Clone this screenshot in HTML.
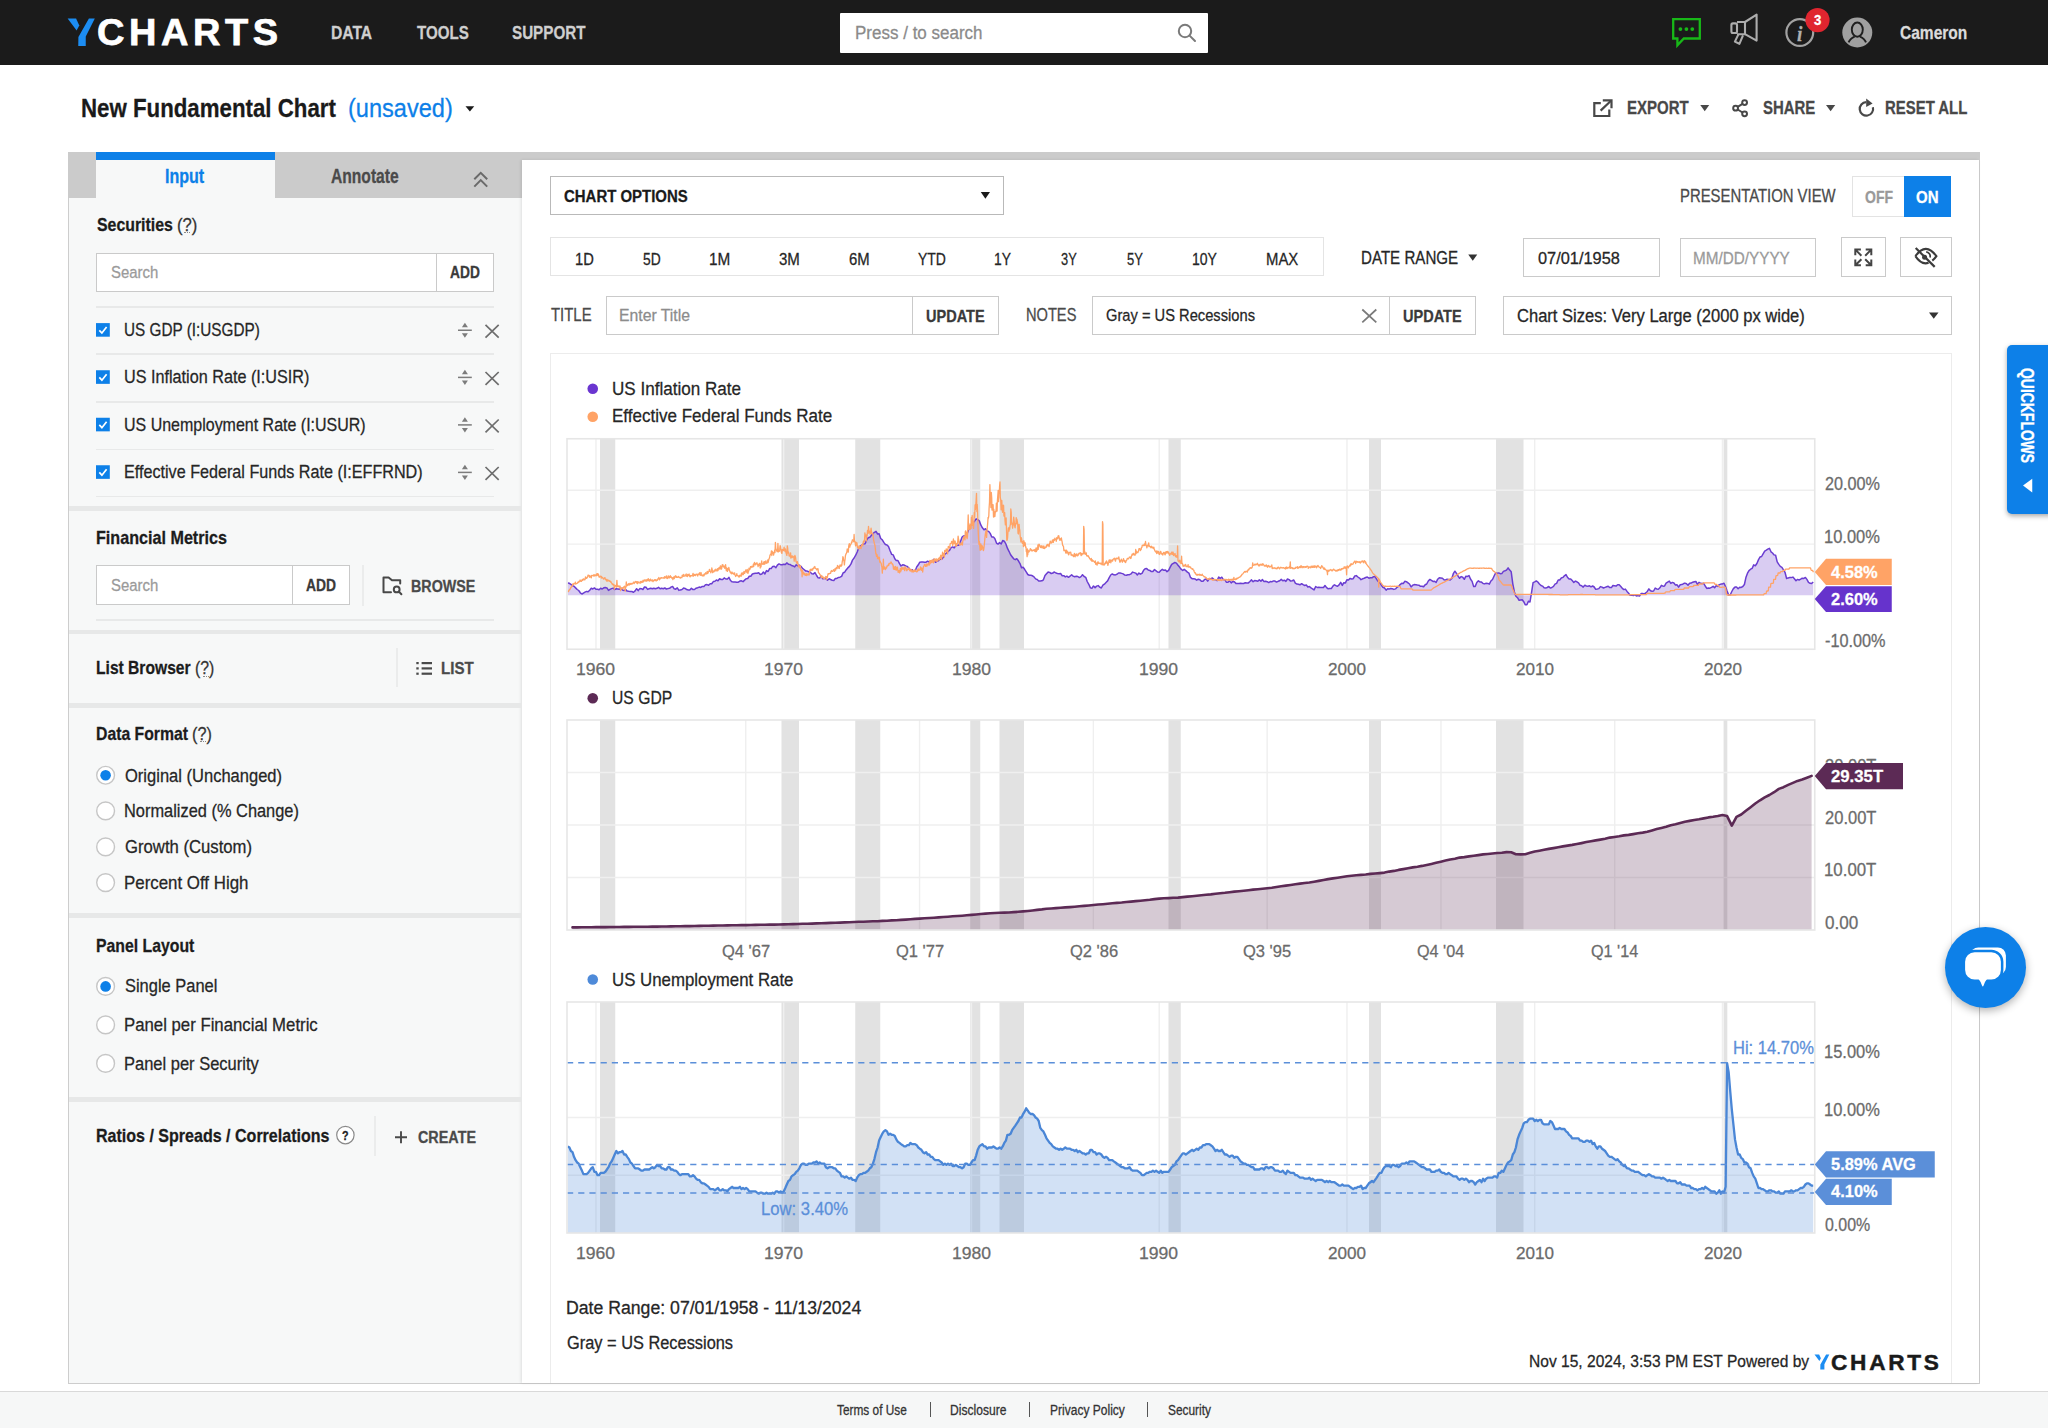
<!DOCTYPE html>
<html lang="en"><head><meta charset="utf-8"><title>New Fundamental Chart - YCharts</title>
<style>
html,body{margin:0;padding:0;background:#fff;}
body{width:2048px;height:1428px;position:relative;overflow:hidden;font-family:"Liberation Sans",sans-serif;}
.b{position:absolute;}
.t{position:absolute;white-space:pre;-webkit-text-stroke:0.28px;transform-origin:0 0;font-family:"Liberation Sans",sans-serif;font-weight:400;z-index:2;}
svg{position:absolute;left:0;top:0;overflow:visible;pointer-events:none;}
svg.chart{z-index:1;} svg.flags{z-index:2;} svg.icons{z-index:2;} svg.topicons{z-index:6;}
.tl{position:absolute;left:0;top:0;width:2048px;height:1428px;opacity:0.999;pointer-events:none;}
.qf{position:absolute;left:2021.2px;top:367.6px;width:0;height:0;transform:rotate(90deg);transform-origin:0 0;z-index:6;}
</style></head>
<body>
<!-- page chrome -->
<div class="b" style="left:0px;top:0px;width:2048.00px;height:64.50px;background:#1b1b1b;"></div>
<div class="b" style="left:839.5px;top:12.5px;width:368.75px;height:40.00px;background:#fff;border-radius:1px;"></div>
<div class="b" style="left:0px;top:1391px;width:2048.00px;height:37.00px;background:#f6f7f7;border-top:1px solid #d9d9d9;"></div>
<div class="b" style="left:929.5px;top:1402px;width:1.10px;height:15.00px;background:#555;"></div>
<div class="b" style="left:1028.5px;top:1402px;width:1.10px;height:15.00px;background:#555;"></div>
<div class="b" style="left:1146.5px;top:1402px;width:1.10px;height:15.00px;background:#555;"></div>
<div class="b" style="left:68px;top:151.75px;width:1912.00px;height:1231.85px;background:#fff;box-sizing:border-box;border:1px solid #cdcdcd;border-top:none;"></div>
<div class="b" style="left:68px;top:151.75px;width:1912.00px;height:7.85px;background:#cbcbcb;"></div>
<div class="b" style="left:69px;top:159.6px;width:452.60px;height:1223.00px;background:#f7f8f8;"></div>
<div class="b" style="left:68px;top:151.75px;width:454.00px;height:45.75px;background:#cbcbcb;"></div>
<div class="b" style="left:96px;top:151.75px;width:179.00px;height:45.85px;background:#f7f8f8;"></div>
<div class="b" style="left:96px;top:151.75px;width:179.00px;height:8.25px;background:#0d80e8;"></div>
<div class="b" style="left:522px;top:159.6px;width:1457.00px;height:1223.00px;background:#fff;box-shadow:-1px 0 3px rgba(0,0,0,0.10);"></div>
<div class="b" style="left:96.25px;top:306.2px;width:398.00px;height:1.60px;background:#e8e9e9;"></div>
<div class="b" style="left:96.25px;top:353.4px;width:398.00px;height:1.60px;background:#e8e9e9;"></div>
<div class="b" style="left:96.25px;top:401.2px;width:398.00px;height:1.60px;background:#e8e9e9;"></div>
<div class="b" style="left:96.25px;top:448.7px;width:398.00px;height:1.60px;background:#e8e9e9;"></div>
<div class="b" style="left:96.25px;top:495.7px;width:398.00px;height:1.60px;background:#e8e9e9;"></div>
<div class="b" style="left:96.25px;top:619.2px;width:398.00px;height:1.60px;background:#e8e9e9;"></div>
<div class="b" style="left:69px;top:505.75px;width:452.60px;height:5.00px;background:#e7e8e8;"></div>
<div class="b" style="left:69px;top:629.5px;width:452.60px;height:4.70px;background:#e7e8e8;"></div>
<div class="b" style="left:69px;top:703.25px;width:452.60px;height:4.65px;background:#e7e8e8;"></div>
<div class="b" style="left:69px;top:913.25px;width:452.60px;height:5.00px;background:#e7e8e8;"></div>
<div class="b" style="left:69px;top:1096.75px;width:452.60px;height:5.00px;background:#e7e8e8;"></div>
<div class="b" style="left:362.2px;top:564.5px;width:1.60px;height:41.25px;background:#ebecec;"></div>
<div class="b" style="left:395.95px;top:648.25px;width:1.60px;height:38.75px;background:#ebecec;"></div>
<div class="b" style="left:374.2px;top:1116px;width:1.60px;height:39.50px;background:#ebecec;"></div>
<div class="b" style="left:96.25px;top:252.5px;width:398.00px;height:39.80px;background:#fff;box-sizing:border-box;border:1px solid #cacaca;"></div>
<div class="b" style="left:436px;top:252.5px;width:1.00px;height:39.80px;background:#cacaca;"></div>
<div class="b" style="left:96.25px;top:565.25px;width:253.75px;height:39.75px;background:#fff;box-sizing:border-box;border:1px solid #cacaca;"></div>
<div class="b" style="left:292.2px;top:565.25px;width:1.00px;height:39.75px;background:#cacaca;"></div>
<div class="b" style="left:550.25px;top:175.5px;width:453.50px;height:39.50px;background:#fff;box-sizing:border-box;border:1px solid #b9b9b9;"></div>
<div class="b" style="left:1851.5px;top:175.75px;width:99.50px;height:41.25px;background:#fff;box-sizing:border-box;border:1px solid #e3e3e3;"></div>
<div class="b" style="left:1903.5px;top:175.75px;width:47.50px;height:41.25px;background:#0d80e8;"></div>
<div class="b" style="left:550.25px;top:237px;width:773.25px;height:39.40px;background:#fff;box-sizing:border-box;border:1px solid #e4e4e4;"></div>
<div class="b" style="left:1523.25px;top:237.5px;width:137.00px;height:39.50px;background:#fff;box-sizing:border-box;border:1px solid #cacaca;"></div>
<div class="b" style="left:1679.75px;top:237.5px;width:136.25px;height:39.50px;background:#fff;box-sizing:border-box;border:1px solid #cacaca;"></div>
<div class="b" style="left:1841px;top:236.75px;width:45.00px;height:40.00px;background:#fff;box-sizing:border-box;border:1px solid #cacaca;"></div>
<div class="b" style="left:1899.75px;top:236.75px;width:52.00px;height:40.00px;background:#fff;box-sizing:border-box;border:1px solid #cacaca;"></div>
<div class="b" style="left:606.25px;top:295.5px;width:392.50px;height:39.00px;background:#fff;box-sizing:border-box;border:1px solid #cacaca;"></div>
<div class="b" style="left:912px;top:295.5px;width:1.00px;height:39.00px;background:#cacaca;"></div>
<div class="b" style="left:1092px;top:295.5px;width:383.75px;height:39.00px;background:#fff;box-sizing:border-box;border:1px solid #cacaca;"></div>
<div class="b" style="left:1389px;top:295.5px;width:1.00px;height:39.00px;background:#cacaca;"></div>
<div class="b" style="left:1503.25px;top:295.5px;width:448.50px;height:39.00px;background:#fff;box-sizing:border-box;border:1px solid #cacaca;"></div>
<div class="b" style="left:550.25px;top:353px;width:1401.50px;height:1029.60px;box-sizing:border-box;border:1px solid #ececec;border-bottom:none;"></div>
<div class="b" style="left:183.9px;top:232.2px;width:6.40px;height:1.00px;border-bottom:1px dotted #8a8a8a;height:0;"></div>
<div class="b" style="left:202.65px;top:675.7px;width:6.40px;height:1.00px;border-bottom:1px dotted #8a8a8a;height:0;"></div>
<div class="b" style="left:199.65px;top:741.45px;width:6.40px;height:1.00px;border-bottom:1px dotted #8a8a8a;height:0;"></div>
<div class="b" style="left:2007.25px;top:344.5px;width:44.75px;height:169.25px;background:#0d80e8;border-radius:5px 0 0 5px;box-shadow:0 2px 5px rgba(0,0,0,0.35);z-index:5;"></div>
<div class="b" style="left:1945.1px;top:926.8px;width:81.20px;height:81.20px;background:#0d80e8;border-radius:50%;box-shadow:0 3px 8px rgba(0,0,0,0.3);z-index:5;"></div>
<!-- chart -->
<svg class="chart" width="2048" height="1428" viewBox="0 0 2048 1428">
<defs><clipPath id="c1"><rect x="567.0" y="438.75" width="1247.75" height="210.5"/></clipPath><clipPath id="c2"><rect x="567.0" y="720.0" width="1247.75" height="210.0"/></clipPath><clipPath id="c3"><rect x="567.0" y="1002.0" width="1247.75" height="231.0"/></clipPath></defs>
<g>
<rect x="567.0" y="438.75" width="1247.75" height="210.5" fill="#fff"/>
<rect x="600" y="438.75" width="15.25" height="210.5" fill="#e2e2e2"/>
<rect x="781.5" y="438.75" width="17.50" height="210.5" fill="#e2e2e2"/>
<rect x="855.25" y="438.75" width="25.00" height="210.5" fill="#e2e2e2"/>
<rect x="970.25" y="438.75" width="10.00" height="210.5" fill="#e2e2e2"/>
<rect x="999.5" y="438.75" width="24.50" height="210.5" fill="#e2e2e2"/>
<rect x="1168.5" y="438.75" width="12.25" height="210.5" fill="#e2e2e2"/>
<rect x="1369" y="438.75" width="12.00" height="210.5" fill="#e2e2e2"/>
<rect x="1496" y="438.75" width="27.50" height="210.5" fill="#e2e2e2"/>
<rect x="1723.6" y="438.75" width="3.70" height="210.5" fill="#e2e2e2"/>
<line x1="595.95" x2="595.95" y1="438.75" y2="649.25" stroke="#efefef" stroke-width="1.4"/>
<line x1="783.70" x2="783.70" y1="438.75" y2="649.25" stroke="#efefef" stroke-width="1.4"/>
<line x1="971.45" x2="971.45" y1="438.75" y2="649.25" stroke="#efefef" stroke-width="1.4"/>
<line x1="1159.20" x2="1159.20" y1="438.75" y2="649.25" stroke="#efefef" stroke-width="1.4"/>
<line x1="1346.95" x2="1346.95" y1="438.75" y2="649.25" stroke="#efefef" stroke-width="1.4"/>
<line x1="1534.70" x2="1534.70" y1="438.75" y2="649.25" stroke="#efefef" stroke-width="1.4"/>
<line x1="1722.45" x2="1722.45" y1="438.75" y2="649.25" stroke="#efefef" stroke-width="1.4"/>
<line x1="567.0" x2="1814.75" y1="490.30" y2="490.30" stroke="#efefef" stroke-width="1.4"/>
<line x1="567.0" x2="1814.75" y1="544.10" y2="544.10" stroke="#efefef" stroke-width="1.4"/>
</g>
<g>
<rect x="567.0" y="720.0" width="1247.75" height="210.0" fill="#fff"/>
<rect x="600" y="720.0" width="15.25" height="210.0" fill="#e2e2e2"/>
<rect x="781.5" y="720.0" width="17.50" height="210.0" fill="#e2e2e2"/>
<rect x="855.25" y="720.0" width="25.00" height="210.0" fill="#e2e2e2"/>
<rect x="970.25" y="720.0" width="10.00" height="210.0" fill="#e2e2e2"/>
<rect x="999.5" y="720.0" width="24.50" height="210.0" fill="#e2e2e2"/>
<rect x="1168.5" y="720.0" width="12.25" height="210.0" fill="#e2e2e2"/>
<rect x="1369" y="720.0" width="12.00" height="210.0" fill="#e2e2e2"/>
<rect x="1496" y="720.0" width="27.50" height="210.0" fill="#e2e2e2"/>
<rect x="1723.6" y="720.0" width="3.70" height="210.0" fill="#e2e2e2"/>
<line x1="745.75" x2="745.75" y1="720.0" y2="930.0" stroke="#efefef" stroke-width="1.4"/>
<line x1="919.55" x2="919.55" y1="720.0" y2="930.0" stroke="#efefef" stroke-width="1.4"/>
<line x1="1093.35" x2="1093.35" y1="720.0" y2="930.0" stroke="#efefef" stroke-width="1.4"/>
<line x1="1267.15" x2="1267.15" y1="720.0" y2="930.0" stroke="#efefef" stroke-width="1.4"/>
<line x1="1440.95" x2="1440.95" y1="720.0" y2="930.0" stroke="#efefef" stroke-width="1.4"/>
<line x1="1614.75" x2="1614.75" y1="720.0" y2="930.0" stroke="#efefef" stroke-width="1.4"/>
<line x1="567.0" x2="1814.75" y1="772.50" y2="772.50" stroke="#efefef" stroke-width="1.4"/>
<line x1="567.0" x2="1814.75" y1="825.00" y2="825.00" stroke="#efefef" stroke-width="1.4"/>
<line x1="567.0" x2="1814.75" y1="877.50" y2="877.50" stroke="#efefef" stroke-width="1.4"/>
</g>
<g>
<rect x="567.0" y="1002.0" width="1247.75" height="231.0" fill="#fff"/>
<rect x="600" y="1002.0" width="15.25" height="231.0" fill="#e2e2e2"/>
<rect x="781.5" y="1002.0" width="17.50" height="231.0" fill="#e2e2e2"/>
<rect x="855.25" y="1002.0" width="25.00" height="231.0" fill="#e2e2e2"/>
<rect x="970.25" y="1002.0" width="10.00" height="231.0" fill="#e2e2e2"/>
<rect x="999.5" y="1002.0" width="24.50" height="231.0" fill="#e2e2e2"/>
<rect x="1168.5" y="1002.0" width="12.25" height="231.0" fill="#e2e2e2"/>
<rect x="1369" y="1002.0" width="12.00" height="231.0" fill="#e2e2e2"/>
<rect x="1496" y="1002.0" width="27.50" height="231.0" fill="#e2e2e2"/>
<rect x="1723.6" y="1002.0" width="3.70" height="231.0" fill="#e2e2e2"/>
<line x1="595.95" x2="595.95" y1="1002.0" y2="1233.0" stroke="#efefef" stroke-width="1.4"/>
<line x1="783.70" x2="783.70" y1="1002.0" y2="1233.0" stroke="#efefef" stroke-width="1.4"/>
<line x1="971.45" x2="971.45" y1="1002.0" y2="1233.0" stroke="#efefef" stroke-width="1.4"/>
<line x1="1159.20" x2="1159.20" y1="1002.0" y2="1233.0" stroke="#efefef" stroke-width="1.4"/>
<line x1="1346.95" x2="1346.95" y1="1002.0" y2="1233.0" stroke="#efefef" stroke-width="1.4"/>
<line x1="1534.70" x2="1534.70" y1="1002.0" y2="1233.0" stroke="#efefef" stroke-width="1.4"/>
<line x1="1722.45" x2="1722.45" y1="1002.0" y2="1233.0" stroke="#efefef" stroke-width="1.4"/>
<line x1="567.0" x2="1814.75" y1="1117.50" y2="1117.50" stroke="#efefef" stroke-width="1.4"/>
<line x1="567.0" x2="1814.75" y1="1175.25" y2="1175.25" stroke="#efefef" stroke-width="1.4"/>
</g>
<g clip-path="url(#c1)"><polygon fill="#6633cc" fill-opacity="0.25" points="567.8,595.3 567.8,582.9 569.4,583.3 570.9,584.4 572.5,585.8 574.0,586.3 575.6,587.9 577.2,589.5 578.7,590.5 580.3,592.8 581.9,594.0 583.4,593.1 585.0,592.1 586.6,591.4 588.1,591.7 589.7,590.2 591.3,588.3 592.8,589.0 594.4,587.9 595.9,589.3 597.5,589.2 599.1,589.7 600.6,588.3 602.2,589.0 603.8,587.8 605.3,587.5 606.9,587.9 608.5,590.4 610.0,589.4 611.6,588.6 613.2,588.1 614.7,589.5 616.3,588.8 617.9,589.0 619.4,589.3 621.0,588.1 622.5,590.0 624.1,590.4 625.7,589.6 627.2,591.1 628.8,591.3 630.4,591.4 631.9,591.5 633.5,592.3 635.1,590.9 636.6,588.7 638.2,590.6 639.8,588.6 641.3,588.7 642.9,589.5 644.5,587.0 646.0,587.3 647.6,589.4 649.1,588.8 650.7,588.2 652.3,588.8 653.8,588.2 655.4,588.8 657.0,588.3 658.5,587.3 660.1,588.8 661.7,588.3 663.2,588.7 664.8,588.0 666.4,589.0 667.9,588.6 669.5,588.3 671.0,587.1 672.6,586.4 674.2,588.8 675.7,589.2 677.3,587.9 678.9,590.4 680.4,589.9 682.0,589.5 683.6,588.1 685.1,588.4 686.7,589.6 688.3,590.0 689.8,590.0 691.4,588.2 693.0,589.6 694.5,589.5 696.1,588.2 697.6,587.7 699.2,587.1 700.8,587.4 702.3,586.4 703.9,586.4 705.5,584.7 707.0,584.6 708.6,585.2 710.2,583.7 711.7,583.7 713.3,581.6 714.9,581.3 716.4,580.0 718.0,580.8 719.6,578.8 721.1,579.5 722.7,579.5 724.2,577.9 725.8,579.0 727.4,579.0 728.9,577.4 730.5,580.5 732.1,581.8 733.6,581.9 735.2,581.9 736.8,582.2 738.3,582.2 739.9,581.1 741.5,580.8 743.0,581.7 744.6,580.1 746.1,578.7 747.7,578.5 749.3,576.3 750.8,576.3 752.4,574.0 754.0,573.6 755.5,573.2 757.1,573.3 758.7,572.8 760.2,574.4 761.8,574.0 763.4,572.1 764.9,573.9 766.5,570.6 768.1,571.5 769.6,568.6 771.2,568.6 772.7,566.4 774.3,566.3 775.9,567.7 777.4,565.2 779.0,563.9 780.6,564.7 782.1,564.7 783.7,564.3 785.3,564.6 786.8,562.9 788.4,564.2 790.0,564.4 791.5,565.5 793.1,565.9 794.7,566.9 796.2,564.8 797.8,565.8 799.3,565.2 800.9,566.3 802.5,568.4 804.0,569.5 805.6,570.9 807.2,571.1 808.7,571.7 810.3,572.2 811.9,573.7 813.4,573.9 815.0,572.6 816.6,575.5 818.1,577.8 819.7,577.9 821.2,576.4 822.8,578.8 824.4,578.4 825.9,578.6 827.5,580.2 829.1,578.8 830.6,579.5 832.2,580.2 833.8,580.4 835.3,578.6 836.9,578.4 838.5,577.4 840.0,577.2 841.6,576.4 843.2,572.8 844.7,572.2 846.3,569.7 847.8,567.9 849.4,566.4 851.0,563.9 852.5,560.1 854.1,558.0 855.7,555.2 857.2,552.0 858.8,547.8 860.4,546.1 861.9,544.7 863.5,544.1 865.1,543.7 866.6,540.1 868.2,537.8 869.8,537.2 871.3,535.4 872.9,533.8 874.4,532.3 876.0,531.4 877.6,534.0 879.1,533.7 880.7,538.5 882.3,539.8 883.8,542.4 885.4,544.5 887.0,544.9 888.5,546.5 890.1,550.7 891.7,554.4 893.2,554.9 894.8,558.7 896.3,560.6 897.9,560.5 899.5,563.7 901.0,566.0 902.6,564.8 904.2,565.1 905.7,565.9 907.3,566.4 908.9,568.1 910.4,569.9 912.0,569.7 913.6,571.0 915.1,571.0 916.7,567.0 918.3,564.8 919.8,562.2 921.4,562.1 922.9,562.1 924.5,562.3 926.1,562.2 927.6,561.2 929.2,562.0 930.8,561.1 932.3,561.0 933.9,559.3 935.5,562.3 937.0,561.1 938.6,560.7 940.2,559.3 941.7,559.2 943.3,557.2 944.9,554.2 946.4,553.1 948.0,551.5 949.5,550.4 951.1,547.6 952.7,546.9 954.2,547.9 955.8,545.8 957.4,545.3 958.9,545.3 960.5,541.4 962.1,537.0 963.6,535.9 965.2,535.9 966.8,534.7 968.3,530.4 969.9,527.3 971.4,524.0 973.0,522.7 974.6,521.1 976.1,518.8 977.7,519.6 979.3,520.8 980.8,524.9 982.4,527.8 984.0,529.8 985.5,528.7 987.1,531.1 988.7,531.4 990.2,533.4 991.8,537.0 993.4,536.9 994.9,538.8 996.5,543.1 998.0,544.1 999.6,542.6 1001.2,544.0 1002.7,540.5 1004.3,541.2 1005.9,544.0 1007.4,548.2 1009.0,551.3 1010.6,554.7 1012.1,556.7 1013.7,558.8 1015.3,559.7 1016.8,558.7 1018.4,560.8 1020.0,563.6 1021.5,567.7 1023.1,567.2 1024.6,569.3 1026.2,571.8 1027.8,574.5 1029.3,575.2 1030.9,575.3 1032.5,575.8 1034.0,576.9 1035.6,578.9 1037.2,579.5 1038.7,581.0 1040.3,580.9 1041.9,580.8 1043.4,579.8 1045.0,575.5 1046.5,573.7 1048.1,572.1 1049.7,572.4 1051.2,573.6 1052.8,573.0 1054.4,572.0 1055.9,573.0 1057.5,573.4 1059.1,573.7 1060.6,573.5 1062.2,575.7 1063.8,575.7 1065.3,576.9 1066.9,576.1 1068.5,577.3 1070.0,576.2 1071.6,574.8 1073.1,576.1 1074.7,576.8 1076.3,576.3 1077.8,576.5 1079.4,577.6 1081.0,576.6 1082.5,574.7 1084.1,576.5 1085.7,577.3 1087.2,581.5 1088.8,584.3 1090.4,587.9 1091.9,588.3 1093.5,586.0 1095.1,587.6 1096.6,586.1 1098.2,585.6 1099.7,587.2 1101.3,588.0 1102.9,585.2 1104.4,584.2 1106.0,582.5 1107.6,580.9 1109.1,577.9 1110.7,575.0 1112.3,573.9 1113.8,574.8 1115.4,574.9 1117.0,574.3 1118.5,573.0 1120.1,573.0 1121.6,573.4 1123.2,573.9 1124.8,575.1 1126.3,575.2 1127.9,574.7 1129.5,574.7 1131.0,573.9 1132.6,572.1 1134.2,572.6 1135.7,573.1 1137.3,574.9 1138.9,573.1 1140.4,574.2 1142.0,573.4 1143.6,570.3 1145.1,568.8 1146.7,568.6 1148.2,570.0 1149.8,570.4 1151.4,571.6 1152.9,571.4 1154.5,569.6 1156.1,570.8 1157.6,572.1 1159.2,572.3 1160.8,570.5 1162.3,569.3 1163.9,570.3 1165.5,570.0 1167.0,571.7 1168.6,570.4 1170.2,567.2 1171.7,564.4 1173.3,563.3 1174.8,562.5 1176.4,563.1 1178.0,565.3 1179.5,567.1 1181.1,569.2 1182.7,570.5 1184.2,569.3 1185.8,570.6 1187.4,572.1 1188.9,573.1 1190.5,577.4 1192.1,578.7 1193.6,578.7 1195.2,579.1 1196.7,580.2 1198.3,579.2 1199.9,579.7 1201.4,581.3 1203.0,581.3 1204.6,579.4 1206.1,579.0 1207.7,581.1 1209.3,578.7 1210.8,578.7 1212.4,578.0 1214.0,579.6 1215.5,579.8 1217.1,580.6 1218.7,577.0 1220.2,578.4 1221.8,577.2 1223.3,579.6 1224.9,579.9 1226.5,582.3 1228.0,582.2 1229.6,580.9 1231.2,582.9 1232.7,581.4 1234.3,581.8 1235.9,583.4 1237.4,583.5 1239.0,583.5 1240.6,583.2 1242.1,583.5 1243.7,583.5 1245.3,582.7 1246.8,582.9 1248.4,582.9 1249.9,581.5 1251.5,579.9 1253.1,581.7 1254.6,580.6 1256.2,580.8 1257.8,581.3 1259.3,579.9 1260.9,581.1 1262.5,579.6 1264.0,581.6 1265.6,581.2 1267.2,581.7 1268.7,582.6 1270.3,581.5 1271.8,581.8 1273.4,580.9 1275.0,581.1 1276.5,582.1 1278.1,581.3 1279.7,580.7 1281.2,579.4 1282.8,580.8 1284.4,580.2 1285.9,581.4 1287.5,579.0 1289.1,579.6 1290.6,581.1 1292.2,580.7 1293.8,580.0 1295.3,583.1 1296.9,584.1 1298.4,584.2 1300.0,584.8 1301.6,583.7 1303.1,584.7 1304.7,585.5 1306.3,585.1 1307.8,586.9 1309.4,586.5 1311.0,587.9 1312.5,588.8 1314.1,589.9 1315.7,586.5 1317.2,587.5 1318.8,587.3 1320.4,587.5 1321.9,587.4 1323.5,587.5 1325.0,585.5 1326.6,587.6 1328.2,588.8 1329.7,588.5 1331.3,588.6 1332.9,586.1 1334.4,584.8 1336.0,585.7 1337.6,586.2 1339.1,584.9 1340.7,582.3 1342.3,585.4 1343.8,582.7 1345.4,582.9 1346.9,579.7 1348.5,580.0 1350.1,578.4 1351.6,579.0 1353.2,578.7 1354.8,576.0 1356.3,575.6 1357.9,577.0 1359.5,578.1 1361.0,579.7 1362.6,578.8 1364.2,578.2 1365.7,577.5 1367.3,577.0 1368.9,578.2 1370.4,577.8 1372.0,577.8 1373.5,576.7 1375.1,576.6 1376.7,579.3 1378.2,581.5 1379.8,582.8 1381.4,585.2 1382.9,587.3 1384.5,588.0 1386.1,590.1 1387.6,588.8 1389.2,589.0 1390.8,588.6 1392.3,588.8 1393.9,589.4 1395.5,588.9 1397.0,587.3 1398.6,586.4 1400.1,584.6 1401.7,583.3 1403.3,583.5 1404.8,581.3 1406.4,581.7 1408.0,582.9 1409.5,584.0 1411.1,586.9 1412.7,585.2 1414.2,584.6 1415.8,584.7 1417.4,585.0 1418.9,585.2 1420.5,586.3 1422.0,586.2 1423.6,586.8 1425.2,584.7 1426.7,584.0 1428.3,581.0 1429.9,579.4 1431.4,580.3 1433.0,581.4 1434.6,581.2 1436.1,582.5 1437.7,579.2 1439.3,577.7 1440.8,577.9 1442.4,578.2 1444.0,579.7 1445.5,579.9 1447.1,579.3 1448.6,579.5 1450.2,579.9 1451.8,578.5 1453.3,573.7 1454.9,571.2 1456.5,573.4 1458.0,576.0 1459.6,578.3 1461.2,576.6 1462.7,577.2 1464.3,579.3 1465.9,576.2 1467.4,576.4 1469.0,575.6 1470.6,579.3 1472.1,581.4 1473.7,586.6 1475.2,586.4 1476.8,582.5 1478.4,580.8 1479.9,581.9 1481.5,582.1 1483.1,583.5 1484.6,583.9 1486.2,583.3 1487.8,583.4 1489.3,584.1 1490.9,581.0 1492.5,579.5 1494.0,576.3 1495.6,573.0 1497.1,573.2 1498.7,572.9 1500.3,573.7 1501.8,573.6 1503.4,571.4 1505.0,570.8 1506.5,570.1 1508.1,567.9 1509.7,570.1 1511.2,571.8 1512.8,583.8 1514.4,592.0 1515.9,596.3 1517.5,597.7 1519.1,600.3 1520.6,600.0 1522.2,599.8 1523.7,601.7 1525.3,604.8 1526.9,604.7 1528.4,601.3 1530.0,602.0 1531.6,592.1 1533.1,582.6 1534.7,581.9 1536.3,580.9 1537.8,582.0 1539.4,584.0 1541.0,585.5 1542.5,586.1 1544.1,587.8 1545.7,588.1 1547.2,587.5 1548.8,586.5 1550.3,588.1 1551.9,587.5 1553.5,586.4 1555.0,584.2 1556.6,583.3 1558.2,580.0 1559.7,579.9 1561.3,578.0 1562.9,577.4 1564.4,575.8 1566.0,574.6 1567.6,577.5 1569.1,579.0 1570.7,579.0 1572.2,580.6 1573.8,582.5 1575.4,581.1 1576.9,581.8 1578.5,582.8 1580.1,585.3 1581.6,585.7 1583.2,587.1 1584.8,585.2 1586.3,586.0 1587.9,586.2 1589.5,585.8 1591.0,586.8 1592.6,586.0 1594.2,587.0 1595.7,589.3 1597.3,589.0 1598.8,588.6 1600.4,586.6 1602.0,587.1 1603.5,588.0 1605.1,587.4 1606.7,586.8 1608.2,586.2 1609.8,587.6 1611.4,587.6 1612.9,585.5 1614.5,585.8 1616.1,586.1 1617.6,584.8 1619.2,584.8 1620.8,586.5 1622.3,588.3 1623.9,589.6 1625.4,589.1 1627.0,591.4 1628.6,593.2 1630.1,595.2 1631.7,595.0 1633.3,595.6 1634.8,594.9 1636.4,595.9 1638.0,595.6 1639.5,596.1 1641.1,593.6 1642.7,593.5 1644.2,593.9 1645.8,593.0 1647.3,591.4 1648.9,588.9 1650.5,590.8 1652.0,591.3 1653.6,591.0 1655.2,588.1 1656.7,588.9 1658.3,589.2 1659.9,587.8 1661.4,585.3 1663.0,586.2 1664.6,585.9 1666.1,583.2 1667.7,582.1 1669.3,581.1 1670.8,583.4 1672.4,582.4 1673.9,583.0 1675.5,585.1 1677.1,584.8 1678.6,587.1 1680.2,584.8 1681.8,584.6 1683.3,583.8 1684.9,583.1 1686.5,583.8 1688.0,585.3 1689.6,583.3 1691.2,583.1 1692.7,582.2 1694.3,581.7 1695.9,581.4 1697.4,584.3 1699.0,582.4 1700.5,583.3 1702.1,583.4 1703.7,583.3 1705.2,586.0 1706.8,588.4 1708.4,588.1 1709.9,588.2 1711.5,587.4 1713.1,586.3 1714.6,587.8 1716.2,585.6 1717.8,586.4 1719.3,584.6 1720.9,584.1 1722.4,583.9 1724.0,583.2 1725.6,586.8 1727.1,591.1 1728.7,595.1 1730.3,594.7 1731.8,591.5 1733.4,588.6 1735.0,587.1 1736.5,587.1 1738.1,588.8 1739.7,587.2 1741.2,587.4 1742.8,586.5 1744.4,584.5 1745.9,577.6 1747.5,573.2 1749.0,570.6 1750.6,569.2 1752.2,568.3 1753.7,564.9 1755.3,565.8 1756.9,563.5 1758.4,559.9 1760.0,557.0 1761.6,556.5 1763.1,553.9 1764.7,551.1 1766.3,550.1 1767.8,549.1 1769.4,548.3 1771.0,551.8 1772.5,553.0 1774.1,554.9 1775.6,555.3 1777.2,561.9 1778.8,564.4 1780.3,566.4 1781.9,567.3 1783.5,569.8 1785.0,572.3 1786.6,578.5 1788.2,577.9 1789.7,577.6 1791.3,577.6 1792.9,577.1 1794.4,578.7 1796.0,580.7 1797.5,579.4 1799.1,580.0 1800.7,579.2 1802.2,578.2 1803.8,578.4 1805.4,577.5 1806.9,579.4 1808.5,582.4 1810.1,583.3 1811.6,583.6 1813.2,581.9 1813.2,595.3"/>
<polyline fill="none" stroke="#6a3dd1" stroke-width="1.5" stroke-linejoin="round" points="567.8,582.9 569.4,583.3 570.9,584.4 572.5,585.8 574.0,586.3 575.6,587.9 577.2,589.5 578.7,590.5 580.3,592.8 581.9,594.0 583.4,593.1 585.0,592.1 586.6,591.4 588.1,591.7 589.7,590.2 591.3,588.3 592.8,589.0 594.4,587.9 595.9,589.3 597.5,589.2 599.1,589.7 600.6,588.3 602.2,589.0 603.8,587.8 605.3,587.5 606.9,587.9 608.5,590.4 610.0,589.4 611.6,588.6 613.2,588.1 614.7,589.5 616.3,588.8 617.9,589.0 619.4,589.3 621.0,588.1 622.5,590.0 624.1,590.4 625.7,589.6 627.2,591.1 628.8,591.3 630.4,591.4 631.9,591.5 633.5,592.3 635.1,590.9 636.6,588.7 638.2,590.6 639.8,588.6 641.3,588.7 642.9,589.5 644.5,587.0 646.0,587.3 647.6,589.4 649.1,588.8 650.7,588.2 652.3,588.8 653.8,588.2 655.4,588.8 657.0,588.3 658.5,587.3 660.1,588.8 661.7,588.3 663.2,588.7 664.8,588.0 666.4,589.0 667.9,588.6 669.5,588.3 671.0,587.1 672.6,586.4 674.2,588.8 675.7,589.2 677.3,587.9 678.9,590.4 680.4,589.9 682.0,589.5 683.6,588.1 685.1,588.4 686.7,589.6 688.3,590.0 689.8,590.0 691.4,588.2 693.0,589.6 694.5,589.5 696.1,588.2 697.6,587.7 699.2,587.1 700.8,587.4 702.3,586.4 703.9,586.4 705.5,584.7 707.0,584.6 708.6,585.2 710.2,583.7 711.7,583.7 713.3,581.6 714.9,581.3 716.4,580.0 718.0,580.8 719.6,578.8 721.1,579.5 722.7,579.5 724.2,577.9 725.8,579.0 727.4,579.0 728.9,577.4 730.5,580.5 732.1,581.8 733.6,581.9 735.2,581.9 736.8,582.2 738.3,582.2 739.9,581.1 741.5,580.8 743.0,581.7 744.6,580.1 746.1,578.7 747.7,578.5 749.3,576.3 750.8,576.3 752.4,574.0 754.0,573.6 755.5,573.2 757.1,573.3 758.7,572.8 760.2,574.4 761.8,574.0 763.4,572.1 764.9,573.9 766.5,570.6 768.1,571.5 769.6,568.6 771.2,568.6 772.7,566.4 774.3,566.3 775.9,567.7 777.4,565.2 779.0,563.9 780.6,564.7 782.1,564.7 783.7,564.3 785.3,564.6 786.8,562.9 788.4,564.2 790.0,564.4 791.5,565.5 793.1,565.9 794.7,566.9 796.2,564.8 797.8,565.8 799.3,565.2 800.9,566.3 802.5,568.4 804.0,569.5 805.6,570.9 807.2,571.1 808.7,571.7 810.3,572.2 811.9,573.7 813.4,573.9 815.0,572.6 816.6,575.5 818.1,577.8 819.7,577.9 821.2,576.4 822.8,578.8 824.4,578.4 825.9,578.6 827.5,580.2 829.1,578.8 830.6,579.5 832.2,580.2 833.8,580.4 835.3,578.6 836.9,578.4 838.5,577.4 840.0,577.2 841.6,576.4 843.2,572.8 844.7,572.2 846.3,569.7 847.8,567.9 849.4,566.4 851.0,563.9 852.5,560.1 854.1,558.0 855.7,555.2 857.2,552.0 858.8,547.8 860.4,546.1 861.9,544.7 863.5,544.1 865.1,543.7 866.6,540.1 868.2,537.8 869.8,537.2 871.3,535.4 872.9,533.8 874.4,532.3 876.0,531.4 877.6,534.0 879.1,533.7 880.7,538.5 882.3,539.8 883.8,542.4 885.4,544.5 887.0,544.9 888.5,546.5 890.1,550.7 891.7,554.4 893.2,554.9 894.8,558.7 896.3,560.6 897.9,560.5 899.5,563.7 901.0,566.0 902.6,564.8 904.2,565.1 905.7,565.9 907.3,566.4 908.9,568.1 910.4,569.9 912.0,569.7 913.6,571.0 915.1,571.0 916.7,567.0 918.3,564.8 919.8,562.2 921.4,562.1 922.9,562.1 924.5,562.3 926.1,562.2 927.6,561.2 929.2,562.0 930.8,561.1 932.3,561.0 933.9,559.3 935.5,562.3 937.0,561.1 938.6,560.7 940.2,559.3 941.7,559.2 943.3,557.2 944.9,554.2 946.4,553.1 948.0,551.5 949.5,550.4 951.1,547.6 952.7,546.9 954.2,547.9 955.8,545.8 957.4,545.3 958.9,545.3 960.5,541.4 962.1,537.0 963.6,535.9 965.2,535.9 966.8,534.7 968.3,530.4 969.9,527.3 971.4,524.0 973.0,522.7 974.6,521.1 976.1,518.8 977.7,519.6 979.3,520.8 980.8,524.9 982.4,527.8 984.0,529.8 985.5,528.7 987.1,531.1 988.7,531.4 990.2,533.4 991.8,537.0 993.4,536.9 994.9,538.8 996.5,543.1 998.0,544.1 999.6,542.6 1001.2,544.0 1002.7,540.5 1004.3,541.2 1005.9,544.0 1007.4,548.2 1009.0,551.3 1010.6,554.7 1012.1,556.7 1013.7,558.8 1015.3,559.7 1016.8,558.7 1018.4,560.8 1020.0,563.6 1021.5,567.7 1023.1,567.2 1024.6,569.3 1026.2,571.8 1027.8,574.5 1029.3,575.2 1030.9,575.3 1032.5,575.8 1034.0,576.9 1035.6,578.9 1037.2,579.5 1038.7,581.0 1040.3,580.9 1041.9,580.8 1043.4,579.8 1045.0,575.5 1046.5,573.7 1048.1,572.1 1049.7,572.4 1051.2,573.6 1052.8,573.0 1054.4,572.0 1055.9,573.0 1057.5,573.4 1059.1,573.7 1060.6,573.5 1062.2,575.7 1063.8,575.7 1065.3,576.9 1066.9,576.1 1068.5,577.3 1070.0,576.2 1071.6,574.8 1073.1,576.1 1074.7,576.8 1076.3,576.3 1077.8,576.5 1079.4,577.6 1081.0,576.6 1082.5,574.7 1084.1,576.5 1085.7,577.3 1087.2,581.5 1088.8,584.3 1090.4,587.9 1091.9,588.3 1093.5,586.0 1095.1,587.6 1096.6,586.1 1098.2,585.6 1099.7,587.2 1101.3,588.0 1102.9,585.2 1104.4,584.2 1106.0,582.5 1107.6,580.9 1109.1,577.9 1110.7,575.0 1112.3,573.9 1113.8,574.8 1115.4,574.9 1117.0,574.3 1118.5,573.0 1120.1,573.0 1121.6,573.4 1123.2,573.9 1124.8,575.1 1126.3,575.2 1127.9,574.7 1129.5,574.7 1131.0,573.9 1132.6,572.1 1134.2,572.6 1135.7,573.1 1137.3,574.9 1138.9,573.1 1140.4,574.2 1142.0,573.4 1143.6,570.3 1145.1,568.8 1146.7,568.6 1148.2,570.0 1149.8,570.4 1151.4,571.6 1152.9,571.4 1154.5,569.6 1156.1,570.8 1157.6,572.1 1159.2,572.3 1160.8,570.5 1162.3,569.3 1163.9,570.3 1165.5,570.0 1167.0,571.7 1168.6,570.4 1170.2,567.2 1171.7,564.4 1173.3,563.3 1174.8,562.5 1176.4,563.1 1178.0,565.3 1179.5,567.1 1181.1,569.2 1182.7,570.5 1184.2,569.3 1185.8,570.6 1187.4,572.1 1188.9,573.1 1190.5,577.4 1192.1,578.7 1193.6,578.7 1195.2,579.1 1196.7,580.2 1198.3,579.2 1199.9,579.7 1201.4,581.3 1203.0,581.3 1204.6,579.4 1206.1,579.0 1207.7,581.1 1209.3,578.7 1210.8,578.7 1212.4,578.0 1214.0,579.6 1215.5,579.8 1217.1,580.6 1218.7,577.0 1220.2,578.4 1221.8,577.2 1223.3,579.6 1224.9,579.9 1226.5,582.3 1228.0,582.2 1229.6,580.9 1231.2,582.9 1232.7,581.4 1234.3,581.8 1235.9,583.4 1237.4,583.5 1239.0,583.5 1240.6,583.2 1242.1,583.5 1243.7,583.5 1245.3,582.7 1246.8,582.9 1248.4,582.9 1249.9,581.5 1251.5,579.9 1253.1,581.7 1254.6,580.6 1256.2,580.8 1257.8,581.3 1259.3,579.9 1260.9,581.1 1262.5,579.6 1264.0,581.6 1265.6,581.2 1267.2,581.7 1268.7,582.6 1270.3,581.5 1271.8,581.8 1273.4,580.9 1275.0,581.1 1276.5,582.1 1278.1,581.3 1279.7,580.7 1281.2,579.4 1282.8,580.8 1284.4,580.2 1285.9,581.4 1287.5,579.0 1289.1,579.6 1290.6,581.1 1292.2,580.7 1293.8,580.0 1295.3,583.1 1296.9,584.1 1298.4,584.2 1300.0,584.8 1301.6,583.7 1303.1,584.7 1304.7,585.5 1306.3,585.1 1307.8,586.9 1309.4,586.5 1311.0,587.9 1312.5,588.8 1314.1,589.9 1315.7,586.5 1317.2,587.5 1318.8,587.3 1320.4,587.5 1321.9,587.4 1323.5,587.5 1325.0,585.5 1326.6,587.6 1328.2,588.8 1329.7,588.5 1331.3,588.6 1332.9,586.1 1334.4,584.8 1336.0,585.7 1337.6,586.2 1339.1,584.9 1340.7,582.3 1342.3,585.4 1343.8,582.7 1345.4,582.9 1346.9,579.7 1348.5,580.0 1350.1,578.4 1351.6,579.0 1353.2,578.7 1354.8,576.0 1356.3,575.6 1357.9,577.0 1359.5,578.1 1361.0,579.7 1362.6,578.8 1364.2,578.2 1365.7,577.5 1367.3,577.0 1368.9,578.2 1370.4,577.8 1372.0,577.8 1373.5,576.7 1375.1,576.6 1376.7,579.3 1378.2,581.5 1379.8,582.8 1381.4,585.2 1382.9,587.3 1384.5,588.0 1386.1,590.1 1387.6,588.8 1389.2,589.0 1390.8,588.6 1392.3,588.8 1393.9,589.4 1395.5,588.9 1397.0,587.3 1398.6,586.4 1400.1,584.6 1401.7,583.3 1403.3,583.5 1404.8,581.3 1406.4,581.7 1408.0,582.9 1409.5,584.0 1411.1,586.9 1412.7,585.2 1414.2,584.6 1415.8,584.7 1417.4,585.0 1418.9,585.2 1420.5,586.3 1422.0,586.2 1423.6,586.8 1425.2,584.7 1426.7,584.0 1428.3,581.0 1429.9,579.4 1431.4,580.3 1433.0,581.4 1434.6,581.2 1436.1,582.5 1437.7,579.2 1439.3,577.7 1440.8,577.9 1442.4,578.2 1444.0,579.7 1445.5,579.9 1447.1,579.3 1448.6,579.5 1450.2,579.9 1451.8,578.5 1453.3,573.7 1454.9,571.2 1456.5,573.4 1458.0,576.0 1459.6,578.3 1461.2,576.6 1462.7,577.2 1464.3,579.3 1465.9,576.2 1467.4,576.4 1469.0,575.6 1470.6,579.3 1472.1,581.4 1473.7,586.6 1475.2,586.4 1476.8,582.5 1478.4,580.8 1479.9,581.9 1481.5,582.1 1483.1,583.5 1484.6,583.9 1486.2,583.3 1487.8,583.4 1489.3,584.1 1490.9,581.0 1492.5,579.5 1494.0,576.3 1495.6,573.0 1497.1,573.2 1498.7,572.9 1500.3,573.7 1501.8,573.6 1503.4,571.4 1505.0,570.8 1506.5,570.1 1508.1,567.9 1509.7,570.1 1511.2,571.8 1512.8,583.8 1514.4,592.0 1515.9,596.3 1517.5,597.7 1519.1,600.3 1520.6,600.0 1522.2,599.8 1523.7,601.7 1525.3,604.8 1526.9,604.7 1528.4,601.3 1530.0,602.0 1531.6,592.1 1533.1,582.6 1534.7,581.9 1536.3,580.9 1537.8,582.0 1539.4,584.0 1541.0,585.5 1542.5,586.1 1544.1,587.8 1545.7,588.1 1547.2,587.5 1548.8,586.5 1550.3,588.1 1551.9,587.5 1553.5,586.4 1555.0,584.2 1556.6,583.3 1558.2,580.0 1559.7,579.9 1561.3,578.0 1562.9,577.4 1564.4,575.8 1566.0,574.6 1567.6,577.5 1569.1,579.0 1570.7,579.0 1572.2,580.6 1573.8,582.5 1575.4,581.1 1576.9,581.8 1578.5,582.8 1580.1,585.3 1581.6,585.7 1583.2,587.1 1584.8,585.2 1586.3,586.0 1587.9,586.2 1589.5,585.8 1591.0,586.8 1592.6,586.0 1594.2,587.0 1595.7,589.3 1597.3,589.0 1598.8,588.6 1600.4,586.6 1602.0,587.1 1603.5,588.0 1605.1,587.4 1606.7,586.8 1608.2,586.2 1609.8,587.6 1611.4,587.6 1612.9,585.5 1614.5,585.8 1616.1,586.1 1617.6,584.8 1619.2,584.8 1620.8,586.5 1622.3,588.3 1623.9,589.6 1625.4,589.1 1627.0,591.4 1628.6,593.2 1630.1,595.2 1631.7,595.0 1633.3,595.6 1634.8,594.9 1636.4,595.9 1638.0,595.6 1639.5,596.1 1641.1,593.6 1642.7,593.5 1644.2,593.9 1645.8,593.0 1647.3,591.4 1648.9,588.9 1650.5,590.8 1652.0,591.3 1653.6,591.0 1655.2,588.1 1656.7,588.9 1658.3,589.2 1659.9,587.8 1661.4,585.3 1663.0,586.2 1664.6,585.9 1666.1,583.2 1667.7,582.1 1669.3,581.1 1670.8,583.4 1672.4,582.4 1673.9,583.0 1675.5,585.1 1677.1,584.8 1678.6,587.1 1680.2,584.8 1681.8,584.6 1683.3,583.8 1684.9,583.1 1686.5,583.8 1688.0,585.3 1689.6,583.3 1691.2,583.1 1692.7,582.2 1694.3,581.7 1695.9,581.4 1697.4,584.3 1699.0,582.4 1700.5,583.3 1702.1,583.4 1703.7,583.3 1705.2,586.0 1706.8,588.4 1708.4,588.1 1709.9,588.2 1711.5,587.4 1713.1,586.3 1714.6,587.8 1716.2,585.6 1717.8,586.4 1719.3,584.6 1720.9,584.1 1722.4,583.9 1724.0,583.2 1725.6,586.8 1727.1,591.1 1728.7,595.1 1730.3,594.7 1731.8,591.5 1733.4,588.6 1735.0,587.1 1736.5,587.1 1738.1,588.8 1739.7,587.2 1741.2,587.4 1742.8,586.5 1744.4,584.5 1745.9,577.6 1747.5,573.2 1749.0,570.6 1750.6,569.2 1752.2,568.3 1753.7,564.9 1755.3,565.8 1756.9,563.5 1758.4,559.9 1760.0,557.0 1761.6,556.5 1763.1,553.9 1764.7,551.1 1766.3,550.1 1767.8,549.1 1769.4,548.3 1771.0,551.8 1772.5,553.0 1774.1,554.9 1775.6,555.3 1777.2,561.9 1778.8,564.4 1780.3,566.4 1781.9,567.3 1783.5,569.8 1785.0,572.3 1786.6,578.5 1788.2,577.9 1789.7,577.6 1791.3,577.6 1792.9,577.1 1794.4,578.7 1796.0,580.7 1797.5,579.4 1799.1,580.0 1800.7,579.2 1802.2,578.2 1803.8,578.4 1805.4,577.5 1806.9,579.4 1808.5,582.4 1810.1,583.3 1811.6,583.6 1813.2,581.9"/>
<polyline fill="none" stroke="#ffa366" stroke-width="1.3" stroke-linejoin="round" points="567.8,591.7 568.1,591.3 568.5,591.6 568.9,590.6 569.2,590.0 569.6,589.5 570.0,589.6 570.3,588.7 570.7,587.9 571.0,587.1 571.4,587.2 571.8,585.9 572.1,586.2 572.5,585.4 572.8,584.0 573.2,584.7 573.6,584.6 573.9,583.4 574.3,583.7 574.6,583.6 575.0,583.1 575.4,582.1 575.7,584.1 576.1,583.7 576.5,583.6 576.8,583.6 577.2,583.3 577.5,583.1 577.9,582.1 578.3,582.6 578.6,581.9 579.0,581.3 579.3,581.9 579.7,581.4 580.1,580.0 580.4,580.4 580.8,581.2 581.1,580.9 581.5,581.3 581.9,580.4 582.2,579.5 582.6,580.4 583.0,580.1 583.3,578.8 583.7,579.5 584.0,579.1 584.4,579.8 584.8,579.8 585.1,579.4 585.5,576.8 585.8,578.0 586.2,578.4 586.6,578.4 586.9,578.0 587.3,577.0 587.6,577.0 588.0,575.2 588.4,576.1 588.7,575.2 589.1,575.8 589.5,575.6 589.8,577.3 590.2,576.6 590.5,576.2 590.9,576.1 591.3,577.8 591.6,575.4 592.0,575.7 592.3,575.7 592.7,575.6 593.1,575.5 593.4,574.8 593.8,576.1 594.1,576.2 594.5,575.1 594.9,574.8 595.2,575.1 595.6,575.4 595.9,575.8 596.3,575.2 596.7,573.8 597.0,575.5 597.4,573.7 597.8,573.7 598.1,575.0 598.5,574.3 598.8,576.2 599.2,577.2 599.6,577.2 599.9,576.4 600.3,576.2 600.6,576.5 601.0,576.1 601.4,578.2 601.7,576.6 602.1,577.9 602.4,577.8 602.8,577.7 603.2,578.4 603.5,579.0 603.9,579.0 604.3,578.3 604.6,577.7 605.0,577.7 605.3,579.2 605.7,579.7 606.1,580.1 606.4,579.3 606.8,581.2 607.1,579.4 607.5,580.3 607.9,581.1 608.2,580.7 608.6,580.2 608.9,580.7 609.3,580.6 609.7,581.4 610.0,581.1 610.4,581.2 610.8,582.4 611.1,581.9 611.5,582.8 611.8,583.3 612.2,584.3 612.6,584.4 612.9,583.9 613.3,585.2 613.6,584.6 614.0,584.7 614.4,589.1 614.7,586.7 615.1,586.1 615.4,585.4 615.8,586.0 616.2,585.8 616.5,587.2 616.9,580.4 617.3,586.3 617.6,585.5 618.0,586.9 618.3,585.9 618.7,586.3 619.1,586.0 619.4,587.0 619.8,587.4 620.1,586.1 620.5,590.7 620.9,588.1 621.2,588.2 621.6,588.8 621.9,588.0 622.3,587.6 622.7,588.3 623.0,588.9 623.4,587.5 623.8,586.9 624.1,586.6 624.5,586.2 624.8,587.0 625.2,591.2 625.6,587.2 625.9,587.2 626.3,581.9 626.6,586.1 627.0,584.3 627.4,584.9 627.7,585.5 628.1,584.7 628.4,583.6 628.8,584.0 629.2,585.1 629.5,584.4 629.9,583.3 630.3,584.1 630.6,584.4 631.0,583.3 631.3,583.3 631.7,584.1 632.1,583.8 632.4,583.9 632.8,583.2 633.1,583.0 633.5,582.1 633.9,582.1 634.2,583.6 634.6,582.6 634.9,581.9 635.3,581.9 635.7,581.4 636.0,582.3 636.4,582.9 636.7,581.6 637.1,582.6 637.5,583.7 637.8,581.7 638.2,582.3 638.6,582.1 638.9,582.8 639.3,583.0 639.6,582.9 640.0,582.3 640.4,581.5 640.7,583.1 641.1,581.4 641.4,582.2 641.8,582.4 642.2,581.1 642.5,581.2 642.9,582.3 643.2,580.1 643.6,581.3 644.0,580.9 644.3,580.8 644.7,579.8 645.1,580.8 645.4,580.0 645.8,581.1 646.1,580.0 646.5,581.0 646.9,581.1 647.2,579.3 647.6,579.9 647.9,580.2 648.3,578.7 648.7,579.5 649.0,580.8 649.4,579.9 649.7,581.1 650.1,579.7 650.5,579.1 650.8,580.3 651.2,580.7 651.6,580.2 651.9,580.1 652.3,580.9 652.6,579.9 653.0,581.6 653.4,580.8 653.7,580.5 654.1,580.3 654.4,579.7 654.8,580.7 655.2,579.6 655.5,579.8 655.9,580.2 656.2,580.9 656.6,580.9 657.0,579.7 657.3,580.3 657.7,579.6 658.1,578.5 658.4,578.1 658.8,577.5 659.1,578.8 659.5,579.9 659.9,578.5 660.2,578.6 660.6,577.9 660.9,578.5 661.3,577.7 661.7,577.7 662.0,577.8 662.4,577.9 662.7,578.0 663.1,578.1 663.5,578.1 663.8,577.4 664.2,578.3 664.6,576.7 664.9,577.7 665.3,577.0 665.6,577.6 666.0,577.9 666.4,576.0 666.7,577.3 667.1,578.6 667.4,578.5 667.8,578.1 668.2,575.8 668.5,576.7 668.9,576.4 669.2,578.0 669.6,577.4 670.0,576.8 670.3,575.7 670.7,577.4 671.0,576.9 671.4,577.0 671.8,578.2 672.1,577.7 672.5,577.8 672.9,579.6 673.2,577.6 673.6,577.0 673.9,577.7 674.3,578.7 674.7,576.5 675.0,576.8 675.4,576.3 675.7,575.7 676.1,577.3 676.5,576.6 676.8,577.3 677.2,577.4 677.5,577.4 677.9,577.4 678.3,576.3 678.6,576.9 679.0,577.3 679.4,577.5 679.7,577.1 680.1,578.0 680.4,578.0 680.8,577.5 681.2,577.7 681.5,577.4 681.9,577.6 682.2,575.3 682.6,575.1 683.0,575.7 683.3,576.4 683.7,574.5 684.0,575.5 684.4,576.2 684.8,576.0 685.1,575.9 685.5,574.8 685.9,575.7 686.2,574.0 686.6,576.1 686.9,575.3 687.3,576.6 687.7,574.3 688.0,575.5 688.4,575.6 688.7,574.7 689.1,574.0 689.5,576.0 689.8,575.9 690.2,576.9 690.5,575.7 690.9,575.5 691.3,575.6 691.6,575.9 692.0,575.7 692.4,575.9 692.7,574.7 693.1,573.3 693.4,576.1 693.8,575.3 694.2,575.3 694.5,574.3 694.9,575.4 695.2,574.9 695.6,575.6 696.0,574.2 696.3,574.2 696.7,574.5 697.0,574.1 697.4,574.5 697.8,576.0 698.1,574.3 698.5,574.1 698.9,574.4 699.2,573.4 699.6,572.8 699.9,574.9 700.3,575.3 700.7,573.1 701.0,572.5 701.4,574.4 701.7,575.5 702.1,575.3 702.5,575.1 702.8,576.1 703.2,574.9 703.5,575.7 703.9,575.9 704.3,573.9 704.6,574.8 705.0,574.4 705.4,573.4 705.7,572.7 706.1,573.5 706.4,573.3 706.8,574.0 707.2,571.4 707.5,571.5 707.9,573.3 708.2,572.6 708.6,571.5 709.0,571.3 709.3,569.6 709.7,569.5 710.0,571.4 710.4,571.5 710.8,572.8 711.1,571.5 711.5,571.0 711.8,568.0 712.2,569.7 712.6,572.7 712.9,572.1 713.3,570.9 713.7,571.9 714.0,571.8 714.4,571.1 714.7,570.0 715.1,570.1 715.5,570.9 715.8,569.1 716.2,570.0 716.5,570.1 716.9,571.1 717.3,570.6 717.6,568.6 718.0,570.5 718.3,569.3 718.7,567.8 719.1,568.4 719.4,567.8 719.8,569.2 720.2,566.6 720.5,565.8 720.9,566.5 721.2,569.1 721.6,569.0 722.0,566.4 722.3,564.6 722.7,565.7 723.0,564.8 723.4,566.8 723.8,567.0 724.1,566.7 724.5,566.1 724.8,568.3 725.2,565.9 725.6,564.7 725.9,567.7 726.3,570.6 726.7,567.8 727.0,568.8 727.4,571.4 727.7,568.7 728.1,568.8 728.5,569.8 728.8,567.4 729.2,569.1 729.5,570.9 729.9,570.9 730.3,572.5 730.6,573.0 731.0,572.2 731.3,573.2 731.7,573.8 732.1,572.1 732.4,572.6 732.8,573.2 733.2,573.8 733.5,574.0 733.9,573.1 734.2,574.3 734.6,572.9 735.0,575.2 735.3,575.3 735.7,576.5 736.0,576.0 736.4,575.0 736.8,573.7 737.1,575.4 737.5,575.4 737.8,575.7 738.2,576.2 738.6,576.9 738.9,575.8 739.3,577.0 739.7,575.6 740.0,575.1 740.4,575.5 740.7,575.8 741.1,576.3 741.5,573.1 741.8,575.1 742.2,572.8 742.5,572.8 742.9,573.7 743.3,574.7 743.6,572.8 744.0,571.3 744.3,573.4 744.7,573.3 745.1,571.7 745.4,571.7 745.8,569.8 746.1,571.7 746.5,571.1 746.9,572.6 747.2,569.4 747.6,571.2 748.0,573.3 748.3,571.6 748.7,570.9 749.0,568.1 749.4,569.6 749.8,569.5 750.1,568.6 750.5,566.7 750.8,567.7 751.2,566.5 751.6,566.4 751.9,567.1 752.3,566.6 752.6,566.2 753.0,567.0 753.4,564.2 753.7,566.3 754.1,563.4 754.5,562.4 754.8,563.5 755.2,564.9 755.5,564.7 755.9,563.7 756.3,563.1 756.6,563.5 757.0,562.8 757.3,564.7 757.7,564.3 758.1,566.6 758.4,564.4 758.8,564.5 759.1,565.3 759.5,563.5 759.9,563.4 760.2,568.0 760.6,565.7 761.0,566.9 761.3,563.9 761.7,560.8 762.0,563.8 762.4,563.9 762.8,564.4 763.1,563.7 763.5,563.0 763.8,561.8 764.2,564.3 764.6,561.6 764.9,563.9 765.3,562.9 765.6,561.1 766.0,561.0 766.4,563.1 766.7,563.3 767.1,562.9 767.5,562.1 767.8,559.9 768.2,562.5 768.5,560.7 768.9,559.3 769.3,558.3 769.6,557.5 770.0,555.0 770.3,555.1 770.7,554.1 771.1,553.6 771.4,550.8 771.8,555.5 772.1,551.2 772.5,551.9 772.9,552.2 773.2,553.3 773.6,555.1 774.0,552.9 774.3,552.5 774.7,550.0 775.0,552.5 775.4,542.3 775.8,548.2 776.1,549.1 776.5,550.3 776.8,550.9 777.2,551.8 777.6,551.0 777.9,543.3 778.3,549.5 778.6,551.8 779.0,550.5 779.4,551.2 779.7,549.4 780.1,545.6 780.5,546.6 780.8,548.7 781.2,551.9 781.5,552.6 781.9,553.4 782.3,549.3 782.6,550.7 783.0,549.7 783.3,550.7 783.7,549.8 784.1,547.1 784.4,550.1 784.8,550.5 785.1,551.6 785.5,549.0 785.9,551.9 786.2,553.4 786.6,554.6 786.9,555.4 787.3,545.9 787.7,548.2 788.0,553.2 788.4,551.9 788.8,552.9 789.1,555.9 789.5,555.7 789.8,555.8 790.2,556.7 790.6,552.9 790.9,558.1 791.3,556.4 791.6,556.0 792.0,557.6 792.4,557.1 792.7,556.0 793.1,557.0 793.4,557.1 793.8,556.9 794.2,561.2 794.5,557.6 794.9,555.3 795.3,556.8 795.6,557.7 796.0,561.8 796.3,561.7 796.7,563.0 797.1,563.4 797.4,561.7 797.8,563.9 798.1,564.1 798.5,566.8 798.9,565.8 799.2,565.7 799.6,567.1 799.9,568.1 800.3,565.7 800.7,569.1 801.0,570.6 801.4,571.2 801.8,569.6 802.1,576.8 802.5,570.3 802.8,572.5 803.2,573.4 803.6,572.5 803.9,574.6 804.3,573.4 804.6,573.4 805.0,575.1 805.4,575.3 805.7,574.9 806.1,573.7 806.4,575.6 806.8,573.9 807.2,574.6 807.5,575.0 807.9,574.1 808.3,573.9 808.6,574.4 809.0,575.1 809.3,574.4 809.7,571.4 810.1,569.6 810.4,570.0 810.8,569.2 811.1,570.5 811.5,570.1 811.9,569.2 812.2,570.2 812.6,570.2 812.9,568.5 813.3,568.1 813.7,568.6 814.0,567.2 814.4,567.8 814.8,566.5 815.1,567.5 815.5,568.4 815.8,568.3 816.2,568.8 816.6,569.8 816.9,569.9 817.3,568.8 817.6,568.9 818.0,568.7 818.4,572.5 818.7,572.8 819.1,573.3 819.4,573.4 819.8,574.5 820.2,575.3 820.5,574.9 820.9,575.7 821.2,577.7 821.6,576.1 822.0,576.0 822.3,577.4 822.7,576.9 823.1,578.1 823.4,577.1 823.8,578.0 824.1,578.9 824.5,578.5 824.9,578.4 825.2,577.4 825.6,576.8 825.9,576.5 826.3,576.7 826.7,579.5 827.0,576.7 827.4,577.4 827.7,575.4 828.1,573.6 828.5,573.6 828.8,574.0 829.2,573.7 829.6,573.4 829.9,573.5 830.3,573.3 830.6,573.4 831.0,571.1 831.4,571.5 831.7,570.5 832.1,571.3 832.4,571.2 832.8,571.3 833.2,570.5 833.5,569.7 833.9,570.0 834.2,571.0 834.6,571.4 835.0,568.6 835.3,569.8 835.7,570.1 836.1,568.0 836.4,567.6 836.8,567.7 837.1,568.6 837.5,565.4 837.9,566.3 838.2,566.2 838.6,566.8 838.9,568.3 839.3,568.5 839.7,566.1 840.0,565.0 840.4,565.1 840.7,566.0 841.1,566.4 841.5,564.7 841.8,565.4 842.2,562.0 842.6,560.0 842.9,556.6 843.3,557.8 843.6,560.1 844.0,561.0 844.4,564.9 844.7,561.7 845.1,559.1 845.4,555.8 845.8,554.5 846.2,553.5 846.5,553.1 846.9,551.6 847.2,549.0 847.6,551.9 848.0,551.3 848.3,552.2 848.7,546.3 849.1,544.1 849.4,543.7 849.8,547.2 850.1,545.4 850.5,545.1 850.9,544.0 851.2,543.8 851.6,541.9 851.9,542.7 852.3,540.0 852.7,539.9 853.0,540.7 853.4,540.7 853.7,541.8 854.1,534.5 854.5,541.5 854.8,541.2 855.2,542.8 855.6,545.8 855.9,542.1 856.3,545.1 856.6,542.8 857.0,542.8 857.4,547.3 857.7,547.6 858.1,547.1 858.4,547.8 858.8,549.0 859.2,545.9 859.5,547.0 859.9,546.4 860.2,548.1 860.6,547.5 861.0,548.6 861.3,547.0 861.7,544.7 862.0,544.5 862.4,544.9 862.8,545.9 863.1,543.1 863.5,541.2 863.9,541.3 864.2,542.0 864.6,538.8 864.9,532.8 865.3,536.4 865.7,535.7 866.0,534.9 866.4,541.0 866.7,536.3 867.1,536.1 867.5,530.5 867.8,532.0 868.2,533.3 868.5,526.3 868.9,531.0 869.3,532.3 869.6,531.3 870.0,534.1 870.4,533.1 870.7,531.0 871.1,528.2 871.4,530.9 871.8,533.6 872.2,533.2 872.5,534.1 872.9,533.7 873.2,535.9 873.6,540.2 874.0,541.7 874.3,543.2 874.7,544.4 875.0,545.9 875.4,549.2 875.8,553.6 876.1,553.3 876.5,556.4 876.9,554.6 877.2,555.0 877.6,558.7 877.9,557.0 878.3,557.1 878.7,558.9 879.0,557.6 879.4,557.4 879.7,562.2 880.1,561.2 880.5,562.2 880.8,563.1 881.2,563.2 881.5,565.9 881.9,567.1 882.3,573.2 882.6,568.4 883.0,567.7 883.4,559.2 883.7,569.2 884.1,567.2 884.4,567.4 884.8,566.9 885.2,569.5 885.5,569.1 885.9,568.8 886.2,567.7 886.6,567.9 887.0,565.8 887.3,566.1 887.7,565.9 888.0,565.7 888.4,564.5 888.8,565.4 889.1,563.4 889.5,563.3 889.9,563.5 890.2,563.5 890.6,562.7 890.9,562.0 891.3,562.2 891.7,563.4 892.0,563.4 892.4,564.7 892.7,564.0 893.1,565.7 893.5,569.2 893.8,566.4 894.2,567.2 894.5,569.3 894.9,568.9 895.3,569.6 895.6,566.4 896.0,567.3 896.3,570.2 896.7,568.8 897.1,569.5 897.4,567.1 897.8,569.9 898.2,572.3 898.5,570.6 898.9,570.5 899.2,570.7 899.6,572.8 900.0,570.7 900.3,568.5 900.7,571.6 901.0,569.1 901.4,570.2 901.8,567.1 902.1,568.1 902.5,569.1 902.8,567.8 903.2,567.9 903.6,569.2 903.9,568.0 904.3,569.0 904.7,570.7 905.0,566.7 905.4,568.0 905.7,568.7 906.1,568.0 906.5,570.1 906.8,570.7 907.2,570.0 907.5,569.8 907.9,569.2 908.3,567.8 908.6,569.3 909.0,568.8 909.3,568.6 909.7,570.6 910.1,569.9 910.4,571.0 910.8,569.3 911.2,569.4 911.5,570.1 911.9,571.9 912.2,571.0 912.6,571.8 913.0,570.5 913.3,571.1 913.7,572.0 914.0,570.4 914.4,570.0 914.8,571.4 915.1,569.9 915.5,571.0 915.8,571.4 916.2,571.1 916.6,571.9 916.9,571.9 917.3,571.5 917.7,569.6 918.0,568.9 918.4,570.6 918.7,569.1 919.1,570.3 919.5,570.0 919.8,569.2 920.2,569.4 920.5,566.8 920.9,568.3 921.3,570.3 921.6,567.9 922.0,568.9 922.3,568.9 922.7,572.0 923.1,568.1 923.4,566.8 923.8,566.2 924.2,565.6 924.5,564.3 924.9,565.7 925.2,564.8 925.6,566.4 926.0,566.3 926.3,564.2 926.7,564.1 927.0,566.1 927.4,564.4 927.8,564.3 928.1,564.9 928.5,563.2 928.8,563.5 929.2,565.1 929.6,564.8 929.9,560.4 930.3,563.4 930.7,561.9 931.0,560.8 931.4,560.3 931.7,562.7 932.1,562.2 932.5,561.3 932.8,560.0 933.2,561.5 933.5,562.8 933.9,560.0 934.3,558.8 934.6,559.4 935.0,561.0 935.3,560.0 935.7,560.0 936.1,558.7 936.4,561.3 936.8,559.9 937.1,559.8 937.5,561.0 937.9,559.2 938.2,558.8 938.6,559.1 939.0,557.9 939.3,560.1 939.7,558.6 940.0,557.2 940.4,556.7 940.8,555.2 941.1,558.1 941.5,559.5 941.8,556.9 942.2,555.5 942.6,552.1 942.9,553.1 943.3,555.8 943.6,553.7 944.0,555.6 944.4,557.1 944.7,550.5 945.1,551.9 945.5,551.5 945.8,551.4 946.2,549.0 946.5,550.6 946.9,549.4 947.3,552.5 947.6,553.8 948.0,548.8 948.3,546.5 948.7,547.0 949.1,547.3 949.4,547.1 949.8,548.3 950.1,543.9 950.5,543.7 950.9,543.5 951.2,543.3 951.6,541.4 952.0,541.8 952.3,541.5 952.7,545.4 953.0,543.2 953.4,539.0 953.8,543.1 954.1,543.7 954.5,541.8 954.8,540.9 955.2,541.3 955.6,546.1 955.9,543.3 956.3,545.8 956.6,546.0 957.0,543.1 957.4,543.9 957.7,541.8 958.1,536.2 958.5,539.1 958.8,540.0 959.2,543.6 959.5,544.1 959.9,545.1 960.3,544.2 960.6,544.9 961.0,544.1 961.3,542.7 961.7,543.7 962.1,544.9 962.4,545.0 962.8,541.0 963.1,540.2 963.5,537.7 963.9,536.6 964.2,538.6 964.6,536.4 965.0,539.8 965.3,531.8 965.7,530.8 966.0,532.7 966.4,537.1 966.8,532.3 967.1,538.6 967.5,536.1 967.8,528.6 968.2,515.0 968.6,529.6 968.9,523.6 969.3,529.1 969.6,525.1 970.0,527.1 970.4,529.1 970.7,524.2 971.1,528.5 971.4,517.5 971.8,524.2 972.2,515.4 972.5,525.4 972.9,521.4 973.3,527.7 973.6,528.4 974.0,519.9 974.3,512.3 974.7,517.4 975.1,504.8 975.4,509.4 975.8,505.0 976.1,500.9 976.5,493.3 976.9,511.6 977.2,504.3 977.6,512.2 977.9,523.9 978.3,533.6 978.7,541.0 979.0,544.4 979.4,541.6 979.8,546.1 980.1,550.3 980.5,549.8 980.8,543.8 981.2,547.5 981.6,549.7 981.9,545.3 982.3,546.5 982.6,546.9 983.0,548.1 983.4,550.6 983.7,549.6 984.1,546.4 984.4,543.7 984.8,539.3 985.2,535.2 985.5,533.2 985.9,530.9 986.3,533.3 986.6,537.4 987.0,530.4 987.3,527.5 987.7,523.0 988.1,517.4 988.4,518.2 988.8,515.9 989.1,508.1 989.5,502.3 989.9,484.6 990.2,494.4 990.6,499.4 990.9,507.5 991.3,492.3 991.7,497.6 992.0,510.1 992.4,505.9 992.8,504.6 993.1,504.8 993.5,517.1 993.8,509.2 994.2,514.5 994.6,516.7 994.9,516.5 995.3,511.5 995.6,511.5 996.0,511.7 996.4,503.1 996.7,508.7 997.1,511.1 997.4,500.5 997.8,495.6 998.2,490.4 998.5,501.7 998.9,493.0 999.3,493.4 999.6,485.9 1000.0,482.0 1000.3,497.4 1000.7,499.8 1001.1,509.8 1001.4,509.5 1001.8,500.5 1002.1,507.4 1002.5,512.3 1002.9,506.6 1003.2,505.1 1003.6,505.7 1003.9,515.6 1004.3,516.4 1004.7,512.6 1005.0,520.4 1005.4,524.9 1005.8,520.8 1006.1,517.8 1006.5,529.4 1006.8,540.3 1007.2,540.2 1007.6,537.6 1007.9,532.9 1008.3,528.0 1008.6,529.0 1009.0,531.2 1009.4,527.1 1009.7,529.2 1010.1,525.0 1010.4,525.1 1010.8,509.0 1011.2,512.0 1011.5,520.7 1011.9,524.4 1012.2,523.1 1012.6,528.2 1013.0,525.7 1013.3,524.9 1013.7,517.1 1014.1,520.4 1014.4,523.2 1014.8,526.9 1015.1,527.9 1015.5,523.7 1015.9,523.3 1016.2,517.6 1016.6,523.8 1016.9,519.1 1017.3,521.3 1017.7,523.6 1018.0,533.3 1018.4,534.0 1018.7,527.6 1019.1,524.3 1019.5,529.3 1019.8,530.3 1020.2,536.3 1020.6,539.5 1020.9,541.9 1021.3,537.7 1021.6,538.8 1022.0,541.6 1022.4,543.4 1022.7,541.7 1023.1,542.3 1023.4,546.5 1023.8,540.7 1024.2,543.5 1024.5,545.6 1024.9,542.5 1025.2,543.3 1025.6,547.1 1026.0,547.0 1026.3,551.5 1026.7,551.9 1027.1,556.7 1027.4,548.9 1027.8,554.8 1028.1,550.1 1028.5,551.3 1028.9,552.0 1029.2,551.5 1029.6,550.9 1029.9,550.2 1030.3,548.6 1030.7,549.6 1031.0,549.3 1031.4,550.9 1031.7,549.9 1032.1,550.1 1032.5,550.9 1032.8,550.7 1033.2,550.5 1033.6,550.1 1033.9,549.7 1034.3,550.6 1034.6,551.1 1035.0,549.5 1035.4,551.7 1035.7,550.9 1036.1,547.9 1036.4,551.6 1036.8,550.3 1037.2,548.0 1037.5,549.8 1037.9,545.0 1038.2,549.4 1038.6,545.8 1039.0,544.2 1039.3,544.5 1039.7,546.0 1040.1,545.9 1040.4,547.4 1040.8,545.9 1041.1,547.7 1041.5,547.3 1041.9,545.7 1042.2,547.7 1042.6,547.5 1042.9,546.8 1043.3,548.4 1043.7,546.0 1044.0,546.1 1044.4,548.5 1044.7,547.5 1045.1,547.9 1045.5,547.7 1045.8,546.7 1046.2,547.2 1046.5,545.2 1046.9,546.4 1047.3,544.7 1047.6,545.2 1048.0,544.2 1048.4,545.5 1048.7,545.8 1049.1,546.6 1049.4,544.6 1049.8,543.3 1050.2,541.2 1050.5,541.3 1050.9,542.5 1051.2,543.2 1051.6,542.5 1052.0,542.5 1052.3,540.3 1052.7,540.0 1053.0,542.0 1053.4,542.3 1053.8,539.4 1054.1,539.6 1054.5,540.2 1054.9,538.2 1055.2,539.4 1055.6,539.4 1055.9,539.4 1056.3,541.3 1056.7,537.7 1057.0,539.1 1057.4,538.5 1057.7,538.2 1058.1,535.8 1058.5,535.8 1058.8,535.7 1059.2,538.8 1059.5,538.1 1059.9,540.3 1060.3,539.0 1060.6,539.0 1061.0,540.0 1061.4,538.0 1061.7,540.1 1062.1,541.7 1062.4,543.8 1062.8,545.7 1063.2,545.9 1063.5,546.6 1063.9,550.6 1064.2,550.1 1064.6,550.6 1065.0,550.1 1065.3,550.5 1065.7,552.6 1066.0,553.2 1066.4,550.1 1066.8,550.7 1067.1,552.9 1067.5,551.6 1067.9,552.0 1068.2,553.8 1068.6,554.9 1068.9,554.5 1069.3,552.4 1069.7,552.3 1070.0,552.6 1070.4,552.3 1070.7,552.1 1071.1,555.1 1071.5,554.4 1071.8,554.9 1072.2,555.7 1072.5,555.4 1072.9,555.0 1073.3,555.2 1073.6,556.7 1074.0,556.2 1074.4,553.3 1074.7,555.5 1075.1,556.9 1075.4,555.3 1075.8,554.3 1076.2,554.1 1076.5,555.6 1076.9,553.9 1077.2,555.1 1077.6,555.9 1078.0,555.6 1078.3,554.9 1078.7,553.7 1079.0,553.3 1079.4,553.8 1079.8,552.9 1080.1,553.4 1080.5,552.7 1080.9,554.8 1081.2,555.7 1081.6,553.4 1081.9,554.9 1082.3,554.2 1082.7,553.6 1083.0,553.8 1083.4,553.9 1083.7,526.3 1084.1,529.4 1084.5,553.8 1084.8,551.6 1085.2,553.5 1085.5,554.3 1085.9,554.0 1086.3,552.9 1086.6,555.8 1087.0,555.7 1087.3,556.0 1087.7,555.6 1088.1,556.0 1088.4,555.9 1088.8,557.2 1089.2,557.4 1089.5,558.4 1089.9,559.0 1090.2,558.9 1090.6,559.1 1091.0,560.4 1091.3,558.4 1091.7,559.6 1092.0,561.3 1092.4,559.8 1092.8,561.1 1093.1,560.6 1093.5,561.1 1093.8,561.2 1094.2,561.5 1094.6,562.5 1094.9,562.4 1095.3,560.8 1095.7,564.3 1096.0,563.6 1096.4,563.1 1096.7,564.3 1097.1,565.1 1097.5,562.2 1097.8,563.5 1098.2,561.9 1098.5,562.7 1098.9,563.5 1099.3,563.4 1099.6,563.3 1100.0,562.9 1100.3,563.4 1100.7,563.9 1101.1,564.1 1101.4,563.1 1101.8,563.2 1102.2,564.8 1102.5,521.7 1102.9,524.2 1103.2,564.7 1103.6,564.7 1104.0,565.2 1104.3,564.7 1104.7,563.9 1105.0,563.1 1105.4,563.7 1105.8,562.0 1106.1,563.3 1106.5,560.9 1106.8,561.7 1107.2,562.3 1107.6,563.2 1107.9,565.4 1108.3,563.6 1108.7,562.4 1109.0,560.2 1109.4,562.3 1109.7,559.8 1110.1,560.7 1110.5,560.0 1110.8,562.8 1111.2,561.2 1111.5,561.0 1111.9,559.9 1112.3,560.0 1112.6,561.2 1113.0,559.5 1113.3,559.1 1113.7,559.0 1114.1,558.5 1114.4,558.2 1114.8,559.1 1115.2,560.6 1115.5,561.1 1115.9,558.6 1116.2,558.2 1116.6,558.4 1117.0,558.9 1117.3,558.4 1117.7,558.1 1118.0,558.2 1118.4,558.8 1118.8,556.9 1119.1,558.6 1119.5,560.5 1119.8,562.1 1120.2,562.0 1120.6,560.6 1120.9,560.1 1121.3,559.2 1121.6,560.9 1122.0,561.3 1122.4,562.2 1122.7,560.2 1123.1,560.5 1123.5,558.6 1123.8,561.0 1124.2,561.3 1124.5,560.4 1124.9,561.2 1125.3,562.6 1125.6,562.5 1126.0,561.2 1126.3,560.3 1126.7,560.3 1127.1,559.0 1127.4,558.3 1127.8,558.6 1128.1,558.8 1128.5,558.9 1128.9,558.0 1129.2,557.1 1129.6,557.4 1130.0,557.0 1130.3,557.4 1130.7,558.5 1131.0,558.2 1131.4,556.2 1131.8,555.7 1132.1,554.1 1132.5,555.0 1132.8,554.4 1133.2,553.5 1133.6,553.4 1133.9,554.9 1134.3,554.8 1134.6,554.3 1135.0,555.2 1135.4,553.8 1135.7,549.5 1136.1,553.6 1136.5,551.1 1136.8,552.5 1137.2,552.6 1137.5,552.4 1137.9,552.6 1138.3,551.2 1138.6,550.9 1139.0,548.6 1139.3,548.7 1139.7,548.6 1140.1,549.2 1140.4,550.6 1140.8,549.3 1141.1,549.6 1141.5,547.3 1141.9,547.5 1142.2,545.3 1142.6,545.4 1143.0,545.1 1143.3,545.6 1143.7,545.5 1144.0,544.8 1144.4,544.0 1144.8,545.5 1145.1,544.3 1145.5,541.5 1145.8,544.1 1146.2,545.4 1146.6,546.5 1146.9,547.9 1147.3,545.3 1147.6,545.9 1148.0,545.9 1148.4,544.2 1148.7,542.9 1149.1,546.7 1149.5,545.8 1149.8,546.2 1150.2,546.7 1150.5,546.9 1150.9,547.7 1151.3,546.2 1151.6,547.0 1152.0,547.7 1152.3,547.0 1152.7,547.3 1153.1,548.1 1153.4,548.6 1153.8,547.2 1154.1,548.4 1154.5,549.6 1154.9,551.0 1155.2,551.1 1155.6,552.0 1156.0,551.2 1156.3,550.9 1156.7,553.5 1157.0,552.2 1157.4,551.2 1157.8,551.6 1158.1,553.1 1158.5,551.3 1158.8,553.0 1159.2,554.3 1159.6,554.5 1159.9,553.4 1160.3,552.0 1160.6,551.3 1161.0,552.1 1161.4,553.9 1161.7,554.0 1162.1,554.3 1162.4,553.6 1162.8,555.1 1163.2,553.6 1163.5,552.4 1163.9,552.9 1164.3,552.4 1164.6,553.8 1165.0,554.9 1165.3,554.3 1165.7,552.2 1166.1,551.6 1166.4,553.0 1166.8,551.7 1167.1,552.9 1167.5,551.3 1167.9,551.9 1168.2,553.2 1168.6,552.2 1168.9,553.7 1169.3,554.4 1169.7,555.3 1170.0,553.8 1170.4,553.6 1170.8,553.6 1171.1,554.0 1171.5,552.2 1171.8,553.6 1172.2,554.5 1172.6,552.7 1172.9,551.9 1173.3,552.9 1173.6,555.5 1174.0,555.2 1174.4,554.0 1174.7,554.6 1175.1,553.5 1175.4,556.5 1175.8,555.7 1176.2,557.1 1176.5,555.9 1176.9,557.2 1177.3,556.9 1177.6,545.9 1178.0,560.5 1178.3,561.2 1178.7,561.3 1179.1,562.0 1179.4,560.5 1179.8,560.2 1180.1,561.3 1180.5,563.0 1180.9,563.0 1181.2,563.7 1181.6,556.2 1181.9,562.9 1182.3,563.2 1182.7,564.3 1183.0,566.2 1183.4,566.0 1183.8,566.4 1184.1,565.2 1184.5,565.1 1184.8,565.9 1185.2,565.9 1185.6,564.3 1185.9,566.0 1186.3,566.6 1186.6,566.3 1187.0,566.6 1187.4,566.6 1187.7,565.8 1188.1,564.6 1188.4,567.2 1188.8,566.7 1189.2,566.5 1189.5,566.8 1189.9,567.2 1190.3,567.7 1190.6,567.0 1191.0,568.1 1191.3,568.4 1191.7,568.7 1192.1,568.9 1192.4,569.4 1192.8,568.8 1193.1,569.6 1193.5,570.0 1193.9,570.5 1194.2,571.7 1194.6,572.4 1194.9,573.1 1195.3,572.8 1195.7,573.7 1196.0,574.6 1196.4,574.3 1196.7,574.4 1197.1,575.4 1197.5,574.3 1197.8,574.6 1198.2,574.8 1198.6,574.4 1198.9,574.7 1199.3,575.1 1199.6,574.1 1200.0,575.1 1200.4,575.1 1200.7,574.8 1201.1,575.4 1201.4,575.3 1201.8,575.1 1202.2,574.2 1202.5,575.3 1202.9,575.6 1203.2,575.6 1203.6,576.0 1204.0,576.8 1204.3,576.7 1204.7,576.9 1205.1,577.1 1205.4,577.1 1205.8,577.3 1206.1,577.8 1206.5,578.2 1206.9,578.9 1207.2,579.0 1207.6,578.9 1207.9,579.1 1208.3,579.0 1208.7,579.3 1209.0,578.7 1209.4,578.3 1209.7,579.1 1210.1,579.1 1210.5,579.4 1210.8,579.0 1211.2,579.2 1211.6,579.4 1211.9,579.6 1212.3,579.6 1212.6,580.0 1213.0,579.6 1213.4,580.0 1213.7,579.7 1214.1,579.8 1214.4,579.5 1214.8,579.7 1215.2,579.5 1215.5,580.0 1215.9,579.7 1216.2,579.9 1216.6,579.8 1217.0,579.8 1217.3,579.5 1217.7,580.4 1218.1,579.9 1218.4,580.3 1218.8,579.6 1219.1,580.4 1219.5,580.3 1219.9,580.5 1220.2,579.6 1220.6,580.2 1220.9,579.9 1221.3,580.0 1221.7,580.5 1222.0,580.2 1222.4,579.8 1222.7,579.9 1223.1,579.6 1223.5,579.9 1223.8,579.9 1224.2,580.0 1224.6,579.8 1224.9,579.2 1225.3,579.5 1225.6,579.7 1226.0,580.0 1226.4,580.1 1226.7,579.4 1227.1,580.0 1227.4,580.1 1227.8,579.9 1228.2,580.0 1228.5,579.2 1228.9,580.3 1229.2,579.8 1229.6,579.5 1230.0,580.0 1230.3,580.0 1230.7,579.7 1231.1,579.2 1231.4,579.8 1231.8,580.2 1232.1,579.6 1232.5,579.1 1232.9,579.6 1233.2,580.3 1233.6,579.4 1233.9,577.3 1234.3,579.3 1234.7,579.5 1235.0,579.7 1235.4,579.7 1235.7,578.9 1236.1,578.5 1236.5,579.3 1236.8,579.1 1237.2,578.0 1237.5,578.2 1237.9,578.4 1238.3,577.9 1238.6,577.6 1239.0,577.4 1239.4,577.3 1239.7,577.1 1240.1,576.9 1240.4,576.2 1240.8,576.2 1241.2,575.8 1241.5,575.4 1241.9,574.4 1242.2,574.2 1242.6,574.1 1243.0,573.6 1243.3,573.2 1243.7,572.6 1244.0,572.5 1244.4,571.7 1244.8,571.5 1245.1,571.9 1245.5,572.1 1245.9,571.4 1246.2,571.2 1246.6,571.3 1246.9,571.8 1247.3,572.1 1247.7,570.8 1248.0,569.9 1248.4,569.4 1248.7,570.0 1249.1,568.8 1249.5,568.9 1249.8,568.2 1250.2,567.7 1250.5,568.0 1250.9,567.7 1251.3,568.3 1251.6,567.7 1252.0,567.8 1252.4,566.4 1252.7,562.9 1253.1,565.2 1253.4,565.0 1253.8,565.4 1254.2,564.8 1254.5,564.9 1254.9,564.1 1255.2,564.1 1255.6,564.9 1256.0,564.6 1256.3,564.4 1256.7,564.6 1257.0,563.9 1257.4,563.2 1257.8,564.2 1258.1,564.5 1258.5,565.8 1258.9,565.0 1259.2,564.9 1259.6,565.9 1259.9,564.7 1260.3,564.2 1260.7,564.8 1261.0,564.8 1261.4,565.1 1261.7,564.2 1262.1,565.3 1262.5,564.9 1262.8,563.6 1263.2,564.4 1263.5,564.6 1263.9,565.1 1264.3,566.1 1264.6,565.7 1265.0,565.4 1265.4,566.1 1265.7,565.6 1266.1,565.0 1266.4,564.9 1266.8,566.4 1267.2,566.7 1267.5,567.2 1267.9,565.8 1268.2,565.6 1268.6,565.5 1269.0,566.5 1269.3,567.0 1269.7,566.5 1270.0,566.3 1270.4,566.9 1270.8,566.5 1271.1,566.2 1271.5,566.5 1271.8,564.9 1272.2,568.5 1272.6,568.0 1272.9,567.7 1273.3,568.0 1273.7,568.3 1274.0,568.5 1274.4,567.8 1274.7,568.0 1275.1,567.9 1275.5,568.5 1275.8,568.5 1276.2,568.1 1276.5,568.6 1276.9,568.9 1277.3,568.5 1277.6,567.5 1278.0,567.7 1278.3,567.1 1278.7,567.8 1279.1,568.1 1279.4,568.8 1279.8,568.6 1280.2,567.4 1280.5,567.6 1280.9,567.5 1281.2,567.4 1281.6,567.8 1282.0,568.0 1282.3,568.0 1282.7,567.6 1283.0,567.6 1283.4,567.6 1283.8,567.8 1284.1,568.3 1284.5,568.3 1284.8,568.6 1285.2,567.7 1285.6,569.0 1285.9,568.5 1286.3,566.9 1286.7,567.8 1287.0,568.6 1287.4,568.2 1287.7,567.4 1288.1,567.9 1288.5,567.6 1288.8,567.8 1289.2,568.1 1289.5,566.3 1289.9,567.4 1290.3,561.8 1290.6,568.3 1291.0,567.9 1291.3,567.7 1291.7,567.5 1292.1,567.7 1292.4,568.7 1292.8,568.0 1293.2,568.2 1293.5,568.2 1293.9,568.9 1294.2,568.6 1294.6,568.5 1295.0,567.9 1295.3,568.4 1295.7,567.6 1296.0,567.1 1296.4,567.6 1296.8,567.6 1297.1,567.7 1297.5,566.7 1297.8,568.3 1298.2,567.6 1298.6,568.1 1298.9,567.6 1299.3,566.7 1299.7,567.2 1300.0,567.0 1300.4,567.5 1300.7,566.0 1301.1,566.1 1301.5,566.0 1301.8,567.4 1302.2,567.7 1302.5,566.6 1302.9,567.0 1303.3,567.1 1303.6,566.8 1304.0,567.6 1304.3,566.8 1304.7,566.9 1305.1,566.7 1305.4,567.2 1305.8,566.8 1306.2,567.3 1306.5,566.6 1306.9,566.2 1307.2,566.2 1307.6,566.4 1308.0,566.4 1308.3,568.3 1308.7,567.0 1309.0,567.1 1309.4,567.0 1309.8,567.1 1310.1,567.8 1310.5,567.6 1310.8,566.8 1311.2,566.1 1311.6,567.0 1311.9,567.5 1312.3,566.3 1312.6,567.3 1313.0,565.9 1313.4,566.6 1313.7,567.3 1314.1,566.5 1314.5,565.9 1314.8,567.4 1315.2,566.2 1315.5,566.9 1315.9,566.1 1316.3,566.9 1316.6,567.8 1317.0,567.0 1317.3,566.5 1317.7,565.6 1318.1,565.5 1318.4,566.1 1318.8,566.8 1319.1,567.2 1319.5,567.2 1319.9,567.5 1320.2,567.3 1320.6,568.5 1321.0,567.4 1321.3,567.1 1321.7,565.6 1322.0,566.1 1322.4,566.9 1322.8,566.8 1323.1,568.0 1323.5,568.3 1323.8,569.2 1324.2,568.0 1324.6,568.2 1324.9,569.5 1325.3,569.7 1325.6,569.4 1326.0,569.9 1326.4,570.3 1326.7,570.9 1327.1,571.0 1327.5,574.7 1327.8,570.2 1328.2,570.8 1328.5,571.2 1328.9,570.2 1329.3,570.9 1329.6,570.2 1330.0,570.3 1330.3,570.1 1330.7,569.5 1331.1,569.9 1331.4,569.9 1331.8,570.8 1332.1,571.0 1332.5,570.4 1332.9,569.8 1333.2,569.6 1333.6,569.1 1334.0,569.9 1334.3,570.2 1334.7,570.0 1335.0,570.4 1335.4,570.5 1335.8,571.1 1336.1,570.3 1336.5,571.0 1336.8,570.4 1337.2,571.0 1337.6,569.9 1337.9,570.5 1338.3,569.7 1338.6,570.5 1339.0,570.2 1339.4,569.1 1339.7,569.7 1340.1,569.4 1340.5,569.5 1340.8,570.4 1341.2,569.2 1341.5,568.7 1341.9,569.2 1342.3,568.4 1342.6,568.8 1343.0,568.9 1343.3,568.4 1343.7,568.4 1344.1,566.8 1344.4,568.2 1344.8,567.4 1345.1,566.8 1345.5,568.2 1345.9,568.4 1346.2,567.1 1346.6,574.8 1346.9,566.6 1347.3,565.9 1347.7,566.4 1348.0,566.9 1348.4,567.9 1348.8,566.5 1349.1,566.5 1349.5,565.7 1349.8,565.3 1350.2,566.0 1350.6,564.2 1350.9,563.9 1351.3,563.7 1351.6,564.8 1352.0,564.5 1352.4,564.2 1352.7,563.8 1353.1,564.0 1353.4,562.8 1353.8,562.3 1354.2,561.8 1354.5,562.1 1354.9,561.0 1355.3,561.4 1355.6,563.5 1356.0,562.8 1356.3,562.2 1356.7,561.3 1357.1,561.8 1357.4,562.0 1357.8,562.3 1358.1,561.6 1358.5,562.0 1358.9,562.3 1359.2,562.5 1359.6,561.7 1359.9,562.1 1360.3,563.1 1360.7,561.8 1361.0,562.3 1361.4,561.8 1361.8,561.5 1362.1,560.9 1362.5,560.8 1362.8,561.9 1363.2,561.9 1363.6,562.7 1363.9,561.0 1364.3,561.2 1364.6,560.7 1365.0,561.6 1365.4,563.2 1365.7,562.0 1366.1,563.2 1366.4,563.9 1366.8,564.6 1367.2,565.0 1367.5,565.4 1367.9,566.1 1368.3,566.4 1368.6,566.9 1369.0,567.4 1369.3,567.7 1369.7,568.1 1370.1,568.8 1370.4,569.5 1370.8,569.8 1371.1,570.2 1371.5,570.8 1371.9,571.5 1372.2,572.1 1372.6,572.8 1372.9,573.2 1373.3,573.7 1373.7,574.0 1374.0,574.4 1374.4,574.7 1374.8,575.0 1375.1,575.4 1375.5,575.7 1375.8,575.9 1376.2,576.3 1376.6,576.6 1376.9,577.0 1377.3,577.4 1377.6,577.8 1378.0,578.1 1378.4,578.3 1378.7,587.1 1379.1,579.1 1379.4,579.8 1379.8,580.6 1380.2,581.3 1380.5,582.0 1380.9,582.6 1381.3,583.1 1381.6,583.6 1382.0,584.1 1382.3,584.7 1382.7,585.1 1383.1,585.5 1383.4,585.9 1383.8,586.1 1384.1,586.3 1384.5,586.3 1384.9,586.2 1385.2,586.2 1385.6,586.3 1385.9,586.2 1386.3,586.3 1386.7,586.3 1387.0,586.3 1387.4,586.3 1387.7,586.3 1388.1,586.3 1388.5,586.3 1388.8,586.3 1389.2,586.3 1389.6,586.3 1389.9,586.2 1390.3,586.2 1390.6,586.2 1391.0,586.3 1391.4,586.3 1391.7,586.3 1392.1,586.3 1392.4,586.3 1392.8,586.2 1393.2,586.3 1393.5,586.3 1393.9,586.3 1394.2,586.2 1394.6,586.3 1395.0,586.2 1395.3,586.3 1395.7,586.3 1396.1,586.3 1396.4,586.3 1396.8,586.2 1397.1,586.3 1397.5,586.2 1397.9,586.3 1398.2,586.3 1398.6,586.3 1398.9,586.3 1399.3,586.3 1399.7,586.3 1400.0,586.3 1400.4,587.2 1400.7,588.0 1401.1,588.8 1401.5,588.9 1401.8,588.9 1402.2,588.9 1402.6,588.9 1402.9,588.9 1403.3,588.9 1403.6,588.8 1404.0,588.9 1404.4,588.9 1404.7,588.8 1405.1,588.9 1405.4,588.9 1405.8,588.9 1406.2,588.9 1406.5,588.9 1406.9,588.8 1407.2,588.9 1407.6,588.8 1408.0,588.9 1408.3,588.8 1408.7,588.8 1409.1,588.9 1409.4,588.9 1409.8,588.9 1410.1,588.9 1410.5,588.8 1410.9,588.9 1411.2,588.8 1411.6,588.9 1411.9,588.9 1412.3,589.2 1412.7,589.6 1413.0,590.1 1413.4,590.1 1413.7,590.2 1414.1,590.1 1414.5,590.2 1414.8,590.2 1415.2,590.1 1415.6,590.1 1415.9,590.1 1416.3,590.1 1416.6,590.2 1417.0,590.2 1417.4,590.1 1417.7,590.1 1418.1,590.1 1418.4,590.2 1418.8,590.1 1419.2,590.1 1419.5,590.1 1419.9,590.1 1420.2,590.1 1420.6,590.2 1421.0,590.2 1421.3,590.1 1421.7,590.2 1422.0,590.2 1422.4,590.2 1422.8,590.1 1423.1,590.2 1423.5,590.2 1423.9,590.2 1424.2,590.1 1424.6,590.1 1424.9,590.1 1425.3,590.2 1425.7,590.1 1426.0,590.1 1426.4,590.1 1426.7,590.2 1427.1,590.2 1427.5,590.1 1427.8,590.2 1428.2,590.1 1428.5,590.1 1428.9,590.1 1429.3,590.1 1429.6,590.1 1430.0,590.2 1430.4,590.2 1430.7,590.1 1431.1,590.1 1431.4,589.8 1431.8,589.5 1432.2,589.1 1432.5,588.8 1432.9,588.5 1433.2,588.2 1433.6,587.9 1434.0,587.7 1434.3,587.5 1434.7,587.3 1435.0,587.2 1435.4,586.9 1435.8,586.8 1436.1,586.5 1436.5,586.3 1436.9,586.1 1437.2,586.0 1437.6,585.7 1437.9,585.5 1438.3,585.3 1438.7,585.0 1439.0,584.8 1439.4,584.6 1439.7,584.3 1440.1,584.1 1440.5,583.9 1440.8,583.7 1441.2,583.5 1441.5,583.4 1441.9,583.2 1442.3,583.1 1442.6,582.9 1443.0,582.7 1443.4,582.5 1443.7,582.4 1444.1,582.3 1444.4,582.0 1444.8,581.8 1445.2,581.6 1445.5,581.3 1445.9,581.1 1446.2,580.9 1446.6,580.8 1447.0,580.7 1447.3,580.5 1447.7,580.3 1448.0,580.0 1448.4,579.8 1448.8,579.6 1449.1,579.4 1449.5,579.2 1449.9,579.0 1450.2,578.8 1450.6,578.6 1450.9,578.4 1451.3,578.3 1451.7,578.0 1452.0,577.8 1452.4,577.6 1452.7,577.5 1453.1,577.1 1453.5,577.0 1453.8,576.9 1454.2,576.6 1454.5,576.5 1454.9,576.3 1455.3,575.9 1455.6,575.7 1456.0,575.5 1456.4,575.3 1456.7,575.1 1457.1,574.8 1457.4,574.6 1457.8,574.4 1458.2,574.1 1458.5,573.8 1458.9,573.6 1459.2,573.3 1459.6,573.3 1460.0,572.9 1460.3,572.5 1460.7,572.4 1461.0,572.3 1461.4,572.2 1461.8,572.0 1462.1,571.9 1462.5,571.5 1462.8,571.4 1463.2,571.1 1463.6,570.8 1463.9,570.9 1464.3,570.6 1464.7,570.5 1465.0,570.4 1465.4,570.2 1465.7,569.9 1466.1,569.6 1466.5,569.6 1466.8,569.3 1467.2,568.9 1467.5,568.8 1467.9,568.7 1468.3,568.6 1468.6,568.6 1469.0,568.2 1469.3,568.2 1469.7,568.2 1470.1,568.0 1470.4,568.1 1470.8,568.2 1471.2,568.1 1471.5,568.3 1471.9,568.4 1472.2,568.4 1472.6,568.4 1473.0,568.2 1473.3,568.3 1473.7,568.1 1474.0,568.0 1474.4,568.1 1474.8,568.2 1475.1,568.2 1475.5,568.1 1475.8,568.3 1476.2,568.3 1476.6,568.2 1476.9,568.2 1477.3,568.1 1477.7,568.1 1478.0,568.3 1478.4,568.3 1478.7,568.4 1479.1,568.2 1479.5,568.3 1479.8,568.2 1480.2,568.2 1480.5,568.1 1480.9,568.2 1481.3,568.4 1481.6,568.1 1482.0,568.2 1482.3,568.1 1482.7,568.2 1483.1,568.2 1483.4,568.0 1483.8,568.1 1484.2,568.1 1484.5,568.4 1484.9,568.2 1485.2,568.3 1485.6,568.3 1486.0,568.3 1486.3,568.2 1486.7,568.1 1487.0,568.4 1487.4,568.3 1487.8,568.4 1488.1,568.2 1488.5,568.3 1488.8,568.2 1489.2,568.3 1489.6,568.2 1489.9,568.1 1490.3,568.3 1490.7,568.3 1491.0,568.4 1491.4,568.3 1491.7,568.6 1492.1,569.4 1492.5,570.0 1492.8,570.5 1493.2,570.9 1493.5,571.2 1493.9,571.4 1494.3,571.6 1494.6,571.9 1495.0,572.1 1495.3,572.4 1495.7,572.7 1496.1,573.1 1496.4,573.4 1496.8,573.7 1497.1,574.7 1497.5,575.4 1497.9,576.0 1498.2,576.7 1498.6,577.9 1499.0,579.5 1499.3,580.1 1499.7,580.5 1500.0,581.0 1500.4,581.4 1500.8,581.8 1501.1,582.2 1501.5,582.6 1501.8,583.1 1502.2,583.6 1502.6,584.0 1502.9,584.4 1503.3,584.9 1503.6,585.0 1504.0,584.9 1504.4,585.0 1504.7,585.0 1505.1,585.0 1505.5,585.0 1505.8,585.0 1506.2,584.9 1506.5,585.0 1506.9,585.0 1507.3,585.1 1507.6,585.0 1508.0,585.0 1508.3,585.0 1508.7,585.0 1509.1,585.0 1509.4,585.0 1509.8,585.0 1510.1,585.0 1510.5,585.0 1510.9,585.0 1511.2,585.0 1511.6,586.2 1512.0,587.4 1512.3,588.4 1512.7,589.2 1513.0,590.0 1513.4,590.8 1513.8,591.7 1514.1,592.5 1514.5,593.3 1514.8,593.8 1515.2,594.3 1515.6,594.5 1515.9,594.5 1516.3,594.5 1516.6,594.5 1517.0,594.5 1517.4,594.5 1517.7,594.5 1518.1,594.5 1518.5,594.5 1518.8,594.5 1519.2,594.5 1519.5,594.5 1519.9,594.5 1520.3,594.5 1520.6,594.4 1521.0,594.4 1521.3,594.4 1521.7,594.4 1522.1,594.4 1522.4,594.4 1522.8,594.4 1523.1,594.4 1523.5,594.4 1523.9,594.4 1524.2,594.4 1524.6,594.4 1525.0,594.4 1525.3,594.4 1525.7,594.4 1526.0,594.4 1526.4,594.4 1526.8,594.4 1527.1,594.4 1527.5,594.4 1527.8,594.4 1528.2,594.4 1528.6,594.4 1528.9,594.4 1529.3,594.4 1529.6,594.4 1530.0,594.4 1530.4,594.4 1530.7,594.4 1531.1,594.4 1531.5,594.4 1531.8,594.4 1532.2,594.4 1532.5,594.4 1532.9,594.4 1533.3,594.4 1533.6,594.4 1534.0,594.3 1534.3,594.3 1534.7,594.3 1535.1,594.3 1535.4,594.3 1535.8,594.3 1536.1,594.3 1536.5,594.3 1536.9,594.3 1537.2,594.3 1537.6,594.3 1537.9,594.3 1538.3,594.3 1538.7,594.3 1539.0,594.3 1539.4,594.3 1539.8,594.3 1540.1,594.3 1540.5,594.3 1540.8,594.3 1541.2,594.3 1541.6,594.3 1541.9,594.3 1542.3,594.3 1542.6,594.3 1543.0,594.3 1543.4,594.3 1543.7,594.3 1544.1,594.3 1544.4,594.3 1544.8,594.3 1545.2,594.4 1545.5,594.4 1545.9,594.4 1546.3,594.4 1546.6,594.4 1547.0,594.4 1547.3,594.4 1547.7,594.4 1548.1,594.4 1548.4,594.4 1548.8,594.5 1549.1,594.5 1549.5,594.5 1549.9,594.5 1550.2,594.5 1550.6,594.5 1550.9,594.5 1551.3,594.5 1551.7,594.5 1552.0,594.5 1552.4,594.5 1552.8,594.6 1553.1,594.6 1553.5,594.6 1553.8,594.6 1554.2,594.6 1554.6,594.6 1554.9,594.6 1555.3,594.6 1555.6,594.6 1556.0,594.6 1556.4,594.7 1556.7,594.7 1557.1,594.7 1557.4,594.7 1557.8,594.7 1558.2,594.7 1558.5,594.7 1558.9,594.7 1559.3,594.7 1559.6,594.7 1560.0,594.8 1560.3,594.8 1560.7,594.8 1561.1,594.8 1561.4,594.8 1561.8,594.8 1562.1,594.8 1562.5,594.8 1562.9,594.8 1563.2,594.8 1563.6,594.8 1563.9,594.8 1564.3,594.8 1564.7,594.8 1565.0,594.8 1565.4,594.8 1565.8,594.8 1566.1,594.8 1566.5,594.8 1566.8,594.8 1567.2,594.8 1567.6,594.8 1567.9,594.8 1568.3,594.7 1568.6,594.7 1569.0,594.7 1569.4,594.7 1569.7,594.7 1570.1,594.7 1570.4,594.7 1570.8,594.7 1571.2,594.7 1571.5,594.7 1571.9,594.7 1572.2,594.7 1572.6,594.7 1573.0,594.7 1573.3,594.7 1573.7,594.7 1574.1,594.7 1574.4,594.6 1574.8,594.6 1575.1,594.6 1575.5,594.6 1575.9,594.6 1576.2,594.6 1576.6,594.6 1576.9,594.6 1577.3,594.6 1577.7,594.6 1578.0,594.6 1578.4,594.6 1578.7,594.6 1579.1,594.6 1579.5,594.6 1579.8,594.6 1580.2,594.6 1580.6,594.5 1580.9,594.5 1581.3,594.5 1581.6,594.5 1582.0,594.5 1582.4,594.5 1582.7,594.5 1583.1,594.6 1583.4,594.6 1583.8,594.6 1584.2,594.6 1584.5,594.6 1584.9,594.6 1585.2,594.6 1585.6,594.6 1586.0,594.6 1586.3,594.6 1586.7,594.6 1587.1,594.6 1587.4,594.6 1587.8,594.6 1588.1,594.6 1588.5,594.6 1588.9,594.6 1589.2,594.7 1589.6,594.7 1589.9,594.7 1590.3,594.7 1590.7,594.7 1591.0,594.7 1591.4,594.7 1591.7,594.7 1592.1,594.7 1592.5,594.7 1592.8,594.7 1593.2,594.7 1593.6,594.7 1593.9,594.7 1594.3,594.7 1594.6,594.7 1595.0,594.7 1595.4,594.8 1595.7,594.8 1596.1,594.8 1596.4,594.8 1596.8,594.8 1597.2,594.8 1597.5,594.8 1597.9,594.8 1598.2,594.8 1598.6,594.8 1599.0,594.8 1599.3,594.8 1599.7,594.8 1600.1,594.8 1600.4,594.8 1600.8,594.8 1601.1,594.8 1601.5,594.8 1601.9,594.8 1602.2,594.8 1602.6,594.8 1602.9,594.8 1603.3,594.8 1603.7,594.8 1604.0,594.8 1604.4,594.8 1604.7,594.8 1605.1,594.8 1605.5,594.8 1605.8,594.8 1606.2,594.8 1606.6,594.8 1606.9,594.8 1607.3,594.8 1607.6,594.8 1608.0,594.8 1608.4,594.8 1608.7,594.8 1609.1,594.8 1609.4,594.8 1609.8,594.8 1610.2,594.8 1610.5,594.8 1610.9,594.8 1611.2,594.8 1611.6,594.8 1612.0,594.8 1612.3,594.8 1612.7,594.8 1613.0,594.8 1613.4,594.8 1613.8,594.8 1614.1,594.8 1614.5,594.8 1614.9,594.8 1615.2,594.8 1615.6,594.8 1615.9,594.8 1616.3,594.8 1616.7,594.8 1617.0,594.8 1617.4,594.8 1617.7,594.8 1618.1,594.8 1618.5,594.8 1618.8,594.8 1619.2,594.8 1619.5,594.8 1619.9,594.8 1620.3,594.8 1620.6,594.8 1621.0,594.8 1621.4,594.8 1621.7,594.8 1622.1,594.8 1622.4,594.8 1622.8,594.8 1623.2,594.8 1623.5,594.8 1623.9,594.8 1624.2,594.8 1624.6,594.8 1625.0,594.8 1625.3,594.8 1625.7,594.8 1626.0,594.8 1626.4,594.8 1626.8,594.8 1627.1,594.8 1627.5,594.8 1627.9,594.8 1628.2,594.8 1628.6,594.8 1628.9,594.8 1629.3,594.8 1629.7,594.8 1630.0,594.8 1630.4,594.8 1630.7,594.7 1631.1,594.7 1631.5,594.7 1631.8,594.7 1632.2,594.7 1632.5,594.7 1632.9,594.7 1633.3,594.7 1633.6,594.7 1634.0,594.7 1634.4,594.7 1634.7,594.7 1635.1,594.7 1635.4,594.7 1635.8,594.7 1636.2,594.7 1636.5,594.7 1636.9,594.7 1637.2,594.7 1637.6,594.7 1638.0,594.7 1638.3,594.7 1638.7,594.7 1639.0,594.7 1639.4,594.7 1639.8,594.7 1640.1,594.7 1640.5,594.7 1640.9,594.7 1641.2,594.7 1641.6,594.7 1641.9,594.7 1642.3,594.7 1642.7,594.7 1643.0,594.7 1643.4,594.7 1643.7,594.7 1644.1,594.6 1644.5,594.6 1644.8,594.6 1645.2,594.6 1645.5,594.6 1645.9,594.6 1646.3,594.6 1646.6,593.9 1647.0,593.4 1647.3,593.4 1647.7,593.4 1648.1,593.4 1648.4,593.4 1648.8,593.4 1649.2,593.4 1649.5,593.4 1649.9,593.4 1650.2,593.4 1650.6,593.4 1651.0,593.4 1651.3,593.4 1651.7,593.4 1652.0,593.4 1652.4,593.4 1652.8,593.4 1653.1,593.4 1653.5,593.4 1653.8,593.4 1654.2,593.4 1654.6,593.4 1654.9,593.4 1655.3,593.3 1655.7,593.3 1656.0,593.3 1656.4,593.3 1656.7,593.3 1657.1,593.3 1657.5,593.3 1657.8,593.3 1658.2,593.3 1658.5,593.3 1658.9,593.3 1659.3,593.3 1659.6,593.3 1660.0,593.3 1660.3,593.3 1660.7,593.3 1661.1,593.3 1661.4,593.3 1661.8,593.3 1662.2,593.3 1662.5,593.3 1662.9,593.3 1663.2,593.3 1663.6,593.3 1664.0,593.3 1664.3,593.2 1664.7,593.2 1665.0,593.1 1665.4,592.3 1665.8,592.0 1666.1,591.9 1666.5,591.9 1666.8,591.9 1667.2,591.9 1667.6,591.9 1667.9,591.9 1668.3,591.9 1668.7,591.9 1669.0,591.9 1669.4,591.9 1669.7,591.9 1670.1,591.2 1670.5,590.7 1670.8,590.7 1671.2,590.7 1671.5,590.6 1671.9,590.6 1672.3,590.6 1672.6,590.6 1673.0,590.6 1673.3,590.6 1673.7,590.6 1674.1,590.6 1674.4,590.6 1674.8,589.9 1675.2,589.4 1675.5,589.4 1675.9,589.4 1676.2,589.4 1676.6,589.4 1677.0,589.4 1677.3,589.4 1677.7,589.4 1678.0,589.4 1678.4,589.4 1678.8,589.4 1679.1,589.4 1679.5,589.4 1679.8,589.3 1680.2,589.3 1680.6,589.3 1680.9,589.3 1681.3,589.3 1681.7,589.3 1682.0,589.3 1682.4,589.3 1682.7,589.3 1683.1,589.3 1683.5,589.3 1683.8,589.2 1684.2,588.0 1684.5,588.0 1684.9,588.0 1685.3,588.0 1685.6,588.0 1686.0,588.0 1686.3,588.0 1686.7,588.0 1687.1,588.0 1687.4,588.0 1687.8,588.0 1688.1,588.0 1688.5,588.0 1688.9,587.5 1689.2,586.6 1689.6,586.6 1690.0,586.6 1690.3,586.6 1690.7,586.6 1691.0,586.6 1691.4,586.6 1691.8,586.6 1692.1,586.6 1692.5,586.6 1692.8,586.6 1693.2,586.4 1693.6,585.5 1693.9,585.5 1694.3,585.5 1694.6,585.5 1695.0,585.4 1695.4,585.4 1695.7,585.4 1696.1,585.4 1696.5,585.4 1696.8,585.4 1697.2,585.4 1697.5,585.4 1697.9,585.4 1698.3,585.4 1698.6,584.7 1699.0,584.1 1699.3,584.1 1699.7,584.0 1700.1,584.0 1700.4,584.0 1700.8,584.0 1701.1,584.0 1701.5,584.0 1701.9,584.0 1702.2,584.0 1702.6,584.0 1703.0,583.4 1703.3,582.9 1703.7,582.9 1704.0,582.9 1704.4,582.9 1704.8,582.9 1705.1,582.9 1705.5,582.9 1705.8,582.9 1706.2,582.9 1706.6,582.9 1706.9,582.9 1707.3,582.9 1707.6,582.9 1708.0,582.9 1708.4,582.9 1708.7,582.9 1709.1,582.9 1709.5,582.9 1709.8,582.9 1710.2,582.9 1710.5,582.9 1710.9,582.9 1711.3,582.9 1711.6,582.9 1712.0,582.9 1712.3,582.9 1712.7,582.9 1713.1,582.9 1713.4,582.9 1713.8,582.9 1714.1,582.9 1714.5,583.3 1714.9,584.2 1715.2,584.4 1715.6,584.4 1716.0,584.4 1716.3,584.4 1716.7,584.5 1717.0,584.9 1717.4,585.5 1717.8,585.6 1718.1,585.7 1718.5,585.7 1718.8,585.8 1719.2,586.4 1719.6,587.3 1719.9,587.3 1720.3,587.3 1720.6,587.3 1721.0,587.3 1721.4,587.3 1721.7,587.3 1722.1,587.2 1722.4,587.2 1722.8,587.2 1723.2,587.2 1723.5,587.2 1723.9,587.2 1724.3,587.2 1724.6,587.2 1725.0,587.2 1725.3,587.5 1725.7,589.1 1726.1,591.4 1726.4,594.1 1726.8,594.5 1727.1,595.0 1727.5,595.0 1727.9,595.0 1728.2,595.0 1728.6,595.0 1728.9,595.0 1729.3,595.0 1729.7,595.0 1730.0,595.0 1730.4,595.0 1730.8,595.0 1731.1,595.0 1731.5,595.0 1731.8,595.0 1732.2,595.0 1732.6,595.0 1732.9,595.0 1733.3,595.0 1733.6,595.0 1734.0,595.0 1734.4,595.0 1734.7,595.0 1735.1,595.0 1735.4,595.0 1735.8,595.0 1736.2,595.0 1736.5,594.9 1736.9,594.9 1737.3,594.9 1737.6,594.9 1738.0,594.9 1738.3,594.9 1738.7,594.9 1739.1,594.9 1739.4,594.9 1739.8,594.9 1740.1,594.9 1740.5,594.9 1740.9,594.9 1741.2,594.9 1741.6,594.9 1741.9,594.9 1742.3,594.9 1742.7,594.9 1743.0,594.9 1743.4,594.9 1743.8,594.9 1744.1,594.9 1744.5,594.9 1744.8,594.9 1745.2,594.9 1745.6,594.9 1745.9,594.9 1746.3,594.9 1746.6,594.9 1747.0,594.9 1747.4,594.9 1747.7,594.9 1748.1,594.9 1748.4,594.9 1748.8,594.9 1749.2,594.9 1749.5,594.9 1749.9,594.9 1750.3,594.9 1750.6,594.9 1751.0,594.9 1751.3,594.9 1751.7,594.9 1752.1,594.9 1752.4,594.9 1752.8,594.9 1753.1,594.9 1753.5,594.9 1753.9,594.9 1754.2,594.9 1754.6,594.9 1754.9,594.9 1755.3,594.9 1755.7,594.9 1756.0,594.9 1756.4,594.9 1756.8,594.9 1757.1,594.9 1757.5,594.9 1757.8,594.9 1758.2,594.9 1758.6,594.9 1758.9,594.9 1759.3,594.9 1759.6,594.9 1760.0,594.9 1760.4,594.9 1760.7,594.9 1761.1,594.9 1761.4,594.9 1761.8,594.9 1762.2,594.9 1762.5,594.9 1762.9,594.9 1763.2,594.9 1763.6,594.9 1764.0,594.1 1764.3,593.6 1764.7,593.6 1765.1,593.6 1765.4,593.6 1765.8,593.6 1766.1,593.6 1766.5,591.5 1766.9,591.0 1767.2,591.0 1767.6,591.0 1767.9,591.0 1768.3,590.6 1768.7,587.2 1769.0,587.2 1769.4,587.2 1769.7,587.2 1770.1,587.2 1770.5,587.2 1770.8,583.9 1771.2,583.3 1771.6,583.3 1771.9,583.3 1772.3,583.3 1772.6,583.3 1773.0,583.3 1773.4,583.0 1773.7,579.4 1774.1,579.4 1774.4,579.4 1774.8,579.4 1775.2,579.4 1775.5,579.4 1775.9,576.3 1776.2,575.6 1776.6,575.6 1777.0,575.6 1777.3,575.6 1777.7,575.3 1778.1,573.0 1778.4,573.0 1778.8,573.0 1779.1,573.0 1779.5,573.0 1779.9,573.0 1780.2,572.6 1780.6,571.7 1780.9,571.7 1781.3,571.7 1781.7,571.7 1782.0,571.7 1782.4,571.7 1782.7,571.6 1783.1,570.4 1783.5,570.4 1783.8,570.4 1784.2,570.4 1784.6,570.4 1784.9,570.4 1785.3,569.4 1785.6,569.1 1786.0,569.1 1786.4,569.1 1786.7,569.1 1787.1,569.1 1787.4,569.1 1787.8,569.1 1788.2,569.1 1788.5,569.1 1788.9,569.1 1789.2,568.6 1789.6,567.9 1790.0,567.9 1790.3,567.9 1790.7,567.9 1791.1,567.9 1791.4,567.9 1791.8,567.9 1792.1,567.9 1792.5,567.9 1792.9,567.9 1793.2,567.9 1793.6,567.9 1793.9,567.9 1794.3,567.9 1794.7,567.9 1795.0,567.9 1795.4,567.9 1795.7,567.9 1796.1,567.9 1796.5,567.9 1796.8,567.9 1797.2,567.9 1797.5,567.9 1797.9,567.9 1798.3,567.9 1798.6,567.9 1799.0,567.9 1799.4,567.9 1799.7,567.9 1800.1,567.9 1800.4,567.9 1800.8,567.9 1801.2,567.9 1801.5,567.9 1801.9,567.9 1802.2,567.9 1802.6,567.9 1803.0,567.9 1803.3,567.9 1803.7,567.9 1804.0,567.9 1804.4,567.9 1804.8,567.9 1805.1,567.9 1805.5,567.9 1805.9,567.9 1806.2,567.9 1806.6,567.9 1806.9,567.9 1807.3,567.9 1807.7,567.9 1808.0,567.9 1808.4,567.9 1808.7,567.9 1809.1,567.9 1809.5,567.9 1809.8,567.9 1810.2,567.9 1810.5,567.9 1810.9,569.3 1811.3,570.4 1811.6,570.4 1812.0,570.4 1812.4,570.4 1812.7,570.4 1813.1,571.7 1813.4,571.7 1813.8,571.7"/></g>
<g clip-path="url(#c2)"><polygon fill="#5c2a55" fill-opacity="0.25" points="572.5,930 572.5,927.4 577.2,927.4 581.9,927.3 586.6,927.3 591.3,927.2 596.0,927.1 600.6,927.1 605.3,927.1 610.0,927.0 614.7,927.0 619.4,927.0 624.1,926.9 628.8,926.9 633.5,926.8 638.2,926.8 642.9,926.7 647.6,926.7 652.3,926.6 657.0,926.6 661.7,926.5 666.4,926.5 671.1,926.4 675.7,926.3 680.4,926.2 685.1,926.1 689.8,926.1 694.5,926.0 699.2,925.9 703.9,925.8 708.6,925.7 713.3,925.6 718.0,925.5 722.7,925.5 727.4,925.4 732.1,925.3 736.8,925.2 741.5,925.1 746.2,925.1 750.8,925.0 755.5,924.9 760.2,924.8 764.9,924.7 769.6,924.6 774.3,924.6 779.0,924.5 783.7,924.4 788.4,924.2 793.1,924.1 797.8,924.0 802.5,923.8 807.2,923.7 811.9,923.6 816.6,923.4 821.2,923.3 825.9,923.1 830.6,922.9 835.3,922.7 840.0,922.6 844.7,922.4 849.4,922.2 854.1,922.0 858.8,921.8 863.5,921.7 868.2,921.5 872.9,921.3 877.6,921.2 882.3,920.9 887.0,920.7 891.7,920.4 896.4,920.2 901.0,919.9 905.7,919.6 910.4,919.2 915.1,918.9 919.8,918.6 924.5,918.3 929.2,918.0 933.9,917.7 938.6,917.4 943.3,917.0 948.0,916.7 952.7,916.3 957.4,916.0 962.1,915.7 966.8,915.3 971.5,914.9 976.1,914.5 980.8,914.0 985.5,913.6 990.2,913.2 994.9,913.0 999.6,912.8 1004.3,912.6 1009.0,912.5 1013.7,912.1 1018.4,911.8 1023.1,911.4 1027.8,911.0 1032.5,910.5 1037.2,909.9 1041.9,909.4 1046.5,908.8 1051.2,908.5 1055.9,908.1 1060.6,907.7 1065.3,907.4 1070.0,907.1 1074.7,906.7 1079.4,906.3 1084.1,905.9 1088.8,905.5 1093.5,905.0 1098.2,904.5 1102.9,904.2 1107.6,903.8 1112.3,903.3 1117.0,902.9 1121.7,902.5 1126.3,902.0 1131.0,901.6 1135.7,901.1 1140.4,900.7 1145.1,900.2 1149.8,899.8 1154.5,899.1 1159.2,898.6 1163.9,898.3 1168.6,898.1 1173.3,897.8 1178.0,897.6 1182.7,897.1 1187.4,896.6 1192.1,896.2 1196.8,895.7 1201.4,895.3 1206.1,894.8 1210.8,894.4 1215.5,893.8 1220.2,893.2 1224.9,892.8 1229.6,892.2 1234.3,891.6 1239.0,891.2 1243.7,890.7 1248.4,890.2 1253.1,889.6 1257.8,889.2 1262.5,888.7 1267.2,888.2 1271.8,887.8 1276.5,887.0 1281.2,886.3 1285.9,885.6 1290.6,885.0 1295.3,884.3 1300.0,883.6 1304.7,883.0 1309.4,882.5 1314.1,881.7 1318.8,880.9 1323.5,880.0 1328.2,879.1 1332.9,878.4 1337.6,877.7 1342.3,877.0 1347.0,876.2 1351.6,875.7 1356.3,875.2 1361.0,874.9 1365.7,874.5 1370.4,873.9 1375.1,873.5 1379.8,873.1 1384.5,872.6 1389.2,871.6 1393.9,870.9 1398.6,869.9 1403.3,869.1 1408.0,868.3 1412.7,867.4 1417.4,866.7 1422.0,865.9 1426.7,864.9 1431.4,863.9 1436.1,862.8 1440.8,861.7 1445.5,860.6 1450.2,859.5 1454.9,858.8 1459.6,857.6 1464.3,857.1 1469.0,856.4 1473.7,855.8 1478.4,855.1 1483.1,854.4 1487.8,854.0 1492.5,853.5 1497.2,853.0 1501.8,852.7 1506.5,852.1 1511.2,852.3 1515.9,854.2 1520.6,854.4 1525.3,854.2 1530.0,852.8 1534.7,851.5 1539.4,850.7 1544.1,849.8 1548.8,848.9 1553.5,848.1 1558.2,847.3 1562.9,846.4 1567.6,845.6 1572.2,844.9 1576.9,844.0 1581.6,843.1 1586.3,842.1 1591.0,841.2 1595.7,840.4 1600.4,839.6 1605.1,838.7 1609.8,837.6 1614.5,837.0 1619.2,836.3 1623.9,835.4 1628.6,834.9 1633.3,834.1 1638.0,833.3 1642.7,832.6 1647.3,831.8 1652.0,830.4 1656.7,829.1 1661.4,828.0 1666.1,826.8 1670.8,825.2 1675.5,824.3 1680.2,823.0 1684.9,821.7 1689.6,820.9 1694.3,820.0 1699.0,819.3 1703.7,818.4 1708.4,817.4 1713.1,816.8 1717.8,816.0 1722.5,815.0 1727.1,816.1 1731.8,825.6 1736.5,816.8 1741.2,814.5 1745.9,810.8 1750.6,807.2 1755.3,803.5 1760.0,800.3 1764.7,797.4 1769.4,795.0 1774.1,792.2 1778.8,788.9 1783.5,787.2 1788.2,784.9 1792.9,782.9 1797.5,780.9 1802.2,779.5 1806.9,777.7 1811.6,775.9 1811.6,930"/>
<polyline fill="none" stroke="#5c2a55" stroke-width="2.6" stroke-linejoin="round" stroke-linecap="round" points="572.5,927.4 577.2,927.4 581.9,927.3 586.6,927.3 591.3,927.2 596.0,927.1 600.6,927.1 605.3,927.1 610.0,927.0 614.7,927.0 619.4,927.0 624.1,926.9 628.8,926.9 633.5,926.8 638.2,926.8 642.9,926.7 647.6,926.7 652.3,926.6 657.0,926.6 661.7,926.5 666.4,926.5 671.1,926.4 675.7,926.3 680.4,926.2 685.1,926.1 689.8,926.1 694.5,926.0 699.2,925.9 703.9,925.8 708.6,925.7 713.3,925.6 718.0,925.5 722.7,925.5 727.4,925.4 732.1,925.3 736.8,925.2 741.5,925.1 746.2,925.1 750.8,925.0 755.5,924.9 760.2,924.8 764.9,924.7 769.6,924.6 774.3,924.6 779.0,924.5 783.7,924.4 788.4,924.2 793.1,924.1 797.8,924.0 802.5,923.8 807.2,923.7 811.9,923.6 816.6,923.4 821.2,923.3 825.9,923.1 830.6,922.9 835.3,922.7 840.0,922.6 844.7,922.4 849.4,922.2 854.1,922.0 858.8,921.8 863.5,921.7 868.2,921.5 872.9,921.3 877.6,921.2 882.3,920.9 887.0,920.7 891.7,920.4 896.4,920.2 901.0,919.9 905.7,919.6 910.4,919.2 915.1,918.9 919.8,918.6 924.5,918.3 929.2,918.0 933.9,917.7 938.6,917.4 943.3,917.0 948.0,916.7 952.7,916.3 957.4,916.0 962.1,915.7 966.8,915.3 971.5,914.9 976.1,914.5 980.8,914.0 985.5,913.6 990.2,913.2 994.9,913.0 999.6,912.8 1004.3,912.6 1009.0,912.5 1013.7,912.1 1018.4,911.8 1023.1,911.4 1027.8,911.0 1032.5,910.5 1037.2,909.9 1041.9,909.4 1046.5,908.8 1051.2,908.5 1055.9,908.1 1060.6,907.7 1065.3,907.4 1070.0,907.1 1074.7,906.7 1079.4,906.3 1084.1,905.9 1088.8,905.5 1093.5,905.0 1098.2,904.5 1102.9,904.2 1107.6,903.8 1112.3,903.3 1117.0,902.9 1121.7,902.5 1126.3,902.0 1131.0,901.6 1135.7,901.1 1140.4,900.7 1145.1,900.2 1149.8,899.8 1154.5,899.1 1159.2,898.6 1163.9,898.3 1168.6,898.1 1173.3,897.8 1178.0,897.6 1182.7,897.1 1187.4,896.6 1192.1,896.2 1196.8,895.7 1201.4,895.3 1206.1,894.8 1210.8,894.4 1215.5,893.8 1220.2,893.2 1224.9,892.8 1229.6,892.2 1234.3,891.6 1239.0,891.2 1243.7,890.7 1248.4,890.2 1253.1,889.6 1257.8,889.2 1262.5,888.7 1267.2,888.2 1271.8,887.8 1276.5,887.0 1281.2,886.3 1285.9,885.6 1290.6,885.0 1295.3,884.3 1300.0,883.6 1304.7,883.0 1309.4,882.5 1314.1,881.7 1318.8,880.9 1323.5,880.0 1328.2,879.1 1332.9,878.4 1337.6,877.7 1342.3,877.0 1347.0,876.2 1351.6,875.7 1356.3,875.2 1361.0,874.9 1365.7,874.5 1370.4,873.9 1375.1,873.5 1379.8,873.1 1384.5,872.6 1389.2,871.6 1393.9,870.9 1398.6,869.9 1403.3,869.1 1408.0,868.3 1412.7,867.4 1417.4,866.7 1422.0,865.9 1426.7,864.9 1431.4,863.9 1436.1,862.8 1440.8,861.7 1445.5,860.6 1450.2,859.5 1454.9,858.8 1459.6,857.6 1464.3,857.1 1469.0,856.4 1473.7,855.8 1478.4,855.1 1483.1,854.4 1487.8,854.0 1492.5,853.5 1497.2,853.0 1501.8,852.7 1506.5,852.1 1511.2,852.3 1515.9,854.2 1520.6,854.4 1525.3,854.2 1530.0,852.8 1534.7,851.5 1539.4,850.7 1544.1,849.8 1548.8,848.9 1553.5,848.1 1558.2,847.3 1562.9,846.4 1567.6,845.6 1572.2,844.9 1576.9,844.0 1581.6,843.1 1586.3,842.1 1591.0,841.2 1595.7,840.4 1600.4,839.6 1605.1,838.7 1609.8,837.6 1614.5,837.0 1619.2,836.3 1623.9,835.4 1628.6,834.9 1633.3,834.1 1638.0,833.3 1642.7,832.6 1647.3,831.8 1652.0,830.4 1656.7,829.1 1661.4,828.0 1666.1,826.8 1670.8,825.2 1675.5,824.3 1680.2,823.0 1684.9,821.7 1689.6,820.9 1694.3,820.0 1699.0,819.3 1703.7,818.4 1708.4,817.4 1713.1,816.8 1717.8,816.0 1722.5,815.0 1727.1,816.1 1731.8,825.6 1736.5,816.8 1741.2,814.5 1745.9,810.8 1750.6,807.2 1755.3,803.5 1760.0,800.3 1764.7,797.4 1769.4,795.0 1774.1,792.2 1778.8,788.9 1783.5,787.2 1788.2,784.9 1792.9,782.9 1797.5,780.9 1802.2,779.5 1806.9,777.7 1811.6,775.9"/></g>
<g clip-path="url(#c3)"><polygon fill="#4a86d6" fill-opacity="0.25" points="567.8,1233 567.8,1146.4 569.4,1147.5 570.9,1151.0 572.5,1152.2 574.0,1156.8 575.6,1160.2 577.2,1162.5 578.7,1163.7 580.3,1167.2 581.9,1170.6 583.4,1174.1 585.0,1174.1 586.6,1174.1 588.1,1172.9 589.7,1170.6 591.3,1168.3 592.8,1167.2 594.4,1171.8 595.9,1171.8 597.5,1175.2 599.1,1175.2 600.6,1172.9 602.2,1172.9 603.8,1172.9 605.3,1171.8 606.9,1169.5 608.5,1167.2 610.0,1163.7 611.6,1161.4 613.2,1157.9 614.7,1154.5 616.3,1151.0 617.9,1153.3 619.4,1152.2 621.0,1152.2 622.5,1151.0 624.1,1154.5 625.7,1154.5 627.2,1156.8 628.8,1159.1 630.4,1162.5 631.9,1163.7 633.5,1166.0 635.1,1168.3 636.6,1168.3 638.2,1168.3 639.8,1169.5 641.3,1170.6 642.9,1170.6 644.5,1169.5 646.0,1169.5 647.6,1169.5 649.1,1169.5 650.7,1168.3 652.3,1167.2 653.8,1168.3 655.4,1167.2 657.0,1164.9 658.5,1166.0 660.1,1166.0 661.7,1168.3 663.2,1168.3 664.8,1169.5 666.4,1169.5 667.9,1167.2 669.5,1167.2 671.0,1169.5 672.6,1169.5 674.2,1170.6 675.7,1170.6 677.3,1171.8 678.9,1174.1 680.4,1175.2 682.0,1174.1 683.6,1174.1 685.1,1174.1 686.7,1174.1 688.3,1174.1 689.8,1176.4 691.4,1176.4 693.0,1175.2 694.5,1176.4 696.1,1178.7 697.6,1179.9 699.2,1179.9 700.8,1182.2 702.3,1183.3 703.9,1183.3 705.5,1184.5 707.0,1185.6 708.6,1186.8 710.2,1189.1 711.7,1189.1 713.3,1189.1 714.9,1190.3 716.4,1189.1 718.0,1188.0 719.6,1190.3 721.1,1190.3 722.7,1189.1 724.2,1190.3 725.8,1190.3 727.4,1191.4 728.9,1189.1 730.5,1188.0 732.1,1186.8 733.6,1188.0 735.2,1188.0 736.8,1188.0 738.3,1188.0 739.9,1186.8 741.5,1189.1 743.0,1188.0 744.6,1189.1 746.1,1188.0 747.7,1189.1 749.3,1191.4 750.8,1191.4 752.4,1191.4 754.0,1191.4 755.5,1191.4 757.1,1192.6 758.7,1193.7 760.2,1192.6 761.8,1192.6 763.4,1193.7 764.9,1193.7 766.5,1192.6 768.1,1193.7 769.6,1193.7 771.2,1193.7 772.7,1192.6 774.3,1193.7 775.9,1191.4 777.4,1191.4 779.0,1192.6 780.6,1191.4 782.1,1192.6 783.7,1191.4 785.3,1188.0 786.8,1184.5 788.4,1181.0 790.0,1179.9 791.5,1176.4 793.1,1175.2 794.7,1174.1 796.2,1171.8 797.8,1170.6 799.3,1168.3 800.9,1164.9 802.5,1163.7 804.0,1163.7 805.6,1164.9 807.2,1164.9 808.7,1163.7 810.3,1163.7 811.9,1163.7 813.4,1162.5 815.0,1162.5 816.6,1161.4 818.1,1163.7 819.7,1162.5 821.2,1163.7 822.8,1163.7 824.4,1163.7 825.9,1167.2 827.5,1168.3 829.1,1167.2 830.6,1167.2 832.2,1167.2 833.8,1168.3 835.3,1168.3 836.9,1170.6 838.5,1171.8 840.0,1172.9 841.6,1176.4 843.2,1176.4 844.7,1177.6 846.3,1176.4 847.8,1177.6 849.4,1178.7 851.0,1177.6 852.5,1179.9 854.1,1179.9 855.7,1181.0 857.2,1177.6 858.8,1175.2 860.4,1174.1 861.9,1174.1 863.5,1172.9 865.1,1172.9 866.6,1171.8 868.2,1170.6 869.8,1168.3 871.3,1167.2 872.9,1163.7 874.4,1159.1 876.0,1152.2 877.6,1147.5 879.1,1140.6 880.7,1137.1 882.3,1133.7 883.8,1131.4 885.4,1130.2 887.0,1131.4 888.5,1134.8 890.1,1133.7 891.7,1134.8 893.2,1134.8 894.8,1136.0 896.3,1139.4 897.9,1141.8 899.5,1142.9 901.0,1144.1 902.6,1145.2 904.2,1146.4 905.7,1146.4 907.3,1145.2 908.9,1145.2 910.4,1142.9 912.0,1144.1 913.6,1144.1 915.1,1144.1 916.7,1145.2 918.3,1147.5 919.8,1148.7 921.4,1149.8 922.9,1152.2 924.5,1153.3 926.1,1152.2 927.6,1154.5 929.2,1154.5 930.8,1156.8 932.3,1156.8 933.9,1159.1 935.5,1160.2 937.0,1160.2 938.6,1160.2 940.2,1161.4 941.7,1162.5 943.3,1164.9 944.9,1163.7 946.4,1164.9 948.0,1163.7 949.5,1164.9 951.1,1163.7 952.7,1166.0 954.2,1166.0 955.8,1164.9 957.4,1166.0 958.9,1167.2 960.5,1167.2 962.1,1168.3 963.6,1167.2 965.2,1163.7 966.8,1163.7 968.3,1164.9 969.9,1164.9 971.4,1162.5 973.0,1160.2 974.6,1160.2 976.1,1155.6 977.7,1149.8 979.3,1146.4 980.8,1145.2 982.4,1144.1 984.0,1146.4 985.5,1146.4 987.1,1148.7 988.7,1147.5 990.2,1147.5 991.8,1147.5 993.4,1146.4 994.9,1147.5 996.5,1148.7 998.0,1148.7 999.6,1147.5 1001.2,1148.7 1002.7,1146.4 1004.3,1142.9 1005.9,1140.6 1007.4,1134.8 1009.0,1134.8 1010.6,1133.7 1012.1,1130.2 1013.7,1127.9 1015.3,1125.6 1016.8,1123.3 1018.4,1121.0 1020.0,1117.5 1021.5,1117.5 1023.1,1114.0 1024.6,1111.7 1026.2,1108.3 1027.8,1110.6 1029.3,1112.9 1030.9,1114.0 1032.5,1114.0 1034.0,1115.2 1035.6,1117.5 1037.2,1118.7 1038.7,1121.0 1040.3,1127.9 1041.9,1130.2 1043.4,1131.4 1045.0,1134.8 1046.5,1138.3 1048.1,1140.6 1049.7,1142.9 1051.2,1144.1 1052.8,1146.4 1054.4,1147.5 1055.9,1148.7 1057.5,1148.7 1059.1,1149.8 1060.6,1148.7 1062.2,1149.8 1063.8,1148.7 1065.3,1147.5 1066.9,1148.7 1068.5,1148.7 1070.0,1148.7 1071.6,1149.8 1073.1,1149.8 1074.7,1151.0 1076.3,1149.8 1077.8,1152.2 1079.4,1151.0 1081.0,1152.2 1082.5,1153.3 1084.1,1153.3 1085.7,1154.5 1087.2,1153.3 1088.8,1153.3 1090.4,1149.8 1091.9,1149.8 1093.5,1152.2 1095.1,1152.2 1096.6,1154.5 1098.2,1153.3 1099.7,1153.3 1101.3,1154.5 1102.9,1156.8 1104.4,1157.9 1106.0,1156.8 1107.6,1157.9 1109.1,1160.2 1110.7,1160.2 1112.3,1160.2 1113.8,1161.4 1115.4,1162.5 1117.0,1163.7 1118.5,1164.9 1120.1,1166.0 1121.6,1167.2 1123.2,1167.2 1124.8,1168.3 1126.3,1168.3 1127.9,1168.3 1129.5,1167.2 1131.0,1169.5 1132.6,1170.6 1134.2,1170.6 1135.7,1170.6 1137.3,1170.6 1138.9,1171.8 1140.4,1172.9 1142.0,1175.2 1143.6,1175.2 1145.1,1174.1 1146.7,1172.9 1148.2,1172.9 1149.8,1171.8 1151.4,1171.8 1152.9,1170.6 1154.5,1171.8 1156.1,1170.6 1157.6,1171.8 1159.2,1172.9 1160.8,1170.6 1162.3,1172.9 1163.9,1171.8 1165.5,1171.8 1167.0,1171.8 1168.6,1171.8 1170.2,1169.5 1171.7,1167.2 1173.3,1166.0 1174.8,1164.9 1176.4,1161.4 1178.0,1160.2 1179.5,1157.9 1181.1,1155.6 1182.7,1153.3 1184.2,1153.3 1185.8,1154.5 1187.4,1153.3 1188.9,1152.2 1190.5,1151.0 1192.1,1149.8 1193.6,1151.0 1195.2,1149.8 1196.7,1148.7 1198.3,1149.8 1199.9,1147.5 1201.4,1147.5 1203.0,1145.2 1204.6,1145.2 1206.1,1144.1 1207.7,1144.1 1209.3,1144.1 1210.8,1145.2 1212.4,1146.4 1214.0,1148.7 1215.5,1151.0 1217.1,1149.8 1218.7,1151.0 1220.2,1151.0 1221.8,1149.8 1223.3,1152.2 1224.9,1154.5 1226.5,1154.5 1228.0,1155.6 1229.6,1156.8 1231.2,1155.6 1232.7,1155.6 1234.3,1157.9 1235.9,1156.8 1237.4,1156.8 1239.0,1159.1 1240.6,1161.4 1242.1,1162.5 1243.7,1163.7 1245.3,1163.7 1246.8,1164.9 1248.4,1164.9 1249.9,1166.0 1251.5,1167.2 1253.1,1167.2 1254.6,1169.5 1256.2,1169.5 1257.8,1169.5 1259.3,1169.5 1260.9,1168.3 1262.5,1168.3 1264.0,1169.5 1265.6,1167.2 1267.2,1167.2 1268.7,1168.3 1270.3,1167.2 1271.8,1167.2 1273.4,1168.3 1275.0,1170.6 1276.5,1170.6 1278.1,1170.6 1279.7,1171.8 1281.2,1171.8 1282.8,1170.6 1284.4,1172.9 1285.9,1174.1 1287.5,1170.6 1289.1,1171.8 1290.6,1172.9 1292.2,1172.9 1293.8,1172.9 1295.3,1175.2 1296.9,1175.2 1298.4,1176.4 1300.0,1177.6 1301.6,1177.6 1303.1,1177.6 1304.7,1178.7 1306.3,1178.7 1307.8,1178.7 1309.4,1177.6 1311.0,1179.9 1312.5,1178.7 1314.1,1179.9 1315.7,1181.0 1317.2,1179.9 1318.8,1179.9 1320.4,1179.9 1321.9,1179.9 1323.5,1181.0 1325.0,1182.2 1326.6,1181.0 1328.2,1182.2 1329.7,1181.0 1331.3,1182.2 1332.9,1182.2 1334.4,1182.2 1336.0,1183.3 1337.6,1184.5 1339.1,1185.6 1340.7,1185.6 1342.3,1184.5 1343.8,1185.6 1345.4,1185.6 1346.9,1185.6 1348.5,1185.6 1350.1,1186.8 1351.6,1188.0 1353.2,1189.1 1354.8,1188.0 1356.3,1188.0 1357.9,1186.8 1359.5,1186.8 1361.0,1185.6 1362.6,1189.1 1364.2,1188.0 1365.7,1188.0 1367.3,1185.6 1368.9,1183.3 1370.4,1182.2 1372.0,1181.0 1373.5,1182.2 1375.1,1179.9 1376.7,1177.6 1378.2,1175.2 1379.8,1172.9 1381.4,1172.9 1382.9,1169.5 1384.5,1167.2 1386.1,1166.0 1387.6,1166.0 1389.2,1166.0 1390.8,1167.2 1392.3,1164.9 1393.9,1164.9 1395.5,1166.0 1397.0,1166.0 1398.6,1167.2 1400.1,1166.0 1401.7,1163.7 1403.3,1163.7 1404.8,1163.7 1406.4,1162.5 1408.0,1163.7 1409.5,1161.4 1411.1,1161.4 1412.7,1161.4 1414.2,1161.4 1415.8,1162.5 1417.4,1163.7 1418.9,1164.9 1420.5,1166.0 1422.0,1167.2 1423.6,1167.2 1425.2,1168.3 1426.7,1169.5 1428.3,1169.5 1429.9,1169.5 1431.4,1171.8 1433.0,1171.8 1434.6,1171.8 1436.1,1170.6 1437.7,1170.6 1439.3,1169.5 1440.8,1171.8 1442.4,1172.9 1444.0,1172.9 1445.5,1174.1 1447.1,1174.1 1448.6,1172.9 1450.2,1174.1 1451.8,1175.2 1453.3,1176.4 1454.9,1176.4 1456.5,1176.4 1458.0,1178.7 1459.6,1179.9 1461.2,1178.7 1462.7,1178.7 1464.3,1179.9 1465.9,1178.7 1467.4,1179.9 1469.0,1182.2 1470.6,1181.0 1472.1,1181.0 1473.7,1182.2 1475.2,1184.5 1476.8,1182.2 1478.4,1181.0 1479.9,1179.9 1481.5,1182.2 1483.1,1178.7 1484.6,1181.0 1486.2,1178.7 1487.8,1177.6 1489.3,1177.6 1490.9,1177.6 1492.5,1177.6 1494.0,1176.4 1495.6,1176.4 1497.1,1177.6 1498.7,1172.9 1500.3,1172.9 1501.8,1170.6 1503.4,1171.8 1505.0,1168.3 1506.5,1164.9 1508.1,1162.5 1509.7,1161.4 1511.2,1160.2 1512.8,1154.5 1514.4,1152.2 1515.9,1147.5 1517.5,1139.4 1519.1,1134.8 1520.6,1131.4 1522.2,1127.9 1523.7,1123.3 1525.3,1122.1 1526.9,1122.1 1528.4,1119.8 1530.0,1118.7 1531.6,1118.7 1533.1,1118.7 1534.7,1121.0 1536.3,1119.8 1537.8,1121.0 1539.4,1119.8 1541.0,1119.8 1542.5,1123.3 1544.1,1124.4 1545.7,1124.4 1547.2,1124.4 1548.8,1124.4 1550.3,1121.0 1551.9,1122.1 1553.5,1125.6 1555.0,1129.0 1556.6,1129.0 1558.2,1129.0 1559.7,1127.9 1561.3,1129.0 1562.9,1129.0 1564.4,1129.0 1566.0,1131.4 1567.6,1132.5 1569.1,1134.8 1570.7,1136.0 1572.2,1138.3 1573.8,1138.3 1575.4,1138.3 1576.9,1138.3 1578.5,1138.3 1580.1,1140.6 1581.6,1140.6 1583.2,1141.8 1584.8,1141.8 1586.3,1140.6 1587.9,1140.6 1589.5,1141.8 1591.0,1140.6 1592.6,1144.1 1594.2,1142.9 1595.7,1146.4 1597.3,1148.7 1598.8,1146.4 1600.4,1146.4 1602.0,1148.7 1603.5,1149.8 1605.1,1151.0 1606.7,1153.3 1608.2,1155.6 1609.8,1156.8 1611.4,1156.8 1612.9,1157.9 1614.5,1159.1 1616.1,1160.2 1617.6,1159.1 1619.2,1161.4 1620.8,1162.5 1622.3,1164.9 1623.9,1166.0 1625.4,1166.0 1627.0,1168.3 1628.6,1168.3 1630.1,1169.5 1631.7,1170.6 1633.3,1170.6 1634.8,1171.8 1636.4,1171.8 1638.0,1171.8 1639.5,1172.9 1641.1,1174.1 1642.7,1175.2 1644.2,1175.2 1645.8,1176.4 1647.3,1175.2 1648.9,1174.1 1650.5,1175.2 1652.0,1176.4 1653.6,1176.4 1655.2,1177.6 1656.7,1177.6 1658.3,1177.6 1659.9,1177.6 1661.4,1178.7 1663.0,1177.6 1664.6,1178.7 1666.1,1179.9 1667.7,1181.0 1669.3,1179.9 1670.8,1181.0 1672.4,1181.0 1673.9,1181.0 1675.5,1181.0 1677.1,1183.3 1678.6,1183.3 1680.2,1182.2 1681.8,1184.5 1683.3,1184.5 1684.9,1184.5 1686.5,1185.6 1688.0,1185.6 1689.6,1185.6 1691.2,1188.0 1692.7,1188.0 1694.3,1189.1 1695.9,1189.1 1697.4,1190.3 1699.0,1189.1 1700.5,1189.1 1702.1,1188.0 1703.7,1189.1 1705.2,1186.8 1706.8,1188.0 1708.4,1189.1 1709.9,1190.3 1711.5,1191.4 1713.1,1191.4 1714.6,1191.4 1716.2,1193.7 1717.8,1192.6 1719.3,1190.3 1720.9,1193.7 1722.4,1191.4 1724.0,1192.6 1725.6,1186.8 1727.1,1063.2 1728.7,1072.5 1730.3,1092.1 1731.8,1109.4 1733.4,1124.4 1735.0,1139.4 1736.5,1147.5 1738.1,1154.5 1739.7,1154.5 1741.2,1157.9 1742.8,1159.1 1744.4,1162.5 1745.9,1162.5 1747.5,1163.7 1749.0,1167.2 1750.6,1168.3 1752.2,1172.9 1753.7,1176.4 1755.3,1178.7 1756.9,1183.3 1758.4,1188.0 1760.0,1188.0 1761.6,1189.1 1763.1,1189.1 1764.7,1190.3 1766.3,1191.4 1767.8,1191.4 1769.4,1190.3 1771.0,1190.3 1772.5,1191.4 1774.1,1191.4 1775.6,1192.6 1777.2,1192.6 1778.8,1191.4 1780.3,1193.7 1781.9,1193.7 1783.5,1193.7 1785.0,1191.4 1786.6,1191.4 1788.2,1191.4 1789.7,1191.4 1791.3,1190.3 1792.9,1191.4 1794.4,1191.4 1796.0,1190.3 1797.5,1190.3 1799.1,1189.1 1800.7,1188.0 1802.2,1188.0 1803.8,1186.8 1805.4,1184.5 1806.9,1183.3 1808.5,1183.3 1810.1,1184.5 1811.6,1185.6 1813.2,1185.6 1813.2,1233"/>
<polyline fill="none" stroke="#4a86d6" stroke-width="2.3" stroke-linejoin="round" points="567.8,1146.4 569.4,1147.5 570.9,1151.0 572.5,1152.2 574.0,1156.8 575.6,1160.2 577.2,1162.5 578.7,1163.7 580.3,1167.2 581.9,1170.6 583.4,1174.1 585.0,1174.1 586.6,1174.1 588.1,1172.9 589.7,1170.6 591.3,1168.3 592.8,1167.2 594.4,1171.8 595.9,1171.8 597.5,1175.2 599.1,1175.2 600.6,1172.9 602.2,1172.9 603.8,1172.9 605.3,1171.8 606.9,1169.5 608.5,1167.2 610.0,1163.7 611.6,1161.4 613.2,1157.9 614.7,1154.5 616.3,1151.0 617.9,1153.3 619.4,1152.2 621.0,1152.2 622.5,1151.0 624.1,1154.5 625.7,1154.5 627.2,1156.8 628.8,1159.1 630.4,1162.5 631.9,1163.7 633.5,1166.0 635.1,1168.3 636.6,1168.3 638.2,1168.3 639.8,1169.5 641.3,1170.6 642.9,1170.6 644.5,1169.5 646.0,1169.5 647.6,1169.5 649.1,1169.5 650.7,1168.3 652.3,1167.2 653.8,1168.3 655.4,1167.2 657.0,1164.9 658.5,1166.0 660.1,1166.0 661.7,1168.3 663.2,1168.3 664.8,1169.5 666.4,1169.5 667.9,1167.2 669.5,1167.2 671.0,1169.5 672.6,1169.5 674.2,1170.6 675.7,1170.6 677.3,1171.8 678.9,1174.1 680.4,1175.2 682.0,1174.1 683.6,1174.1 685.1,1174.1 686.7,1174.1 688.3,1174.1 689.8,1176.4 691.4,1176.4 693.0,1175.2 694.5,1176.4 696.1,1178.7 697.6,1179.9 699.2,1179.9 700.8,1182.2 702.3,1183.3 703.9,1183.3 705.5,1184.5 707.0,1185.6 708.6,1186.8 710.2,1189.1 711.7,1189.1 713.3,1189.1 714.9,1190.3 716.4,1189.1 718.0,1188.0 719.6,1190.3 721.1,1190.3 722.7,1189.1 724.2,1190.3 725.8,1190.3 727.4,1191.4 728.9,1189.1 730.5,1188.0 732.1,1186.8 733.6,1188.0 735.2,1188.0 736.8,1188.0 738.3,1188.0 739.9,1186.8 741.5,1189.1 743.0,1188.0 744.6,1189.1 746.1,1188.0 747.7,1189.1 749.3,1191.4 750.8,1191.4 752.4,1191.4 754.0,1191.4 755.5,1191.4 757.1,1192.6 758.7,1193.7 760.2,1192.6 761.8,1192.6 763.4,1193.7 764.9,1193.7 766.5,1192.6 768.1,1193.7 769.6,1193.7 771.2,1193.7 772.7,1192.6 774.3,1193.7 775.9,1191.4 777.4,1191.4 779.0,1192.6 780.6,1191.4 782.1,1192.6 783.7,1191.4 785.3,1188.0 786.8,1184.5 788.4,1181.0 790.0,1179.9 791.5,1176.4 793.1,1175.2 794.7,1174.1 796.2,1171.8 797.8,1170.6 799.3,1168.3 800.9,1164.9 802.5,1163.7 804.0,1163.7 805.6,1164.9 807.2,1164.9 808.7,1163.7 810.3,1163.7 811.9,1163.7 813.4,1162.5 815.0,1162.5 816.6,1161.4 818.1,1163.7 819.7,1162.5 821.2,1163.7 822.8,1163.7 824.4,1163.7 825.9,1167.2 827.5,1168.3 829.1,1167.2 830.6,1167.2 832.2,1167.2 833.8,1168.3 835.3,1168.3 836.9,1170.6 838.5,1171.8 840.0,1172.9 841.6,1176.4 843.2,1176.4 844.7,1177.6 846.3,1176.4 847.8,1177.6 849.4,1178.7 851.0,1177.6 852.5,1179.9 854.1,1179.9 855.7,1181.0 857.2,1177.6 858.8,1175.2 860.4,1174.1 861.9,1174.1 863.5,1172.9 865.1,1172.9 866.6,1171.8 868.2,1170.6 869.8,1168.3 871.3,1167.2 872.9,1163.7 874.4,1159.1 876.0,1152.2 877.6,1147.5 879.1,1140.6 880.7,1137.1 882.3,1133.7 883.8,1131.4 885.4,1130.2 887.0,1131.4 888.5,1134.8 890.1,1133.7 891.7,1134.8 893.2,1134.8 894.8,1136.0 896.3,1139.4 897.9,1141.8 899.5,1142.9 901.0,1144.1 902.6,1145.2 904.2,1146.4 905.7,1146.4 907.3,1145.2 908.9,1145.2 910.4,1142.9 912.0,1144.1 913.6,1144.1 915.1,1144.1 916.7,1145.2 918.3,1147.5 919.8,1148.7 921.4,1149.8 922.9,1152.2 924.5,1153.3 926.1,1152.2 927.6,1154.5 929.2,1154.5 930.8,1156.8 932.3,1156.8 933.9,1159.1 935.5,1160.2 937.0,1160.2 938.6,1160.2 940.2,1161.4 941.7,1162.5 943.3,1164.9 944.9,1163.7 946.4,1164.9 948.0,1163.7 949.5,1164.9 951.1,1163.7 952.7,1166.0 954.2,1166.0 955.8,1164.9 957.4,1166.0 958.9,1167.2 960.5,1167.2 962.1,1168.3 963.6,1167.2 965.2,1163.7 966.8,1163.7 968.3,1164.9 969.9,1164.9 971.4,1162.5 973.0,1160.2 974.6,1160.2 976.1,1155.6 977.7,1149.8 979.3,1146.4 980.8,1145.2 982.4,1144.1 984.0,1146.4 985.5,1146.4 987.1,1148.7 988.7,1147.5 990.2,1147.5 991.8,1147.5 993.4,1146.4 994.9,1147.5 996.5,1148.7 998.0,1148.7 999.6,1147.5 1001.2,1148.7 1002.7,1146.4 1004.3,1142.9 1005.9,1140.6 1007.4,1134.8 1009.0,1134.8 1010.6,1133.7 1012.1,1130.2 1013.7,1127.9 1015.3,1125.6 1016.8,1123.3 1018.4,1121.0 1020.0,1117.5 1021.5,1117.5 1023.1,1114.0 1024.6,1111.7 1026.2,1108.3 1027.8,1110.6 1029.3,1112.9 1030.9,1114.0 1032.5,1114.0 1034.0,1115.2 1035.6,1117.5 1037.2,1118.7 1038.7,1121.0 1040.3,1127.9 1041.9,1130.2 1043.4,1131.4 1045.0,1134.8 1046.5,1138.3 1048.1,1140.6 1049.7,1142.9 1051.2,1144.1 1052.8,1146.4 1054.4,1147.5 1055.9,1148.7 1057.5,1148.7 1059.1,1149.8 1060.6,1148.7 1062.2,1149.8 1063.8,1148.7 1065.3,1147.5 1066.9,1148.7 1068.5,1148.7 1070.0,1148.7 1071.6,1149.8 1073.1,1149.8 1074.7,1151.0 1076.3,1149.8 1077.8,1152.2 1079.4,1151.0 1081.0,1152.2 1082.5,1153.3 1084.1,1153.3 1085.7,1154.5 1087.2,1153.3 1088.8,1153.3 1090.4,1149.8 1091.9,1149.8 1093.5,1152.2 1095.1,1152.2 1096.6,1154.5 1098.2,1153.3 1099.7,1153.3 1101.3,1154.5 1102.9,1156.8 1104.4,1157.9 1106.0,1156.8 1107.6,1157.9 1109.1,1160.2 1110.7,1160.2 1112.3,1160.2 1113.8,1161.4 1115.4,1162.5 1117.0,1163.7 1118.5,1164.9 1120.1,1166.0 1121.6,1167.2 1123.2,1167.2 1124.8,1168.3 1126.3,1168.3 1127.9,1168.3 1129.5,1167.2 1131.0,1169.5 1132.6,1170.6 1134.2,1170.6 1135.7,1170.6 1137.3,1170.6 1138.9,1171.8 1140.4,1172.9 1142.0,1175.2 1143.6,1175.2 1145.1,1174.1 1146.7,1172.9 1148.2,1172.9 1149.8,1171.8 1151.4,1171.8 1152.9,1170.6 1154.5,1171.8 1156.1,1170.6 1157.6,1171.8 1159.2,1172.9 1160.8,1170.6 1162.3,1172.9 1163.9,1171.8 1165.5,1171.8 1167.0,1171.8 1168.6,1171.8 1170.2,1169.5 1171.7,1167.2 1173.3,1166.0 1174.8,1164.9 1176.4,1161.4 1178.0,1160.2 1179.5,1157.9 1181.1,1155.6 1182.7,1153.3 1184.2,1153.3 1185.8,1154.5 1187.4,1153.3 1188.9,1152.2 1190.5,1151.0 1192.1,1149.8 1193.6,1151.0 1195.2,1149.8 1196.7,1148.7 1198.3,1149.8 1199.9,1147.5 1201.4,1147.5 1203.0,1145.2 1204.6,1145.2 1206.1,1144.1 1207.7,1144.1 1209.3,1144.1 1210.8,1145.2 1212.4,1146.4 1214.0,1148.7 1215.5,1151.0 1217.1,1149.8 1218.7,1151.0 1220.2,1151.0 1221.8,1149.8 1223.3,1152.2 1224.9,1154.5 1226.5,1154.5 1228.0,1155.6 1229.6,1156.8 1231.2,1155.6 1232.7,1155.6 1234.3,1157.9 1235.9,1156.8 1237.4,1156.8 1239.0,1159.1 1240.6,1161.4 1242.1,1162.5 1243.7,1163.7 1245.3,1163.7 1246.8,1164.9 1248.4,1164.9 1249.9,1166.0 1251.5,1167.2 1253.1,1167.2 1254.6,1169.5 1256.2,1169.5 1257.8,1169.5 1259.3,1169.5 1260.9,1168.3 1262.5,1168.3 1264.0,1169.5 1265.6,1167.2 1267.2,1167.2 1268.7,1168.3 1270.3,1167.2 1271.8,1167.2 1273.4,1168.3 1275.0,1170.6 1276.5,1170.6 1278.1,1170.6 1279.7,1171.8 1281.2,1171.8 1282.8,1170.6 1284.4,1172.9 1285.9,1174.1 1287.5,1170.6 1289.1,1171.8 1290.6,1172.9 1292.2,1172.9 1293.8,1172.9 1295.3,1175.2 1296.9,1175.2 1298.4,1176.4 1300.0,1177.6 1301.6,1177.6 1303.1,1177.6 1304.7,1178.7 1306.3,1178.7 1307.8,1178.7 1309.4,1177.6 1311.0,1179.9 1312.5,1178.7 1314.1,1179.9 1315.7,1181.0 1317.2,1179.9 1318.8,1179.9 1320.4,1179.9 1321.9,1179.9 1323.5,1181.0 1325.0,1182.2 1326.6,1181.0 1328.2,1182.2 1329.7,1181.0 1331.3,1182.2 1332.9,1182.2 1334.4,1182.2 1336.0,1183.3 1337.6,1184.5 1339.1,1185.6 1340.7,1185.6 1342.3,1184.5 1343.8,1185.6 1345.4,1185.6 1346.9,1185.6 1348.5,1185.6 1350.1,1186.8 1351.6,1188.0 1353.2,1189.1 1354.8,1188.0 1356.3,1188.0 1357.9,1186.8 1359.5,1186.8 1361.0,1185.6 1362.6,1189.1 1364.2,1188.0 1365.7,1188.0 1367.3,1185.6 1368.9,1183.3 1370.4,1182.2 1372.0,1181.0 1373.5,1182.2 1375.1,1179.9 1376.7,1177.6 1378.2,1175.2 1379.8,1172.9 1381.4,1172.9 1382.9,1169.5 1384.5,1167.2 1386.1,1166.0 1387.6,1166.0 1389.2,1166.0 1390.8,1167.2 1392.3,1164.9 1393.9,1164.9 1395.5,1166.0 1397.0,1166.0 1398.6,1167.2 1400.1,1166.0 1401.7,1163.7 1403.3,1163.7 1404.8,1163.7 1406.4,1162.5 1408.0,1163.7 1409.5,1161.4 1411.1,1161.4 1412.7,1161.4 1414.2,1161.4 1415.8,1162.5 1417.4,1163.7 1418.9,1164.9 1420.5,1166.0 1422.0,1167.2 1423.6,1167.2 1425.2,1168.3 1426.7,1169.5 1428.3,1169.5 1429.9,1169.5 1431.4,1171.8 1433.0,1171.8 1434.6,1171.8 1436.1,1170.6 1437.7,1170.6 1439.3,1169.5 1440.8,1171.8 1442.4,1172.9 1444.0,1172.9 1445.5,1174.1 1447.1,1174.1 1448.6,1172.9 1450.2,1174.1 1451.8,1175.2 1453.3,1176.4 1454.9,1176.4 1456.5,1176.4 1458.0,1178.7 1459.6,1179.9 1461.2,1178.7 1462.7,1178.7 1464.3,1179.9 1465.9,1178.7 1467.4,1179.9 1469.0,1182.2 1470.6,1181.0 1472.1,1181.0 1473.7,1182.2 1475.2,1184.5 1476.8,1182.2 1478.4,1181.0 1479.9,1179.9 1481.5,1182.2 1483.1,1178.7 1484.6,1181.0 1486.2,1178.7 1487.8,1177.6 1489.3,1177.6 1490.9,1177.6 1492.5,1177.6 1494.0,1176.4 1495.6,1176.4 1497.1,1177.6 1498.7,1172.9 1500.3,1172.9 1501.8,1170.6 1503.4,1171.8 1505.0,1168.3 1506.5,1164.9 1508.1,1162.5 1509.7,1161.4 1511.2,1160.2 1512.8,1154.5 1514.4,1152.2 1515.9,1147.5 1517.5,1139.4 1519.1,1134.8 1520.6,1131.4 1522.2,1127.9 1523.7,1123.3 1525.3,1122.1 1526.9,1122.1 1528.4,1119.8 1530.0,1118.7 1531.6,1118.7 1533.1,1118.7 1534.7,1121.0 1536.3,1119.8 1537.8,1121.0 1539.4,1119.8 1541.0,1119.8 1542.5,1123.3 1544.1,1124.4 1545.7,1124.4 1547.2,1124.4 1548.8,1124.4 1550.3,1121.0 1551.9,1122.1 1553.5,1125.6 1555.0,1129.0 1556.6,1129.0 1558.2,1129.0 1559.7,1127.9 1561.3,1129.0 1562.9,1129.0 1564.4,1129.0 1566.0,1131.4 1567.6,1132.5 1569.1,1134.8 1570.7,1136.0 1572.2,1138.3 1573.8,1138.3 1575.4,1138.3 1576.9,1138.3 1578.5,1138.3 1580.1,1140.6 1581.6,1140.6 1583.2,1141.8 1584.8,1141.8 1586.3,1140.6 1587.9,1140.6 1589.5,1141.8 1591.0,1140.6 1592.6,1144.1 1594.2,1142.9 1595.7,1146.4 1597.3,1148.7 1598.8,1146.4 1600.4,1146.4 1602.0,1148.7 1603.5,1149.8 1605.1,1151.0 1606.7,1153.3 1608.2,1155.6 1609.8,1156.8 1611.4,1156.8 1612.9,1157.9 1614.5,1159.1 1616.1,1160.2 1617.6,1159.1 1619.2,1161.4 1620.8,1162.5 1622.3,1164.9 1623.9,1166.0 1625.4,1166.0 1627.0,1168.3 1628.6,1168.3 1630.1,1169.5 1631.7,1170.6 1633.3,1170.6 1634.8,1171.8 1636.4,1171.8 1638.0,1171.8 1639.5,1172.9 1641.1,1174.1 1642.7,1175.2 1644.2,1175.2 1645.8,1176.4 1647.3,1175.2 1648.9,1174.1 1650.5,1175.2 1652.0,1176.4 1653.6,1176.4 1655.2,1177.6 1656.7,1177.6 1658.3,1177.6 1659.9,1177.6 1661.4,1178.7 1663.0,1177.6 1664.6,1178.7 1666.1,1179.9 1667.7,1181.0 1669.3,1179.9 1670.8,1181.0 1672.4,1181.0 1673.9,1181.0 1675.5,1181.0 1677.1,1183.3 1678.6,1183.3 1680.2,1182.2 1681.8,1184.5 1683.3,1184.5 1684.9,1184.5 1686.5,1185.6 1688.0,1185.6 1689.6,1185.6 1691.2,1188.0 1692.7,1188.0 1694.3,1189.1 1695.9,1189.1 1697.4,1190.3 1699.0,1189.1 1700.5,1189.1 1702.1,1188.0 1703.7,1189.1 1705.2,1186.8 1706.8,1188.0 1708.4,1189.1 1709.9,1190.3 1711.5,1191.4 1713.1,1191.4 1714.6,1191.4 1716.2,1193.7 1717.8,1192.6 1719.3,1190.3 1720.9,1193.7 1722.4,1191.4 1724.0,1192.6 1725.6,1186.8 1727.1,1063.2 1728.7,1072.5 1730.3,1092.1 1731.8,1109.4 1733.4,1124.4 1735.0,1139.4 1736.5,1147.5 1738.1,1154.5 1739.7,1154.5 1741.2,1157.9 1742.8,1159.1 1744.4,1162.5 1745.9,1162.5 1747.5,1163.7 1749.0,1167.2 1750.6,1168.3 1752.2,1172.9 1753.7,1176.4 1755.3,1178.7 1756.9,1183.3 1758.4,1188.0 1760.0,1188.0 1761.6,1189.1 1763.1,1189.1 1764.7,1190.3 1766.3,1191.4 1767.8,1191.4 1769.4,1190.3 1771.0,1190.3 1772.5,1191.4 1774.1,1191.4 1775.6,1192.6 1777.2,1192.6 1778.8,1191.4 1780.3,1193.7 1781.9,1193.7 1783.5,1193.7 1785.0,1191.4 1786.6,1191.4 1788.2,1191.4 1789.7,1191.4 1791.3,1190.3 1792.9,1191.4 1794.4,1191.4 1796.0,1190.3 1797.5,1190.3 1799.1,1189.1 1800.7,1188.0 1802.2,1188.0 1803.8,1186.8 1805.4,1184.5 1806.9,1183.3 1808.5,1183.3 1810.1,1184.5 1811.6,1185.6 1813.2,1185.6"/>
<line x1="567.0" x2="1814.75" y1="1062.7" y2="1062.7" stroke="#5b8fd9" stroke-width="1.5" stroke-dasharray="6.2 5"/>
<line x1="567.0" x2="1814.75" y1="1164.4" y2="1164.4" stroke="#5b8fd9" stroke-width="1.5" stroke-dasharray="6.2 5"/>
<line x1="567.0" x2="1814.75" y1="1193.0" y2="1193.0" stroke="#5b8fd9" stroke-width="1.5" stroke-dasharray="6.2 5"/>
</g>
<rect x="567.0" y="438.75" width="1247.75" height="210.5" fill="none" stroke="#e6e6e6" stroke-width="1.6"/>
<rect x="567.0" y="720.0" width="1247.75" height="210.0" fill="none" stroke="#e6e6e6" stroke-width="1.6"/>
<rect x="567.0" y="1002.0" width="1247.75" height="231.0" fill="none" stroke="#e6e6e6" stroke-width="1.6"/>
<circle cx="592.75" cy="388.75" r="5.3" fill="#6a35d0"/>
<circle cx="592.75" cy="416.75" r="5.3" fill="#ffa366"/>
<circle cx="592.75" cy="698.25" r="5.3" fill="#5c2a55"/>
<circle cx="592.75" cy="979.5" r="5.3" fill="#4e8ad9"/>
</svg>
<svg class="flags" width="2048" height="1428" viewBox="0 0 2048 1428">
<polygon fill="#ffa366" points="1814.75,571.88 1826,558.75 1891.75,558.75 1891.75,585 1826,585"/>
<polygon fill="#6633cc" points="1814.75,599.12 1826,586.25 1891.75,586.25 1891.75,612 1826,612"/>
<polygon fill="#5c2a55" points="1814.75,776.12 1826,763 1903,763 1903,789.25 1826,789.25"/>
<polygon fill="#5b8fd9" points="1814.75,1164.38 1826,1151.25 1934.75,1151.25 1934.75,1177.5 1826,1177.5"/>
<polygon fill="#5b8fd9" points="1814.75,1191.88 1826,1178.75 1891.75,1178.75 1891.75,1205 1826,1205"/>
</svg>
<!-- icons -->
<svg class="icons" width="2048" height="1428" viewBox="0 0 2048 1428" fill="none" stroke-linecap="butt">
<g fill="#1c8df2"><polygon points="67.6,18.6 76.1,18.6 79.3,25.4 76.6,30.6"/><polygon points="88.9,18.6 94.8,18.6 85.75,36.4 85.75,45.9 78.25,45.9 78.4,37"/></g>
<g fill="#1c8df2" transform="translate(1814.5,1354.5) scale(0.545) translate(-67.6,-18.6)"><polygon points="67.6,18.6 76.1,18.6 79.3,25.4 76.6,30.6"/><polygon points="88.9,18.6 94.8,18.6 85.75,36.4 85.75,45.9 78.25,45.9 78.4,37"/></g>
<g stroke="#7a7a7a" stroke-width="2"><circle cx="1185" cy="31" r="6.2"/><line x1="1189.6" y1="35.6" x2="1195" y2="41" stroke-linecap="round"/></g>
<g stroke="#18b818" stroke-width="2.3" stroke-linejoin="miter"><path d="M1673.2,19.2 H1699.8 V38.5 H1683.8 L1677.4,45.3 V38.5 H1673.2 Z"/></g>
<g fill="#18b818"><circle cx="1680.4" cy="29.1" r="1.9"/><circle cx="1686.4" cy="29.1" r="1.9"/><circle cx="1692.3" cy="29.1" r="1.9"/></g>
<g stroke="#adadad" stroke-width="2.1" stroke-linejoin="round"><rect x="1731.4" y="23.4" width="5.6" height="9.6" rx="1.5"/><path d="M1737,22 H1745 V34.2 H1737"/><path d="M1745,22 L1756.6,14.6 V40.6 L1745,34.2"/><path d="M1738.4,34.4 L1734.9,41.6 L1739.4,43.8 L1743,35.4"/></g>
<circle cx="1799.8" cy="32.5" r="13.4" stroke="#a2a2a2" stroke-width="2.2"/>
<circle cx="1817.5" cy="20.1" r="12.1" fill="#e0252f"/>
<circle cx="1857.3" cy="32.5" r="15" fill="#a0a0a0"/>
<g stroke="#1f1f1f" stroke-width="1.9" fill="#a0a0a0"><path d="M1848.6,42.4 Q1850,38.6 1854.6,36.6 M1866,42.4 Q1864.6,38.6 1860,36.6" fill="none"/><ellipse cx="1857.3" cy="29.6" rx="5.5" ry="7.1"/></g>
<g stroke="#484848" stroke-width="2.2" stroke-linejoin="miter"><path d="M1600.8,103.2 H1594.3 V116 H1609.3 V109.6"/><path d="M1602.8,100.3 H1611.5 V108.2"/><path d="M1611,100.8 L1600.6,110.6"/></g>
<polygon fill="#484848" points="1700.25,105 1709.25,105 1704.75,111.25"/>
<polygon fill="#484848" points="1826,105 1835.25,105 1830.625,111.25"/>
<g stroke="#484848" stroke-width="2"><circle cx="1744.6" cy="102.6" r="2.4"/><circle cx="1735.6" cy="108.2" r="2.4"/><circle cx="1744.6" cy="113.8" r="2.4"/><path d="M1737.7,106.9 L1742.5,103.9 M1737.7,109.5 L1742.5,112.5"/></g>
<path d="M1872.9,107.2 A6.7,6.7 0 1 1 1866.2,102.2" stroke="#484848" stroke-width="2.2"/><polygon fill="#484848" points="1866.2,98.4 1866.2,107 1872.6,103.4"/>
<polygon fill="#1a1a1a" points="465.5,106.25 474.25,106.25 469.875,111.4"/>
<polygon fill="#1a1a1a" points="980.75,192 990,192 985.375,198.75"/>
<polygon fill="#333" points="1468.25,254.5 1477.25,254.5 1472.75,260.75"/>
<polygon fill="#333" points="1929,312.5 1938.5,312.5 1933.75,318.75"/>
<g stroke="#6a6a6a" stroke-width="2"><path d="M474.3,179.3 L480.75,172.8 L487.2,179.3"/><path d="M474.3,186.6 L480.75,180.1 L487.2,186.6"/></g>
<rect x="96" y="323.10" width="13.8" height="13.6" fill="#0d80e8"/>
<path d="M99.3,330.30 L101.9,333.00 L106.6,327.00" stroke="#fff" stroke-width="1.7"/>
<g fill="#7c7c7c"><polygon points="461.9,327.15 467.9,327.15 464.9,322.65"/><polygon points="461.9,333.35 467.9,333.35 464.9,337.85"/><rect x="458" y="329.50" width="13.8" height="1.5"/></g>
<path d="M485.5,324.85 L498.70000000000005,337.65 M498.70000000000005,324.85 L485.5,337.65" stroke="#6e6e6e" stroke-width="1.7"/>
<rect x="96" y="370.25" width="13.8" height="13.6" fill="#0d80e8"/>
<path d="M99.3,377.45 L101.9,380.15 L106.6,374.15" stroke="#fff" stroke-width="1.7"/>
<g fill="#7c7c7c"><polygon points="461.9,374.30 467.9,374.30 464.9,369.80"/><polygon points="461.9,380.50 467.9,380.50 464.9,385.00"/><rect x="458" y="376.65" width="13.8" height="1.5"/></g>
<path d="M485.5,372.00 L498.70000000000005,384.80 M498.70000000000005,372.00 L485.5,384.80" stroke="#6e6e6e" stroke-width="1.7"/>
<rect x="96" y="417.75" width="13.8" height="13.6" fill="#0d80e8"/>
<path d="M99.3,424.95 L101.9,427.65 L106.6,421.65" stroke="#fff" stroke-width="1.7"/>
<g fill="#7c7c7c"><polygon points="461.9,421.80 467.9,421.80 464.9,417.30"/><polygon points="461.9,428.00 467.9,428.00 464.9,432.50"/><rect x="458" y="424.15" width="13.8" height="1.5"/></g>
<path d="M485.5,419.50 L498.70000000000005,432.30 M498.70000000000005,419.50 L485.5,432.30" stroke="#6e6e6e" stroke-width="1.7"/>
<rect x="96" y="465.25" width="13.8" height="13.6" fill="#0d80e8"/>
<path d="M99.3,472.45 L101.9,475.15 L106.6,469.15" stroke="#fff" stroke-width="1.7"/>
<g fill="#7c7c7c"><polygon points="461.9,469.30 467.9,469.30 464.9,464.80"/><polygon points="461.9,475.50 467.9,475.50 464.9,480.00"/><rect x="458" y="471.65" width="13.8" height="1.5"/></g>
<path d="M485.5,467.00 L498.70000000000005,479.80 M498.70000000000005,467.00 L485.5,479.80" stroke="#6e6e6e" stroke-width="1.7"/>
<g stroke="#484848" stroke-width="2" stroke-linejoin="round" stroke-linecap="round"><path d="M391,592.3 H383.5 V577.4 H388.6 L392,580.2 H400.2 V583.6"/><circle cx="396.7" cy="589.4" r="2.9"/><path d="M398.9,591.6 L401.4,594.3"/></g>
<rect x="416.3" y="662.0" width="2.4" height="2.2" fill="#4a4a4a"/><rect x="421.6" y="662.0" width="10.4" height="2.2" fill="#4a4a4a"/>
<rect x="416.3" y="667.3" width="2.4" height="2.2" fill="#4a4a4a"/><rect x="421.6" y="667.3" width="10.4" height="2.2" fill="#4a4a4a"/>
<rect x="416.3" y="672.6" width="2.4" height="2.2" fill="#4a4a4a"/><rect x="421.6" y="672.6" width="10.4" height="2.2" fill="#4a4a4a"/>
<circle cx="105.6" cy="775.25" r="8.9" fill="#fff" stroke="#c6c6c6" stroke-width="1.4"/>
<circle cx="105.6" cy="775.25" r="5.3" fill="#0d80e8"/>
<circle cx="105.6" cy="810.9" r="8.9" fill="#fff" stroke="#c6c6c6" stroke-width="1.4"/>
<circle cx="105.6" cy="846.9" r="8.9" fill="#fff" stroke="#c6c6c6" stroke-width="1.4"/>
<circle cx="105.6" cy="882.6" r="8.9" fill="#fff" stroke="#c6c6c6" stroke-width="1.4"/>
<circle cx="105.6" cy="986.4" r="8.9" fill="#fff" stroke="#c6c6c6" stroke-width="1.4"/>
<circle cx="105.6" cy="986.4" r="5.3" fill="#0d80e8"/>
<circle cx="105.6" cy="1024.9" r="8.9" fill="#fff" stroke="#c6c6c6" stroke-width="1.4"/>
<circle cx="105.6" cy="1063.4" r="8.9" fill="#fff" stroke="#c6c6c6" stroke-width="1.4"/>
<circle cx="345.4" cy="1135.1" r="8.7" fill="#fff" stroke="#8a8a8a" stroke-width="1.2"/>
<path d="M395,1137.3 H407 M401,1131.3 V1143.3" stroke="#4a4a4a" stroke-width="1.9"/>
<path d="M1362.3,309.5 L1376.3,322.4 M1376.3,309.5 L1362.3,322.4" stroke="#7a7a7a" stroke-width="1.7"/>
<g stroke="#444" stroke-width="2" stroke-linejoin="miter" stroke-linecap="butt"><path d="M1855.3,255.2 V249.6 H1860.9 M1855.6,249.9 L1861.4,255.7"/><path d="M1871.3,255.2 V249.6 H1865.7 M1871,249.9 L1865.2,255.7"/><path d="M1855.3,259.6 V265.3 H1860.9 M1855.6,265 L1861.4,259.2"/><path d="M1871.3,259.6 V265.3 H1865.7 M1871,265 L1865.2,259.2"/></g>
<g stroke="#3c3c3c" stroke-width="2.1" fill="none"><path d="M1915.4,256.2 Q1925.8,241.6 1936.4,256.2 Q1934.6,258.9 1932.3,260.7 M1928.6,262.8 Q1921.5,265.4 1915.4,256.2"/><path d="M1926.2,251.9 A4.3,4.3 0 0 1 1930,257.4" stroke-width="1.7"/><circle cx="1924.6" cy="257.3" r="2.5" fill="#3c3c3c" stroke="none"/><path d="M1915.7,248 L1934.7,266.9" stroke-width="2.2"/></g>
</svg>
<!-- text -->
<div class="tl" style="z-index:1">
<span class="t" style="left:1825.25px;top:756px;font-size:17.94px;line-height:20px;color:#6b6b6b;transform:scaleX(0.9215);z-index:1">30.00T</span>
</div>
<div class="tl" style="z-index:4">
<span class="t" style="left:331.18px;top:22px;font-size:19.11px;line-height:21px;color:#cfcfcf;transform:scaleX(0.8192);font-weight:700;">DATA</span>
<span class="t" style="left:417.00px;top:22px;font-size:19.11px;line-height:21px;color:#cfcfcf;transform:scaleX(0.7918);font-weight:700;">TOOLS</span>
<span class="t" style="left:512.00px;top:22px;font-size:19.11px;line-height:21px;color:#cfcfcf;transform:scaleX(0.7956);font-weight:700;">SUPPORT</span>
<span class="t" style="left:854.85px;top:22px;font-size:18.82px;line-height:21px;color:#8a8a8a;transform:scaleX(0.9038);">Press / to search</span>
<span class="t" style="left:1899.75px;top:22px;font-size:19.11px;line-height:21px;color:#dcdcdc;transform:scaleX(0.8125);font-weight:700;">Cameron</span>
<span class="t" style="left:1814.30px;top:11px;font-size:15.31px;line-height:17px;color:#fff;transform:scaleX(0.8625);font-weight:700;">3</span>
<span class="t" style="left:81.15px;top:93px;font-size:26.13px;line-height:30px;color:#1a1a1a;transform:scaleX(0.8523);font-weight:700;">New Fundamental Chart</span>
<span class="t" style="left:348.35px;top:93px;font-size:26.13px;line-height:30px;color:#0d80e8;transform:scaleX(0.9020);">(unsaved)</span>
<span class="t" style="left:1626.92px;top:98px;font-size:18.14px;line-height:20px;color:#484848;transform:scaleX(0.8270);font-weight:700;">EXPORT</span>
<span class="t" style="left:1763.00px;top:98px;font-size:18.14px;line-height:20px;color:#484848;transform:scaleX(0.8247);font-weight:700;">SHARE</span>
<span class="t" style="left:1885.18px;top:98px;font-size:18.14px;line-height:20px;color:#484848;transform:scaleX(0.8231);font-weight:700;">RESET ALL</span>
<span class="t" style="left:165.44px;top:165px;font-size:19.7px;line-height:22px;color:#0d80e8;transform:scaleX(0.8150);font-weight:700;">Input</span>
<span class="t" style="left:330.50px;top:165px;font-size:19.7px;line-height:22px;color:#4a4a4a;transform:scaleX(0.7937);font-weight:700;">Annotate</span>
<span class="t" style="left:96.50px;top:214px;font-size:18.72px;line-height:21px;color:#1c1c1c;transform:scaleX(0.8483);font-weight:700;">Securities</span>
<span class="t" style="left:176.61px;top:214px;font-size:18.72px;line-height:21px;color:#333;transform:scaleX(0.8900);">(?)</span>
<span class="t" style="left:110.75px;top:262px;font-size:17.16px;line-height:20px;color:#9a9a9a;transform:scaleX(0.8687);">Search</span>
<span class="t" style="left:450.00px;top:263px;font-size:16.38px;line-height:18px;color:#3a3a3a;transform:scaleX(0.8420);font-weight:700;">ADD</span>
<span class="t" style="left:124.20px;top:319px;font-size:19.11px;line-height:21px;color:#262626;transform:scaleX(0.8011);">US GDP (I:USGDP)</span>
<span class="t" style="left:124.15px;top:366px;font-size:19.11px;line-height:21px;color:#262626;transform:scaleX(0.8475);">US Inflation Rate (I:USIR)</span>
<span class="t" style="left:124.16px;top:414px;font-size:19.11px;line-height:21px;color:#262626;transform:scaleX(0.8366);">US Unemployment Rate (I:USUR)</span>
<span class="t" style="left:124.15px;top:461px;font-size:19.11px;line-height:21px;color:#262626;transform:scaleX(0.8454);">Effective Federal Funds Rate (I:EFFRND)</span>
<span class="t" style="left:95.64px;top:527px;font-size:18.72px;line-height:21px;color:#1c1c1c;transform:scaleX(0.8630);font-weight:700;">Financial Metrics</span>
<span class="t" style="left:110.75px;top:575px;font-size:17.16px;line-height:20px;color:#9a9a9a;transform:scaleX(0.8687);">Search</span>
<span class="t" style="left:305.50px;top:576px;font-size:16.38px;line-height:18px;color:#3a3a3a;transform:scaleX(0.8490);font-weight:700;">ADD</span>
<span class="t" style="left:411.18px;top:576px;font-size:17.36px;line-height:20px;color:#4a4a4a;transform:scaleX(0.8231);font-weight:700;">BROWSE</span>
<span class="t" style="left:95.67px;top:657px;font-size:18.72px;line-height:21px;color:#1c1c1c;transform:scaleX(0.8348);font-weight:700;">List Browser</span>
<span class="t" style="left:195.41px;top:657px;font-size:18.72px;line-height:21px;color:#333;transform:scaleX(0.8437);">(?)</span>
<span class="t" style="left:441.13px;top:658px;font-size:17.36px;line-height:20px;color:#4a4a4a;transform:scaleX(0.8715);font-weight:700;">LIST</span>
<span class="t" style="left:95.66px;top:723px;font-size:18.72px;line-height:21px;color:#1c1c1c;transform:scaleX(0.8434);font-weight:700;">Data Format</span>
<span class="t" style="left:192.38px;top:723px;font-size:18.72px;line-height:21px;color:#333;transform:scaleX(0.8668);">(?)</span>
<span class="t" style="left:125.00px;top:765px;font-size:19.11px;line-height:21px;color:#262626;transform:scaleX(0.8647);">Original (Unchanged)</span>
<span class="t" style="left:124.14px;top:800px;font-size:19.11px;line-height:21px;color:#262626;transform:scaleX(0.8578);">Normalized (% Change)</span>
<span class="t" style="left:125.00px;top:836px;font-size:19.11px;line-height:21px;color:#262626;transform:scaleX(0.8735);">Growth (Custom)</span>
<span class="t" style="left:124.12px;top:872px;font-size:19.11px;line-height:21px;color:#262626;transform:scaleX(0.8831);">Percent Off High</span>
<span class="t" style="left:95.66px;top:935px;font-size:18.72px;line-height:21px;color:#1c1c1c;transform:scaleX(0.8444);font-weight:700;">Panel Layout</span>
<span class="t" style="left:125.00px;top:975px;font-size:19.11px;line-height:21px;color:#262626;transform:scaleX(0.8604);">Single Panel</span>
<span class="t" style="left:124.12px;top:1014px;font-size:19.11px;line-height:21px;color:#262626;transform:scaleX(0.8770);">Panel per Financial Metric</span>
<span class="t" style="left:124.14px;top:1053px;font-size:19.11px;line-height:21px;color:#262626;transform:scaleX(0.8629);">Panel per Security</span>
<span class="t" style="left:95.64px;top:1125px;font-size:18.72px;line-height:21px;color:#1c1c1c;transform:scaleX(0.8573);font-weight:700;">Ratios / Spreads / Correlations</span>
<span class="t" style="left:342.30px;top:1128px;font-size:13.65px;line-height:15px;color:#222;transform:scaleX(0.7875);font-weight:700;">?</span>
<span class="t" style="left:417.50px;top:1127px;font-size:17.36px;line-height:20px;color:#4a4a4a;transform:scaleX(0.8273);font-weight:700;">CREATE</span>
<span class="t" style="left:563.75px;top:186px;font-size:17.36px;line-height:20px;color:#1a1a1a;transform:scaleX(0.8612);font-weight:700;">CHART OPTIONS</span>
<span class="t" style="left:1680.16px;top:186px;font-size:17.74px;line-height:20px;color:#4a4a4a;transform:scaleX(0.8386);">PRESENTATION VIEW</span>
<span class="t" style="left:1864.75px;top:188px;font-size:16.38px;line-height:18px;color:#999;transform:scaleX(0.8558);font-weight:700;">OFF</span>
<span class="t" style="left:1916.00px;top:188px;font-size:16.38px;line-height:18px;color:#fff;transform:scaleX(0.9168);font-weight:700;">ON</span>
<span class="t" style="left:574.90px;top:249px;font-size:17.36px;line-height:20px;color:#262626;transform:scaleX(0.8473);">1D</span>
<span class="t" style="left:642.75px;top:249px;font-size:17.36px;line-height:20px;color:#262626;transform:scaleX(0.7966);">5D</span>
<span class="t" style="left:708.62px;top:249px;font-size:17.36px;line-height:20px;color:#262626;transform:scaleX(0.8828);">1M</span>
<span class="t" style="left:779.00px;top:249px;font-size:17.36px;line-height:20px;color:#262626;transform:scaleX(0.8666);">3M</span>
<span class="t" style="left:848.75px;top:249px;font-size:17.36px;line-height:20px;color:#262626;transform:scaleX(0.8561);">6M</span>
<span class="t" style="left:918.25px;top:249px;font-size:17.36px;line-height:20px;color:#262626;transform:scaleX(0.8045);">YTD</span>
<span class="t" style="left:994.20px;top:249px;font-size:17.36px;line-height:20px;color:#262626;transform:scaleX(0.7989);">1Y</span>
<span class="t" style="left:1061.00px;top:249px;font-size:17.36px;line-height:20px;color:#262626;transform:scaleX(0.7389);">3Y</span>
<span class="t" style="left:1127.00px;top:249px;font-size:17.36px;line-height:20px;color:#262626;transform:scaleX(0.7504);">5Y</span>
<span class="t" style="left:1191.94px;top:249px;font-size:17.36px;line-height:20px;color:#262626;transform:scaleX(0.8083);">10Y</span>
<span class="t" style="left:1265.64px;top:249px;font-size:17.36px;line-height:20px;color:#262626;transform:scaleX(0.8572);">MAX</span>
<span class="t" style="left:1360.67px;top:248px;font-size:18.14px;line-height:20px;color:#262626;transform:scaleX(0.8341);">DATE RANGE</span>
<span class="t" style="left:1538.00px;top:248px;font-size:17.36px;line-height:20px;color:#262626;transform:scaleX(0.9423);">07/01/1958</span>
<span class="t" style="left:1693.12px;top:248px;font-size:17.36px;line-height:20px;color:#9a9a9a;transform:scaleX(0.8800);">MM/DD/YYYY</span>
<span class="t" style="left:550.75px;top:305px;font-size:18.14px;line-height:20px;color:#4a4a4a;transform:scaleX(0.8222);">TITLE</span>
<span class="t" style="left:619.34px;top:305px;font-size:17.36px;line-height:20px;color:#8c8c8c;transform:scaleX(0.9081);">Enter Title</span>
<span class="t" style="left:926.25px;top:307px;font-size:16.38px;line-height:18px;color:#3a3a3a;transform:scaleX(0.8884);font-weight:700;">UPDATE</span>
<span class="t" style="left:1026.19px;top:305px;font-size:18.14px;line-height:20px;color:#4a4a4a;transform:scaleX(0.8069);">NOTES</span>
<span class="t" style="left:1106.00px;top:305px;font-size:17.36px;line-height:20px;color:#262626;transform:scaleX(0.8461);">Gray = US Recessions</span>
<span class="t" style="left:1402.75px;top:307px;font-size:16.38px;line-height:18px;color:#3a3a3a;transform:scaleX(0.8884);font-weight:700;">UPDATE</span>
<span class="t" style="left:1516.50px;top:306px;font-size:17.74px;line-height:20px;color:#262626;transform:scaleX(0.9329);">Chart Sizes: Very Large (2000 px wide)</span>
<span class="t" style="left:612.36px;top:378px;font-size:19.11px;line-height:21px;color:#262626;transform:scaleX(0.8927);">US Inflation Rate</span>
<span class="t" style="left:612.36px;top:405px;font-size:19.11px;line-height:21px;color:#262626;transform:scaleX(0.8910);">Effective Federal Funds Rate</span>
<span class="t" style="left:612.43px;top:687px;font-size:19.11px;line-height:21px;color:#262626;transform:scaleX(0.8215);">US GDP</span>
<span class="t" style="left:612.37px;top:969px;font-size:19.11px;line-height:21px;color:#262626;transform:scaleX(0.8806);">US Unemployment Rate</span>
<span class="t" style="left:576.24px;top:659px;font-size:17.36px;line-height:20px;color:#6b6b6b;transform:scaleX(1.0118);">1960</span>
<span class="t" style="left:763.99px;top:659px;font-size:17.36px;line-height:20px;color:#6b6b6b;transform:scaleX(1.0118);">1970</span>
<span class="t" style="left:951.74px;top:659px;font-size:17.36px;line-height:20px;color:#6b6b6b;transform:scaleX(1.0118);">1980</span>
<span class="t" style="left:1139.49px;top:659px;font-size:17.36px;line-height:20px;color:#6b6b6b;transform:scaleX(1.0118);">1990</span>
<span class="t" style="left:1328.25px;top:659px;font-size:17.36px;line-height:20px;color:#6b6b6b;transform:scaleX(0.9852);">2000</span>
<span class="t" style="left:1516.00px;top:659px;font-size:17.36px;line-height:20px;color:#6b6b6b;transform:scaleX(0.9852);">2010</span>
<span class="t" style="left:1703.75px;top:659px;font-size:17.36px;line-height:20px;color:#6b6b6b;transform:scaleX(0.9852);">2020</span>
<span class="t" style="left:576.24px;top:1243px;font-size:17.36px;line-height:20px;color:#6b6b6b;transform:scaleX(1.0118);">1960</span>
<span class="t" style="left:763.99px;top:1243px;font-size:17.36px;line-height:20px;color:#6b6b6b;transform:scaleX(1.0118);">1970</span>
<span class="t" style="left:951.74px;top:1243px;font-size:17.36px;line-height:20px;color:#6b6b6b;transform:scaleX(1.0118);">1980</span>
<span class="t" style="left:1139.49px;top:1243px;font-size:17.36px;line-height:20px;color:#6b6b6b;transform:scaleX(1.0118);">1990</span>
<span class="t" style="left:1328.25px;top:1243px;font-size:17.36px;line-height:20px;color:#6b6b6b;transform:scaleX(0.9852);">2000</span>
<span class="t" style="left:1516.00px;top:1243px;font-size:17.36px;line-height:20px;color:#6b6b6b;transform:scaleX(0.9852);">2010</span>
<span class="t" style="left:1703.75px;top:1243px;font-size:17.36px;line-height:20px;color:#6b6b6b;transform:scaleX(0.9852);">2020</span>
<span class="t" style="left:722.00px;top:941px;font-size:17.36px;line-height:20px;color:#6b6b6b;transform:scaleX(0.9510);">Q4 '67</span>
<span class="t" style="left:895.80px;top:941px;font-size:17.36px;line-height:20px;color:#6b6b6b;transform:scaleX(0.9510);">Q1 '77</span>
<span class="t" style="left:1069.60px;top:941px;font-size:17.36px;line-height:20px;color:#6b6b6b;transform:scaleX(0.9510);">Q2 '86</span>
<span class="t" style="left:1243.40px;top:941px;font-size:17.36px;line-height:20px;color:#6b6b6b;transform:scaleX(0.9510);">Q3 '95</span>
<span class="t" style="left:1417.20px;top:941px;font-size:17.36px;line-height:20px;color:#6b6b6b;transform:scaleX(0.9323);">Q4 '04</span>
<span class="t" style="left:1591.00px;top:941px;font-size:17.36px;line-height:20px;color:#6b6b6b;transform:scaleX(0.9323);">Q1 '14</span>
<span class="t" style="left:1825.25px;top:474px;font-size:17.94px;line-height:20px;color:#6b6b6b;transform:scaleX(0.9033);">20.00%</span>
<span class="t" style="left:1824.33px;top:527px;font-size:17.94px;line-height:20px;color:#6b6b6b;transform:scaleX(0.9184);">10.00%</span>
<span class="t" style="left:1824.75px;top:631px;font-size:17.94px;line-height:20px;color:#6b6b6b;transform:scaleX(0.9049);">-10.00%</span>
<span class="t" style="left:1825.25px;top:808px;font-size:17.94px;line-height:20px;color:#6b6b6b;transform:scaleX(0.9215);">20.00T</span>
<span class="t" style="left:1824.31px;top:860px;font-size:17.94px;line-height:20px;color:#6b6b6b;transform:scaleX(0.9383);">10.00T</span>
<span class="t" style="left:1825.25px;top:913px;font-size:17.94px;line-height:20px;color:#6b6b6b;transform:scaleX(0.9518);">0.00</span>
<span class="t" style="left:1824.33px;top:1042px;font-size:17.94px;line-height:20px;color:#6b6b6b;transform:scaleX(0.9184);">15.00%</span>
<span class="t" style="left:1824.33px;top:1100px;font-size:17.94px;line-height:20px;color:#6b6b6b;transform:scaleX(0.9184);">10.00%</span>
<span class="t" style="left:1825.25px;top:1215px;font-size:17.94px;line-height:20px;color:#6b6b6b;transform:scaleX(0.8888);">0.00%</span>
<span class="t" style="left:1831.00px;top:562px;font-size:17.36px;line-height:20px;color:#fff;transform:scaleX(0.9480);font-weight:700;z-index:3">4.58%</span>
<span class="t" style="left:1831.00px;top:589px;font-size:17.36px;line-height:20px;color:#fff;transform:scaleX(0.9480);font-weight:700;z-index:3">2.60%</span>
<span class="t" style="left:1831.00px;top:766px;font-size:17.36px;line-height:20px;color:#fff;transform:scaleX(0.9643);font-weight:700;z-index:3">29.35T</span>
<span class="t" style="left:1831.00px;top:1154px;font-size:17.36px;line-height:20px;color:#fff;transform:scaleX(0.9458);font-weight:700;z-index:3">5.89% AVG</span>
<span class="t" style="left:1831.00px;top:1181px;font-size:17.36px;line-height:20px;color:#fff;transform:scaleX(0.9480);font-weight:700;z-index:3">4.10%</span>
<span class="t" style="left:1732.58px;top:1038px;font-size:17.94px;line-height:20px;color:#5b8fd9;transform:scaleX(0.9217);z-index:3">Hi: 14.70%</span>
<span class="t" style="left:760.57px;top:1199px;font-size:17.94px;line-height:20px;color:#5b8fd9;transform:scaleX(0.9296);z-index:3">Low: 3.40%</span>
<span class="t" style="left:566.02px;top:1298px;font-size:17.94px;line-height:20px;color:#262626;transform:scaleX(0.9845);">Date Range: 07/01/1958 - 11/13/2024</span>
<span class="t" style="left:567.00px;top:1333px;font-size:17.55px;line-height:20px;color:#262626;transform:scaleX(0.9337);">Gray = US Recessions</span>
<span class="t" style="left:1528.60px;top:1351px;font-size:17.36px;line-height:20px;color:#262626;transform:scaleX(0.8968);">Nov 15, 2024, 3:53 PM EST Powered by</span>
<span class="t" style="left:837.00px;top:1402px;font-size:13.94px;line-height:16px;color:#333;transform:scaleX(0.8501);">Terms of Use</span>
<span class="t" style="left:950.38px;top:1402px;font-size:13.94px;line-height:16px;color:#333;transform:scaleX(0.8669);">Disclosure</span>
<span class="t" style="left:1049.64px;top:1402px;font-size:13.94px;line-height:16px;color:#333;transform:scaleX(0.8627);">Privacy Policy</span>
<span class="t" style="left:1168.00px;top:1402px;font-size:13.94px;line-height:16px;color:#333;transform:scaleX(0.8536);">Security</span>
<span class="t" style="left:96.98px;top:11px;font-size:37.25px;line-height:42px;color:#fff;transform:scaleX(1.0190);font-weight:700;letter-spacing:4.5px;-webkit-text-stroke:0.75px #fff;">CHARTS</span>
<span class="t" style="left:1831.25px;top:1350px;font-size:21.64px;line-height:25px;color:#1a1a1a;transform:scaleX(1.0470);font-weight:700;letter-spacing:2.6px;-webkit-text-stroke:0.45px #1a1a1a;">CHARTS</span>
<span class="t" style="left:1797.40px;top:21px;font-size:21.94px;line-height:25px;color:#b0b0b0;transform:scaleX(0.8833);font-weight:700;font-family:'Liberation Serif',serif;font-style:italic;">i</span>
</div>
<div class="tl" style="z-index:6"><div class="qf"><span class="t" style="left:0.00px;top:-16px;font-size:17.55px;line-height:20px;color:#fff;transform:scaleX(0.7944);font-weight:700;">QUICKFLOWS</span></div></div>
<svg class="topicons" width="2048" height="1428" viewBox="0 0 2048 1428" fill="none">
<polygon fill="#fff" points="2023,485.6 2032.25,478.75 2032.25,492.5"/>
<rect x="1970.3" y="947.5" width="35.6" height="27.4" rx="8" fill="#fff"/>
<rect x="1965.1" y="952.2" width="35.8" height="27.4" rx="9.5" fill="#0d80e8" stroke="#0d80e8" stroke-width="5"/>
<rect x="1965.1" y="952.2" width="35.8" height="27.4" rx="9.5" fill="#fff"/>
<path d="M1978.2,978.6 H1987.4 Q1984.6,982 1983.6,985.6 Q1982.8,987.4 1982,985.6 Q1981,982 1978.2,978.6 Z" fill="#fff"/>
</svg>
</body></html>
